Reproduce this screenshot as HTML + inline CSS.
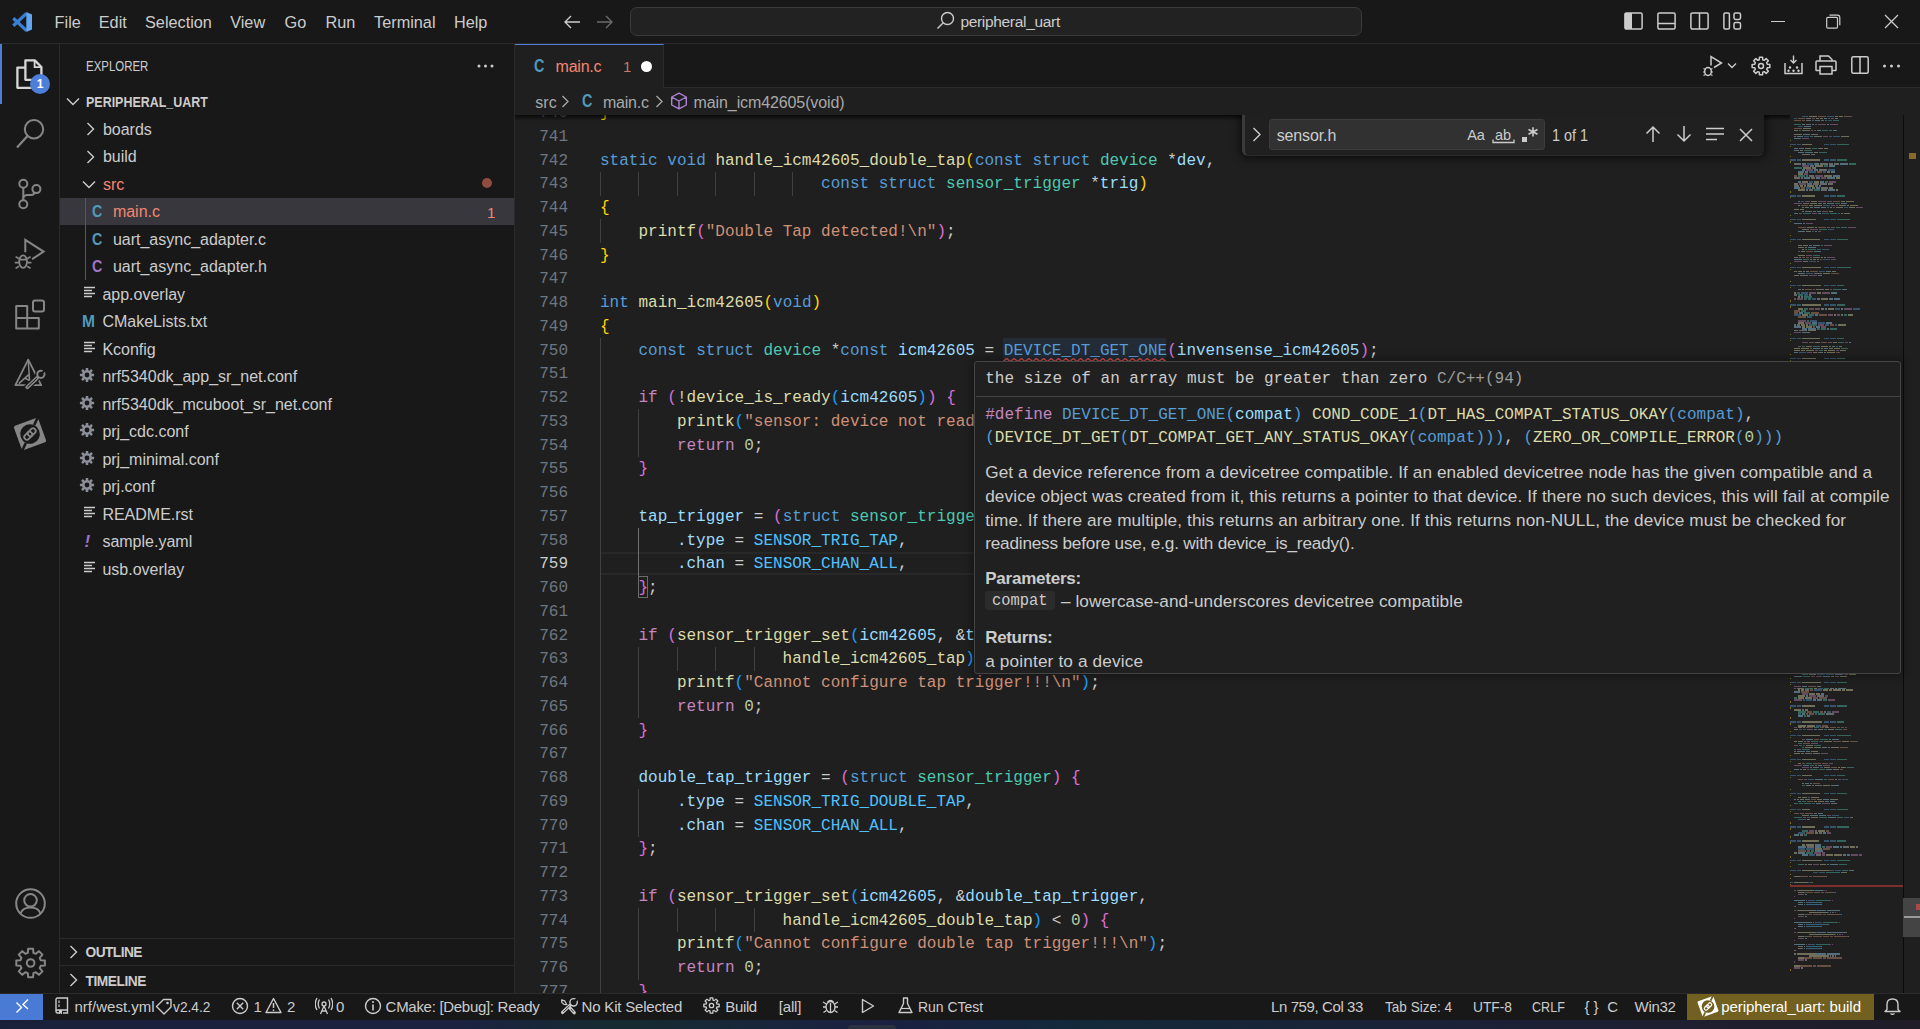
<!DOCTYPE html>
<html><head><meta charset="utf-8">
<style>
*{box-sizing:border-box;margin:0;padding:0}
html,body{width:1920px;height:1029px;overflow:hidden;background:#181818;font-family:"Liberation Sans",sans-serif;color:#cccccc}
.a{position:absolute}
.t{position:absolute;white-space:pre;font-size:16px;line-height:20px}
#titlebar{left:0;top:0;width:1920px;height:44px;background:#181818;border-bottom:1px solid #2b2b2b}
#activity{left:0;top:44px;width:60px;height:949px;background:#181818;border-right:1px solid #2b2b2b}
#sidebar{left:60px;top:44px;width:455px;height:949px;background:#181818;border-right:1px solid #2b2b2b}
#tabs{left:515px;top:44px;width:1405px;height:44px;background:#181818;border-bottom:1px solid #2b2b2b}
#editor{left:515px;top:88px;width:1405px;height:905px;background:#1f1f1f}
#status{left:0;top:993px;width:1920px;height:27px;background:#181818;border-top:1px solid #2b2b2b}
#taskbar{left:0;top:1020px;width:1920px;height:9px;background:linear-gradient(90deg,#19213a 0%,#1a2240 24%,#152b30 32%,#1a2142 46%,#13293a 56%,#1c2036 78%,#201d28 100%)}
.code{position:absolute;white-space:pre;font-family:"Liberation Mono",monospace;font-size:16.03px;line-height:23.75px;height:23.75px;color:#cccccc}
.ln{position:absolute;white-space:pre;font-family:"Liberation Mono",monospace;font-size:16.03px;line-height:23.75px;height:23.75px;color:#6e7681;text-align:right;width:53px;left:0}
.ln.act{color:#cccccc}
.k{color:#569cd6}.c{color:#c586c0}.f{color:#dcdcaa}.ty{color:#4ec9b0}.v{color:#9cdcfe}.s{color:#ce9178}.n{color:#b5cea8}.m{color:#4fc1ff}
.b1{color:#ffd700}.b2{color:#da70d6}.b3{color:#179fff}
</style></head><body>
<div id="titlebar" class="a"></div>
<div id="activity" class="a"></div>
<div id="sidebar" class="a"></div>
<div id="tabs" class="a"></div>
<div id="editor" class="a"></div>
<div id="status" class="a"></div>
<div id="taskbar" class="a"></div>

<svg class="a" style="left:10px;top:10px" width="24" height="24" viewBox="10 10 24 24" fill="none"><path d="M13.3 18.3 L26.5 30.6" stroke="#3b7fd4" stroke-width="3.3"/><path d="M13.3 25.7 L26.5 13.4" stroke="#3b7fd4" stroke-width="3.3"/><path d="M26.3 12 L32 14.6 V29.4 L26.3 32 Z" fill="#62a6f2"/></svg>
<svg class="a" style="left:562px;top:12px;" width="20" height="20" viewBox="0 0 20 20" fill="none"><path d="M18 10H3M9 4L3 10L9 16" stroke="#cccccc" stroke-width="1.4"/></svg>
<svg class="a" style="left:595px;top:12px;" width="20" height="20" viewBox="0 0 20 20" fill="none"><path d="M2 10H17M11 4L17 10L11 16" stroke="#6b6b6b" stroke-width="1.4"/></svg>
<div class="a" style="left:630px;top:7px;width:732px;height:29px;border:1px solid #3a3a3a;border-radius:7px;background:#222222"></div>
<svg class="a" style="left:936px;top:10.5px;" width="19" height="19" viewBox="0 0 19 19" fill="none"><circle cx="11.5" cy="7.5" r="6" stroke="#cccccc" stroke-width="1.4"/><path d="M7.3 11.7L1.5 17.5" stroke="#cccccc" stroke-width="1.4"/></svg>
<svg class="a" style="left:1624px;top:12px;" width="20" height="18" viewBox="0 0 20 18" fill="none"><rect x="0.9" y="0.9" width="17.2" height="16.2" rx="1.5" stroke="#cccccc" stroke-width="1.5"/><rect x="1" y="1" width="7" height="16" fill="#cccccc"/></svg>
<svg class="a" style="left:1657px;top:12px;" width="19" height="18" viewBox="0 0 19 18" fill="none"><rect x="0.9" y="0.9" width="17.2" height="16.2" rx="1.5" stroke="#cccccc" stroke-width="1.5"/><path d="M1 11.5H18" stroke="#cccccc" stroke-width="1.5"/></svg>
<svg class="a" style="left:1690px;top:12px;" width="19" height="18" viewBox="0 0 19 18" fill="none"><rect x="0.9" y="0.9" width="17.2" height="16.2" rx="1.5" stroke="#cccccc" stroke-width="1.5"/><path d="M9.5 1V17" stroke="#cccccc" stroke-width="1.5"/></svg>
<svg class="a" style="left:1723px;top:12px;" width="19" height="18" viewBox="0 0 19 18" fill="none"><rect x="0.9" y="0.9" width="5.5" height="16.2" rx="1.3" stroke="#cccccc" stroke-width="1.5"/><rect x="11" y="0.9" width="6.5" height="6.5" rx="1.6" stroke="#cccccc" stroke-width="1.5"/><rect x="11" y="10.5" width="6.5" height="6.5" rx="1.6" stroke="#cccccc" stroke-width="1.5"/></svg>
<div class="a" style="left:1770.5px;top:21px;width:14px;height:1.3px;background:#cccccc;"></div>
<svg class="a" style="left:1826px;top:14px;" width="15" height="15" viewBox="0 0 15 15" fill="none"><rect x="0.7" y="3.3" width="10.8" height="10.8" rx="1.2" stroke="#cccccc" stroke-width="1.2"/><path d="M3.5 1.2H11.5Q13.8 1.2 13.8 3.5V11.3" stroke="#cccccc" stroke-width="1.2"/></svg>
<svg class="a" style="left:1884px;top:14px;" width="15" height="15" viewBox="0 0 15 15" fill="none"><path d="M1 1L14 14M14 1L1 14" stroke="#cccccc" stroke-width="1.3"/></svg>
<div class="a" style="left:0px;top:44px;width:2px;height:60px;background:#4d7fd8;"></div>
<svg class="a" style="left:0px;top:44px" width="60" height="60" viewBox="0 44 60 60" fill="none"><path d="M25.2 67.6 H17.4 V87.8 H32" stroke="#d7d7d7" stroke-width="2.3" stroke-linejoin="round"/><path d="M25.4 60.4 H34.8 L41.4 67 V79.8 H25.4 Z" stroke="#d7d7d7" stroke-width="2.3" stroke-linejoin="round"/><path d="M34.6 60.6 V67.2 H41.2" stroke="#d7d7d7" stroke-width="1.8"/></svg>
<div class="a" style="left:30px;top:74px;width:20px;height:20px;border-radius:10px;background:#4d7fd8;color:#fff;font-size:12px;font-weight:bold;text-align:center;line-height:20px">1</div>
<svg class="a" style="left:14px;top:115px;" width="32" height="36" viewBox="0 0 32 36" fill="none"><circle cx="20" cy="14.2" r="9.2" stroke="#868686" stroke-width="2"/><path d="M13.5 21 L3 32.5" stroke="#868686" stroke-width="2.2"/></svg>
<svg class="a" style="left:14px;top:175px;" width="32" height="36" viewBox="0 0 32 36" fill="none"><circle cx="9.3" cy="8.8" r="4" stroke="#868686" stroke-width="2"/><circle cx="22.4" cy="14.1" r="4" stroke="#868686" stroke-width="2"/><circle cx="9.3" cy="29.3" r="4" stroke="#868686" stroke-width="2"/><path d="M9.3 12.8 V25.3" stroke="#868686" stroke-width="2"/><path d="M9.3 23 Q9.3 20 14 20 H17 Q20 20 20.5 17.5" stroke="#868686" stroke-width="2"/></svg>
<svg class="a" style="left:0px;top:230px" width="60" height="45" viewBox="0 230 60 45" fill="none"><path d="M25.3 252.3 V239.8 L43.6 251.6 L32.1 259.2" stroke="#868686" stroke-width="2" stroke-linejoin="miter"/><ellipse cx="23.1" cy="261.6" rx="3.9" ry="6.2" stroke="#868686" stroke-width="1.8"/><path d="M19.3 259.6 H26.9 M15.6 256.6 L19 258.8 M30.6 256.6 L27.2 258.8 M14.8 262.6 H19 M27.2 262.6 H31.4 M15.6 268.4 L19 266.2 M30.6 268.4 L27.2 266.2" stroke="#868686" stroke-width="1.7"/></svg>
<svg class="a" style="left:0px;top:290px" width="60" height="50" viewBox="0 290 60 50" fill="none"><path d="M16.2 306 H27.2 V318 H38.8 V328.6 H16.2 Z" stroke="#868686" stroke-width="2" stroke-linejoin="round"/><path d="M16.2 318 H27.2 V328.6" stroke="#868686" stroke-width="2"/><rect x="33" y="300.4" width="11" height="11" rx="2" stroke="#868686" stroke-width="2"/></svg>
<svg class="a" style="left:0px;top:350px" width="60" height="45" viewBox="0 350 60 45" fill="none"><path d="M28.2 359.6 L15.4 385.2 H41.2 Z" stroke="#868686" stroke-width="1.8" stroke-linejoin="round"/><path d="M28.2 360.5 L29.6 380 M18.8 383.6 L28.8 374.6 L29.6 380 L32 381.8 M24.7 378 L32 381.8" stroke="#868686" stroke-width="1.5"/><path d="M26.5 388 L37.5 377.5" stroke="#181818" stroke-width="6.5" stroke-linecap="round"/><circle cx="40.9" cy="374.3" r="5.8" fill="#181818"/><path d="M27.2 387.3 L37.2 377.8" stroke="#868686" stroke-width="3.8" stroke-linecap="round"/><path d="M27.8 386.7 L36.6 378.4" stroke="#181818" stroke-width="1.0" stroke-linecap="round"/><circle cx="40.9" cy="374.3" r="3.6" stroke="#868686" stroke-width="2"/><path d="M40.9 374.3 L44.5 370.5" stroke="#181818" stroke-width="2.2"/></svg>
<svg class="a" style="left:0px;top:410px" width="60" height="50" viewBox="0 410 60 50" fill="none"><g transform="rotate(-20 30 434)"><path fill-rule="evenodd" d="M19.5 421 H40.5 Q43 421 43 423.5 V444.5 Q43 447 40.5 447 H19.5 Q17 447 17 444.5 V423.5 Q17 421 19.5 421 Z M30 424.2 A9.8 9.8 0 1 0 30 443.8 A9.8 9.8 0 1 0 30 424.2 Z" fill="#868686"/><path d="M37 427 L44 420 M23 441 L16 448" stroke="#181818" stroke-width="2.6"/></g><g transform="rotate(-45 30 434)"><rect x="23" y="431.3" width="9" height="5.4" rx="2.7" stroke="#868686" stroke-width="1.8"/><rect x="28" y="431.3" width="9" height="5.4" rx="2.7" stroke="#868686" stroke-width="1.8"/></g></svg>
<svg class="a" style="left:14px;top:887px;" width="32" height="32" viewBox="0 0 32 32" fill="none"><circle cx="16.5" cy="16.5" r="14.3" stroke="#868686" stroke-width="2"/><circle cx="16.5" cy="13.3" r="6.3" stroke="#868686" stroke-width="2"/><path d="M6.5 26.5 Q8.5 20.5 16.5 20.5 Q24.5 20.5 26.5 26.5" stroke="#868686" stroke-width="2"/></svg>
<svg class="a" style="left:13.5px;top:947px;" width="32" height="32" viewBox="0 0 32 32" fill="none"><polygon points="26.72,13.20 30.88,13.51 30.88,18.49 26.72,18.80 25.74,21.18 28.46,24.34 24.94,27.86 21.78,25.14 19.40,26.12 19.09,30.28 14.11,30.28 13.80,26.12 11.42,25.14 8.26,27.86 4.74,24.34 7.46,21.18 6.48,18.80 2.32,18.49 2.32,13.51 6.48,13.20 7.46,10.82 4.74,7.66 8.26,4.14 11.42,6.86 13.80,5.88 14.11,1.72 19.09,1.72 19.40,5.88 21.78,6.86 24.94,4.14 28.46,7.66 25.74,10.82" stroke="#868686" stroke-width="2" stroke-linejoin="round" fill="none"/><circle cx="16.6" cy="16" r="3.8" stroke="#868686" stroke-width="2"/></svg>
<svg class="a" style="left:476px;top:62px;" width="20" height="8" viewBox="0 0 20 8" fill="none"><circle cx="3" cy="4" r="1.5" fill="#cccccc"/><circle cx="9.5" cy="4" r="1.5" fill="#cccccc"/><circle cx="16" cy="4" r="1.5" fill="#cccccc"/></svg>
<svg class="a" style="left:65.5px;top:97px;" width="14" height="9" viewBox="0 0 14 9" fill="none"><path d="M1 1.5 L7 7.5 L13 1.5" stroke="#cccccc" stroke-width="1.4"/></svg>
<div class="a" style="left:60px;top:198.3px;width:454px;height:26.6px;background:#37373d;"></div>
<div class="a" style="left:85px;top:198px;width:1px;height:82px;background:#585858;"></div>
<svg class="a" style="left:85.5px;top:122.4px;" width="9" height="14" viewBox="0 0 9 14" fill="none"><path d="M1.5 1 L7.5 7 L1.5 13" stroke="#cccccc" stroke-width="1.4"/></svg>
<svg class="a" style="left:85.5px;top:149.9px;" width="9" height="14" viewBox="0 0 9 14" fill="none"><path d="M1.5 1 L7.5 7 L1.5 13" stroke="#cccccc" stroke-width="1.4"/></svg>
<svg class="a" style="left:82px;top:180.4px;" width="14" height="9" viewBox="0 0 14 9" fill="none"><path d="M1 1.5 L7 7.5 L13 1.5" stroke="#cccccc" stroke-width="1.4"/></svg>
<svg class="a" style="left:83px;top:286.4px;" width="14" height="12" viewBox="0 0 14 12" fill="none"><path d="M1 1.5H12M1 4.5H9M1 7.5H12M1 10.5H9" stroke="#cccccc" stroke-width="1.5"/></svg>
<svg class="a" style="left:83px;top:341.4px;" width="14" height="12" viewBox="0 0 14 12" fill="none"><path d="M1 1.5H12M1 4.5H9M1 7.5H12M1 10.5H9" stroke="#cccccc" stroke-width="1.5"/></svg>
<svg class="a" style="left:79px;top:367.4px;" width="16" height="16" viewBox="0 0 16 16" fill="none"><polygon points="12.82,6.67 15.09,6.76 15.09,9.24 12.82,9.33 12.35,10.46 13.89,12.14 12.14,13.89 10.46,12.35 9.33,12.82 9.24,15.09 6.76,15.09 6.67,12.82 5.54,12.35 3.86,13.89 2.11,12.14 3.65,10.46 3.18,9.33 0.91,9.24 0.91,6.76 3.18,6.67 3.65,5.54 2.11,3.86 3.86,2.11 5.54,3.65 6.67,3.18 6.76,0.91 9.24,0.91 9.33,3.18 10.46,3.65 12.14,2.11 13.89,3.86 12.35,5.54" stroke="#8a939e" stroke-width="0" stroke-linejoin="round" fill="#8a8f98"/><circle fill="#181818" cx="8" cy="8" r="2.4" stroke="#8a939e" stroke-width="0"/></svg>
<svg class="a" style="left:79px;top:394.9px;" width="16" height="16" viewBox="0 0 16 16" fill="none"><polygon points="12.82,6.67 15.09,6.76 15.09,9.24 12.82,9.33 12.35,10.46 13.89,12.14 12.14,13.89 10.46,12.35 9.33,12.82 9.24,15.09 6.76,15.09 6.67,12.82 5.54,12.35 3.86,13.89 2.11,12.14 3.65,10.46 3.18,9.33 0.91,9.24 0.91,6.76 3.18,6.67 3.65,5.54 2.11,3.86 3.86,2.11 5.54,3.65 6.67,3.18 6.76,0.91 9.24,0.91 9.33,3.18 10.46,3.65 12.14,2.11 13.89,3.86 12.35,5.54" stroke="#8a939e" stroke-width="0" stroke-linejoin="round" fill="#8a8f98"/><circle fill="#181818" cx="8" cy="8" r="2.4" stroke="#8a939e" stroke-width="0"/></svg>
<svg class="a" style="left:79px;top:422.4px;" width="16" height="16" viewBox="0 0 16 16" fill="none"><polygon points="12.82,6.67 15.09,6.76 15.09,9.24 12.82,9.33 12.35,10.46 13.89,12.14 12.14,13.89 10.46,12.35 9.33,12.82 9.24,15.09 6.76,15.09 6.67,12.82 5.54,12.35 3.86,13.89 2.11,12.14 3.65,10.46 3.18,9.33 0.91,9.24 0.91,6.76 3.18,6.67 3.65,5.54 2.11,3.86 3.86,2.11 5.54,3.65 6.67,3.18 6.76,0.91 9.24,0.91 9.33,3.18 10.46,3.65 12.14,2.11 13.89,3.86 12.35,5.54" stroke="#8a939e" stroke-width="0" stroke-linejoin="round" fill="#8a8f98"/><circle fill="#181818" cx="8" cy="8" r="2.4" stroke="#8a939e" stroke-width="0"/></svg>
<svg class="a" style="left:79px;top:449.9px;" width="16" height="16" viewBox="0 0 16 16" fill="none"><polygon points="12.82,6.67 15.09,6.76 15.09,9.24 12.82,9.33 12.35,10.46 13.89,12.14 12.14,13.89 10.46,12.35 9.33,12.82 9.24,15.09 6.76,15.09 6.67,12.82 5.54,12.35 3.86,13.89 2.11,12.14 3.65,10.46 3.18,9.33 0.91,9.24 0.91,6.76 3.18,6.67 3.65,5.54 2.11,3.86 3.86,2.11 5.54,3.65 6.67,3.18 6.76,0.91 9.24,0.91 9.33,3.18 10.46,3.65 12.14,2.11 13.89,3.86 12.35,5.54" stroke="#8a939e" stroke-width="0" stroke-linejoin="round" fill="#8a8f98"/><circle fill="#181818" cx="8" cy="8" r="2.4" stroke="#8a939e" stroke-width="0"/></svg>
<svg class="a" style="left:79px;top:477.4px;" width="16" height="16" viewBox="0 0 16 16" fill="none"><polygon points="12.82,6.67 15.09,6.76 15.09,9.24 12.82,9.33 12.35,10.46 13.89,12.14 12.14,13.89 10.46,12.35 9.33,12.82 9.24,15.09 6.76,15.09 6.67,12.82 5.54,12.35 3.86,13.89 2.11,12.14 3.65,10.46 3.18,9.33 0.91,9.24 0.91,6.76 3.18,6.67 3.65,5.54 2.11,3.86 3.86,2.11 5.54,3.65 6.67,3.18 6.76,0.91 9.24,0.91 9.33,3.18 10.46,3.65 12.14,2.11 13.89,3.86 12.35,5.54" stroke="#8a939e" stroke-width="0" stroke-linejoin="round" fill="#8a8f98"/><circle fill="#181818" cx="8" cy="8" r="2.4" stroke="#8a939e" stroke-width="0"/></svg>
<svg class="a" style="left:83px;top:506.4px;" width="14" height="12" viewBox="0 0 14 12" fill="none"><path d="M1 1.5H12M1 4.5H9M1 7.5H12M1 10.5H9" stroke="#cccccc" stroke-width="1.5"/></svg>
<svg class="a" style="left:83px;top:561.4px;" width="14" height="12" viewBox="0 0 14 12" fill="none"><path d="M1 1.5H12M1 4.5H9M1 7.5H12M1 10.5H9" stroke="#cccccc" stroke-width="1.5"/></svg>
<div class="a" style="left:482px;top:178px;width:10px;height:10px;border-radius:5px;background:#8f4c3f"></div>
<div class="a" style="left:60px;top:938px;width:454px;height:1px;background:#2b2b2b;"></div>
<div class="a" style="left:60px;top:965px;width:454px;height:1px;background:#2b2b2b;"></div>
<svg class="a" style="left:69px;top:945px;" width="9" height="14" viewBox="0 0 9 14" fill="none"><path d="M1.5 1 L7.5 7 L1.5 13" stroke="#cccccc" stroke-width="1.4"/></svg>
<svg class="a" style="left:69px;top:973px;" width="9" height="14" viewBox="0 0 9 14" fill="none"><path d="M1.5 1 L7.5 7 L1.5 13" stroke="#cccccc" stroke-width="1.4"/></svg>
<div class="a" style="left:515px;top:44px;width:149px;height:44px;background:#1f1f1f;border-top:1.5px solid #4d7fd8;border-right:1px solid #2b2b2b"></div>
<div class="a" style="left:641px;top:60.5px;width:11px;height:11px;border-radius:6px;background:#ffffff"></div>
<svg class="a" style="left:1701px;top:55px;" width="38" height="22" viewBox="0 0 38 22" fill="none"><path d="M10 10.5 V1.5 L20.5 8 L13 12.5" stroke="#cccccc" stroke-width="1.5"/><ellipse cx="7" cy="16.5" rx="3.3" ry="4" stroke="#cccccc" stroke-width="1.5"/><path d="M2.5 13.5L4.5 14.5M11.5 13.5L9.5 14.5M2 17H3.5M10.5 17H12M2.5 20.5L4.5 19.5M11.5 20.5L9.5 19.5" stroke="#cccccc" stroke-width="1.2"/><path d="M27 8.5 L31 12.5 L35 8.5" stroke="#cccccc" stroke-width="1.3"/></svg>
<svg class="a" style="left:1751px;top:56px;" width="20" height="20" viewBox="0 0 20 20" fill="none"><polygon points="16.26,8.27 18.87,8.45 18.87,11.55 16.26,11.73 15.66,13.20 17.36,15.18 15.18,17.36 13.20,15.66 11.73,16.26 11.55,18.87 8.45,18.87 8.27,16.26 6.80,15.66 4.82,17.36 2.64,15.18 4.34,13.20 3.74,11.73 1.13,11.55 1.13,8.45 3.74,8.27 4.34,6.80 2.64,4.82 4.82,2.64 6.80,4.34 8.27,3.74 8.45,1.13 11.55,1.13 11.73,3.74 13.20,4.34 15.18,2.64 17.36,4.82 15.66,6.80" stroke="#cccccc" stroke-width="1.5" stroke-linejoin="round" fill="none"/><circle cx="10" cy="10" r="2.5" stroke="#cccccc" stroke-width="1.5"/></svg>
<svg class="a" style="left:1784px;top:55px;" width="19" height="20" viewBox="0 0 19 20" fill="none"><path d="M1 8 V18.5 H18 V8" stroke="#cccccc" stroke-width="1.5"/><path d="M9.5 0.5 V8 M6.5 5 L9.5 8 L12.5 5" stroke="#cccccc" stroke-width="1.4"/><circle cx="6" cy="12.5" r="1.2" fill="#cccccc"/><circle cx="13" cy="12.5" r="1.2" fill="#cccccc"/><circle cx="4.5" cy="15.8" r="1.2" fill="#cccccc"/><circle cx="9.5" cy="15.8" r="1.2" fill="#cccccc"/><circle cx="14.5" cy="15.8" r="1.2" fill="#cccccc"/></svg>
<svg class="a" style="left:1815px;top:55px;" width="22" height="20" viewBox="0 0 22 20" fill="none"><path d="M5 6 V1 H13.5 L17 4.5 V6" stroke="#cccccc" stroke-width="1.5"/><path d="M5 15.5 H1.5 Q1 15.5 1 15 V7 Q1 6 2 6 H20 Q21 6 21 7 V15 Q21 15.5 20.5 15.5 H17" stroke="#cccccc" stroke-width="1.5"/><rect x="5" y="11.5" width="12" height="7.5" stroke="#cccccc" stroke-width="1.5"/></svg>
<svg class="a" style="left:1851px;top:56px;" width="18" height="18" viewBox="0 0 18 18" fill="none"><rect x="0.8" y="0.8" width="16.4" height="16.4" rx="1.5" stroke="#cccccc" stroke-width="1.5"/><path d="M9 1V17" stroke="#cccccc" stroke-width="1.5"/></svg>
<svg class="a" style="left:1882px;top:63px;" width="19" height="6" viewBox="0 0 19 6" fill="none"><circle cx="2.5" cy="3" r="1.5" fill="#cccccc"/><circle cx="9.5" cy="3" r="1.5" fill="#cccccc"/><circle cx="16.5" cy="3" r="1.5" fill="#cccccc"/></svg>
<svg class="a" style="left:561px;top:95px;" width="9" height="13" viewBox="0 0 9 13" fill="none"><path d="M1.5 1 L7 6.5 L1.5 12" stroke="#a9a9a9" stroke-width="1.3"/></svg>
<svg class="a" style="left:655px;top:95px;" width="9" height="13" viewBox="0 0 9 13" fill="none"><path d="M1.5 1 L7 6.5 L1.5 12" stroke="#a9a9a9" stroke-width="1.3"/></svg>
<svg class="a" style="left:670px;top:92px;" width="18" height="18" viewBox="0 0 18 18" fill="none"><path d="M9 1.2 L16.3 5 V13 L9 16.8 L1.7 13 V5 Z M1.7 5 L9 9 L16.3 5 M9 9 V16.8" stroke="#b180d7" stroke-width="1.4" stroke-linejoin="round"/></svg>
<div class="a" style="left:515px;top:115px;width:1275px;height:878px;overflow:hidden">
<div class="a" style="left:85.00px;top:436.50px;width:1190px;height:23.75px;border-top:2px solid #282828;border-bottom:2px solid #282828"></div>
<div class="a" style="left:488.20px;top:222.75px;width:163.20px;height:23.75px;background:#232b36"></div>
<div class="ln" style="top:-12.85px">740</div>
<div class="code" style="left:85.00px;top:-12.85px"><span class="b1">}</span></div>
<div class="ln" style="top:10.90px">741</div>
<div class="code" style="left:85.00px;top:10.90px"></div>
<div class="ln" style="top:34.65px">742</div>
<div class="code" style="left:85.00px;top:34.65px"><span class="k">static</span> <span class="k">void</span> <span class="f">handle_icm42605_double_tap</span><span class="b1">(</span><span class="k">const</span> <span class="k">struct</span> <span class="ty">device</span> *<span class="v">dev</span>,</div>
<div class="ln" style="top:58.40px">743</div>
<div class="code" style="left:85.00px;top:58.40px">                       <span class="k">const</span> <span class="k">struct</span> <span class="ty">sensor_trigger</span> *<span class="v">trig</span><span class="b1">)</span></div>
<div class="a" style="left:85.00px;top:56.50px;width:1px;height:24.25px;background:#404040"></div>
<div class="a" style="left:123.40px;top:56.50px;width:1px;height:24.25px;background:#404040"></div>
<div class="a" style="left:161.80px;top:56.50px;width:1px;height:24.25px;background:#404040"></div>
<div class="a" style="left:200.20px;top:56.50px;width:1px;height:24.25px;background:#404040"></div>
<div class="a" style="left:238.60px;top:56.50px;width:1px;height:24.25px;background:#404040"></div>
<div class="a" style="left:277.00px;top:56.50px;width:1px;height:24.25px;background:#404040"></div>
<div class="ln" style="top:82.15px">744</div>
<div class="code" style="left:85.00px;top:82.15px"><span class="b1">{</span></div>
<div class="ln" style="top:105.90px">745</div>
<div class="code" style="left:85.00px;top:105.90px">    <span class="f">printf</span><span class="b2">(</span><span class="s">&quot;Double Tap detected!\n&quot;</span><span class="b2">)</span>;</div>
<div class="a" style="left:85.00px;top:104.00px;width:1px;height:24.25px;background:#404040"></div>
<div class="ln" style="top:129.65px">746</div>
<div class="code" style="left:85.00px;top:129.65px"><span class="b1">}</span></div>
<div class="ln" style="top:153.40px">747</div>
<div class="code" style="left:85.00px;top:153.40px"></div>
<div class="ln" style="top:177.15px">748</div>
<div class="code" style="left:85.00px;top:177.15px"><span class="k">int</span> <span class="f">main_icm42605</span><span class="b1">(</span><span class="k">void</span><span class="b1">)</span></div>
<div class="ln" style="top:200.90px">749</div>
<div class="code" style="left:85.00px;top:200.90px"><span class="b1">{</span></div>
<div class="ln" style="top:224.65px">750</div>
<div class="code" style="left:85.00px;top:224.65px">    <span class="k">const</span> <span class="k">struct</span> <span class="ty">device</span> *<span class="k">const</span> <span class="v">icm42605</span> = <span class="k">DEVICE_DT_GET_ONE</span><span class="b2">(</span><span class="v">invensense_icm42605</span><span class="b2">)</span>;</div>
<div class="a" style="left:85.00px;top:222.75px;width:1px;height:24.25px;background:#404040"></div>
<div class="ln" style="top:248.40px">751</div>
<div class="code" style="left:85.00px;top:248.40px"></div>
<div class="a" style="left:85.00px;top:246.50px;width:1px;height:24.25px;background:#404040"></div>
<div class="ln" style="top:272.15px">752</div>
<div class="code" style="left:85.00px;top:272.15px">    <span class="c">if</span> <span class="b2">(</span>!<span class="f">device_is_ready</span><span class="b3">(</span><span class="v">icm42605</span><span class="b3">)</span><span class="b2">)</span> <span class="b2">{</span></div>
<div class="a" style="left:85.00px;top:270.25px;width:1px;height:24.25px;background:#404040"></div>
<div class="ln" style="top:295.90px">753</div>
<div class="code" style="left:85.00px;top:295.90px">        <span class="f">printk</span><span class="b3">(</span><span class="s">&quot;sensor: device not ready.\n&quot;</span><span class="b3">)</span>;</div>
<div class="a" style="left:85.00px;top:294.00px;width:1px;height:24.25px;background:#404040"></div>
<div class="a" style="left:123.40px;top:294.00px;width:1px;height:24.25px;background:#404040"></div>
<div class="ln" style="top:319.65px">754</div>
<div class="code" style="left:85.00px;top:319.65px">        <span class="c">return</span> <span class="n">0</span>;</div>
<div class="a" style="left:85.00px;top:317.75px;width:1px;height:24.25px;background:#404040"></div>
<div class="a" style="left:123.40px;top:317.75px;width:1px;height:24.25px;background:#404040"></div>
<div class="ln" style="top:343.40px">755</div>
<div class="code" style="left:85.00px;top:343.40px">    <span class="b2">}</span></div>
<div class="a" style="left:85.00px;top:341.50px;width:1px;height:24.25px;background:#404040"></div>
<div class="ln" style="top:367.15px">756</div>
<div class="code" style="left:85.00px;top:367.15px"></div>
<div class="a" style="left:85.00px;top:365.25px;width:1px;height:24.25px;background:#404040"></div>
<div class="ln" style="top:390.90px">757</div>
<div class="code" style="left:85.00px;top:390.90px">    <span class="v">tap_trigger</span> = <span class="b2">(</span><span class="k">struct</span> <span class="ty">sensor_trigger</span><span class="b2">)</span> <span class="b2">{</span></div>
<div class="a" style="left:85.00px;top:389.00px;width:1px;height:24.25px;background:#404040"></div>
<div class="ln" style="top:414.65px">758</div>
<div class="code" style="left:85.00px;top:414.65px">        <span class="v">.type</span> = <span class="m">SENSOR_TRIG_TAP</span>,</div>
<div class="a" style="left:85.00px;top:412.75px;width:1px;height:24.25px;background:#404040"></div>
<div class="a" style="left:123.40px;top:412.75px;width:1px;height:24.25px;background:#707070"></div>
<div class="ln act" style="top:438.40px">759</div>
<div class="code" style="left:85.00px;top:438.40px">        <span class="v">.chan</span> = <span class="m">SENSOR_CHAN_ALL</span>,</div>
<div class="a" style="left:85.00px;top:436.50px;width:1px;height:24.25px;background:#404040"></div>
<div class="a" style="left:123.40px;top:436.50px;width:1px;height:24.25px;background:#707070"></div>
<div class="ln" style="top:462.15px">760</div>
<div class="code" style="left:85.00px;top:462.15px">    <span class="b2">}</span>;</div>
<div class="a" style="left:85.00px;top:460.25px;width:1px;height:24.25px;background:#404040"></div>
<div class="ln" style="top:485.90px">761</div>
<div class="code" style="left:85.00px;top:485.90px"></div>
<div class="a" style="left:85.00px;top:484.00px;width:1px;height:24.25px;background:#404040"></div>
<div class="ln" style="top:509.65px">762</div>
<div class="code" style="left:85.00px;top:509.65px">    <span class="c">if</span> <span class="b2">(</span><span class="f">sensor_trigger_set</span><span class="b3">(</span><span class="v">icm42605</span>, &amp;<span class="v">tap_trigger</span>,</div>
<div class="a" style="left:85.00px;top:507.75px;width:1px;height:24.25px;background:#404040"></div>
<div class="ln" style="top:533.40px">763</div>
<div class="code" style="left:85.00px;top:533.40px">                   <span class="f">handle_icm42605_tap</span><span class="b3">)</span> &lt; <span class="n">0</span><span class="b2">)</span> <span class="b2">{</span></div>
<div class="a" style="left:85.00px;top:531.50px;width:1px;height:24.25px;background:#404040"></div>
<div class="a" style="left:123.40px;top:531.50px;width:1px;height:24.25px;background:#404040"></div>
<div class="a" style="left:161.80px;top:531.50px;width:1px;height:24.25px;background:#404040"></div>
<div class="a" style="left:200.20px;top:531.50px;width:1px;height:24.25px;background:#404040"></div>
<div class="a" style="left:238.60px;top:531.50px;width:1px;height:24.25px;background:#404040"></div>
<div class="ln" style="top:557.15px">764</div>
<div class="code" style="left:85.00px;top:557.15px">        <span class="f">printf</span><span class="b3">(</span><span class="s">&quot;Cannot configure tap trigger!!!\n&quot;</span><span class="b3">)</span>;</div>
<div class="a" style="left:85.00px;top:555.25px;width:1px;height:24.25px;background:#404040"></div>
<div class="a" style="left:123.40px;top:555.25px;width:1px;height:24.25px;background:#404040"></div>
<div class="ln" style="top:580.90px">765</div>
<div class="code" style="left:85.00px;top:580.90px">        <span class="c">return</span> <span class="n">0</span>;</div>
<div class="a" style="left:85.00px;top:579.00px;width:1px;height:24.25px;background:#404040"></div>
<div class="a" style="left:123.40px;top:579.00px;width:1px;height:24.25px;background:#404040"></div>
<div class="ln" style="top:604.65px">766</div>
<div class="code" style="left:85.00px;top:604.65px">    <span class="b2">}</span></div>
<div class="a" style="left:85.00px;top:602.75px;width:1px;height:24.25px;background:#404040"></div>
<div class="ln" style="top:628.40px">767</div>
<div class="code" style="left:85.00px;top:628.40px"></div>
<div class="a" style="left:85.00px;top:626.50px;width:1px;height:24.25px;background:#404040"></div>
<div class="ln" style="top:652.15px">768</div>
<div class="code" style="left:85.00px;top:652.15px">    <span class="v">double_tap_trigger</span> = <span class="b2">(</span><span class="k">struct</span> <span class="ty">sensor_trigger</span><span class="b2">)</span> <span class="b2">{</span></div>
<div class="a" style="left:85.00px;top:650.25px;width:1px;height:24.25px;background:#404040"></div>
<div class="ln" style="top:675.90px">769</div>
<div class="code" style="left:85.00px;top:675.90px">        <span class="v">.type</span> = <span class="m">SENSOR_TRIG_DOUBLE_TAP</span>,</div>
<div class="a" style="left:85.00px;top:674.00px;width:1px;height:24.25px;background:#404040"></div>
<div class="a" style="left:123.40px;top:674.00px;width:1px;height:24.25px;background:#404040"></div>
<div class="ln" style="top:699.65px">770</div>
<div class="code" style="left:85.00px;top:699.65px">        <span class="v">.chan</span> = <span class="m">SENSOR_CHAN_ALL</span>,</div>
<div class="a" style="left:85.00px;top:697.75px;width:1px;height:24.25px;background:#404040"></div>
<div class="a" style="left:123.40px;top:697.75px;width:1px;height:24.25px;background:#404040"></div>
<div class="ln" style="top:723.40px">771</div>
<div class="code" style="left:85.00px;top:723.40px">    <span class="b2">}</span>;</div>
<div class="a" style="left:85.00px;top:721.50px;width:1px;height:24.25px;background:#404040"></div>
<div class="ln" style="top:747.15px">772</div>
<div class="code" style="left:85.00px;top:747.15px"></div>
<div class="a" style="left:85.00px;top:745.25px;width:1px;height:24.25px;background:#404040"></div>
<div class="ln" style="top:770.90px">773</div>
<div class="code" style="left:85.00px;top:770.90px">    <span class="c">if</span> <span class="b2">(</span><span class="f">sensor_trigger_set</span><span class="b3">(</span><span class="v">icm42605</span>, &amp;<span class="v">double_tap_trigger</span>,</div>
<div class="a" style="left:85.00px;top:769.00px;width:1px;height:24.25px;background:#404040"></div>
<div class="ln" style="top:794.65px">774</div>
<div class="code" style="left:85.00px;top:794.65px">                   <span class="f">handle_icm42605_double_tap</span><span class="b3">)</span> &lt; <span class="n">0</span><span class="b2">)</span> <span class="b2">{</span></div>
<div class="a" style="left:85.00px;top:792.75px;width:1px;height:24.25px;background:#404040"></div>
<div class="a" style="left:123.40px;top:792.75px;width:1px;height:24.25px;background:#404040"></div>
<div class="a" style="left:161.80px;top:792.75px;width:1px;height:24.25px;background:#404040"></div>
<div class="a" style="left:200.20px;top:792.75px;width:1px;height:24.25px;background:#404040"></div>
<div class="a" style="left:238.60px;top:792.75px;width:1px;height:24.25px;background:#404040"></div>
<div class="ln" style="top:818.40px">775</div>
<div class="code" style="left:85.00px;top:818.40px">        <span class="f">printf</span><span class="b3">(</span><span class="s">&quot;Cannot configure double tap trigger!!!\n&quot;</span><span class="b3">)</span>;</div>
<div class="a" style="left:85.00px;top:816.50px;width:1px;height:24.25px;background:#404040"></div>
<div class="a" style="left:123.40px;top:816.50px;width:1px;height:24.25px;background:#404040"></div>
<div class="ln" style="top:842.15px">776</div>
<div class="code" style="left:85.00px;top:842.15px">        <span class="c">return</span> <span class="n">0</span>;</div>
<div class="a" style="left:85.00px;top:840.25px;width:1px;height:24.25px;background:#404040"></div>
<div class="a" style="left:123.40px;top:840.25px;width:1px;height:24.25px;background:#404040"></div>
<div class="ln" style="top:865.90px">777</div>
<div class="code" style="left:85.00px;top:865.90px">    <span class="b2">}</span></div>
<div class="a" style="left:85.00px;top:864.00px;width:1px;height:24.25px;background:#404040"></div>
<svg class="a" style="left:488.20px;top:242.50px" width="163.2" height="4"><path d="M0 3.5 L3.70 0.5L7.40 3.5L11.10 0.5L14.80 3.5L18.50 0.5L22.20 3.5L25.90 0.5L29.60 3.5L33.30 0.5L37.00 3.5L40.70 0.5L44.40 3.5L48.10 0.5L51.80 3.5L55.50 0.5L59.20 3.5L62.90 0.5L66.60 3.5L70.30 0.5L74.00 3.5L77.70 0.5L81.40 3.5L85.10 0.5L88.80 3.5L92.50 0.5L96.20 3.5L99.90 0.5L103.60 3.5L107.30 0.5L111.00 3.5L114.70 0.5L118.40 3.5L122.10 0.5L125.80 3.5L129.50 0.5L133.20 3.5L136.90 0.5L140.60 3.5L144.30 0.5L148.00 3.5L151.70 0.5L155.40 3.5L159.10 0.5L162.80 3.5L166.50 0.5L170.20 3.5" stroke="#e0514a" stroke-width="1.3" fill="none"/></svg>
<div class="a" style="left:122.90px;top:461.25px;width:10.60px;height:21.75px;border:1px solid #6b6b6b"></div>
<div class="a" style="left:0;top:0;width:1275px;height:6px;background:linear-gradient(#000000aa,transparent)"></div>
</div>
<div class="a" style="left:1790px;top:115px;width:113px;height:878px;overflow:hidden;opacity:0.42">
<div class="a" style="left:0.00px;top:-1.17px;width:1.00px;height:1.3px;background:#ffd700"></div>
<div class="a" style="left:12.00px;top:0.82px;width:6.00px;height:1.3px;background:#569cd6"></div>
<div class="a" style="left:19.00px;top:0.82px;width:8.00px;height:1.3px;background:#dcdcaa"></div>
<div class="a" style="left:28.00px;top:0.82px;width:8.00px;height:1.3px;background:#ce9178"></div>
<div class="a" style="left:37.00px;top:0.82px;width:7.00px;height:1.3px;background:#569cd6"></div>
<div class="a" style="left:45.00px;top:0.82px;width:3.00px;height:1.3px;background:#dcdcaa"></div>
<div class="a" style="left:49.00px;top:0.82px;width:4.00px;height:1.3px;background:#dcdcaa"></div>
<div class="a" style="left:54.00px;top:0.82px;width:8.00px;height:1.3px;background:#ce9178"></div>
<div class="a" style="left:4.00px;top:2.80px;width:3.00px;height:1.3px;background:#569cd6"></div>
<div class="a" style="left:8.00px;top:2.80px;width:7.00px;height:1.3px;background:#ce9178"></div>
<div class="a" style="left:16.00px;top:2.80px;width:5.00px;height:1.3px;background:#cccccc"></div>
<div class="a" style="left:22.00px;top:2.80px;width:3.00px;height:1.3px;background:#c586c0"></div>
<div class="a" style="left:26.00px;top:2.80px;width:3.00px;height:1.3px;background:#dcdcaa"></div>
<div class="a" style="left:30.00px;top:2.80px;width:3.00px;height:1.3px;background:#dcdcaa"></div>
<div class="a" style="left:34.00px;top:2.80px;width:3.00px;height:1.3px;background:#9cdcfe"></div>
<div class="a" style="left:38.00px;top:2.80px;width:2.00px;height:1.3px;background:#569cd6"></div>
<div class="a" style="left:41.00px;top:2.80px;width:3.00px;height:1.3px;background:#ce9178"></div>
<div class="a" style="left:45.00px;top:2.80px;width:3.00px;height:1.3px;background:#9cdcfe"></div>
<div class="a" style="left:4.00px;top:4.79px;width:7.00px;height:1.3px;background:#ce9178"></div>
<div class="a" style="left:12.00px;top:4.79px;width:3.00px;height:1.3px;background:#ce9178"></div>
<div class="a" style="left:16.00px;top:4.79px;width:5.00px;height:1.3px;background:#cccccc"></div>
<div class="a" style="left:22.00px;top:4.79px;width:2.00px;height:1.3px;background:#4ec9b0"></div>
<div class="a" style="left:25.00px;top:4.79px;width:5.00px;height:1.3px;background:#9cdcfe"></div>
<div class="a" style="left:31.00px;top:4.79px;width:3.00px;height:1.3px;background:#cccccc"></div>
<div class="a" style="left:35.00px;top:4.79px;width:2.00px;height:1.3px;background:#4ec9b0"></div>
<div class="a" style="left:38.00px;top:4.79px;width:4.00px;height:1.3px;background:#569cd6"></div>
<div class="a" style="left:43.00px;top:4.79px;width:6.00px;height:1.3px;background:#4ec9b0"></div>
<div class="a" style="left:4.00px;top:8.76px;width:7.00px;height:1.3px;background:#4ec9b0"></div>
<div class="a" style="left:12.00px;top:8.76px;width:3.00px;height:1.3px;background:#dcdcaa"></div>
<div class="a" style="left:16.00px;top:8.76px;width:5.00px;height:1.3px;background:#9cdcfe"></div>
<div class="a" style="left:22.00px;top:8.76px;width:2.00px;height:1.3px;background:#cccccc"></div>
<div class="a" style="left:25.00px;top:8.76px;width:2.00px;height:1.3px;background:#4ec9b0"></div>
<div class="a" style="left:28.00px;top:8.76px;width:8.00px;height:1.3px;background:#c586c0"></div>
<div class="a" style="left:37.00px;top:8.76px;width:2.00px;height:1.3px;background:#9cdcfe"></div>
<div class="a" style="left:40.00px;top:8.76px;width:8.00px;height:1.3px;background:#c586c0"></div>
<div class="a" style="left:8.00px;top:10.75px;width:5.00px;height:1.3px;background:#569cd6"></div>
<div class="a" style="left:14.00px;top:10.75px;width:7.00px;height:1.3px;background:#9cdcfe"></div>
<div class="a" style="left:4.00px;top:12.73px;width:8.00px;height:1.3px;background:#ce9178"></div>
<div class="a" style="left:13.00px;top:12.73px;width:8.00px;height:1.3px;background:#dcdcaa"></div>
<div class="a" style="left:4.00px;top:14.71px;width:4.00px;height:1.3px;background:#dcdcaa"></div>
<div class="a" style="left:9.00px;top:14.71px;width:2.00px;height:1.3px;background:#4ec9b0"></div>
<div class="a" style="left:12.00px;top:14.71px;width:8.00px;height:1.3px;background:#cccccc"></div>
<div class="a" style="left:21.00px;top:14.71px;width:2.00px;height:1.3px;background:#c586c0"></div>
<div class="a" style="left:24.00px;top:14.71px;width:2.00px;height:1.3px;background:#ce9178"></div>
<div class="a" style="left:27.00px;top:14.71px;width:4.00px;height:1.3px;background:#9cdcfe"></div>
<div class="a" style="left:32.00px;top:14.71px;width:6.00px;height:1.3px;background:#4ec9b0"></div>
<div class="a" style="left:39.00px;top:14.71px;width:3.00px;height:1.3px;background:#4ec9b0"></div>
<div class="a" style="left:43.00px;top:14.71px;width:4.00px;height:1.3px;background:#9cdcfe"></div>
<div class="a" style="left:4.00px;top:18.68px;width:8.00px;height:1.3px;background:#dcdcaa"></div>
<div class="a" style="left:13.00px;top:18.68px;width:7.00px;height:1.3px;background:#9cdcfe"></div>
<div class="a" style="left:21.00px;top:18.68px;width:7.00px;height:1.3px;background:#cccccc"></div>
<div class="a" style="left:4.00px;top:20.67px;width:2.00px;height:1.3px;background:#dcdcaa"></div>
<div class="a" style="left:7.00px;top:20.67px;width:6.00px;height:1.3px;background:#9cdcfe"></div>
<div class="a" style="left:14.00px;top:20.67px;width:5.00px;height:1.3px;background:#569cd6"></div>
<div class="a" style="left:20.00px;top:20.67px;width:3.00px;height:1.3px;background:#4ec9b0"></div>
<div class="a" style="left:24.00px;top:20.67px;width:8.00px;height:1.3px;background:#cccccc"></div>
<div class="a" style="left:33.00px;top:20.67px;width:5.00px;height:1.3px;background:#c586c0"></div>
<div class="a" style="left:39.00px;top:20.67px;width:3.00px;height:1.3px;background:#569cd6"></div>
<div class="a" style="left:43.00px;top:20.67px;width:7.00px;height:1.3px;background:#569cd6"></div>
<div class="a" style="left:51.00px;top:20.67px;width:8.00px;height:1.3px;background:#dcdcaa"></div>
<div class="a" style="left:4.00px;top:22.65px;width:7.00px;height:1.3px;background:#9cdcfe"></div>
<div class="a" style="left:12.00px;top:22.65px;width:7.00px;height:1.3px;background:#c586c0"></div>
<div class="a" style="left:0.00px;top:24.64px;width:1.00px;height:1.3px;background:#ffd700"></div>
<div class="a" style="left:0.00px;top:28.61px;width:6.00px;height:1.3px;background:#569cd6"></div>
<div class="a" style="left:7.00px;top:28.61px;width:4.00px;height:1.3px;background:#569cd6"></div>
<div class="a" style="left:12.00px;top:28.61px;width:10.00px;height:1.3px;background:#dcdcaa"></div>
<div class="a" style="left:34.00px;top:28.61px;width:5.00px;height:1.3px;background:#569cd6"></div>
<div class="a" style="left:40.00px;top:28.61px;width:6.00px;height:1.3px;background:#569cd6"></div>
<div class="a" style="left:47.00px;top:28.61px;width:12.00px;height:1.3px;background:#4ec9b0"></div>
<div class="a" style="left:0.00px;top:30.59px;width:1.00px;height:1.3px;background:#ffd700"></div>
<div class="a" style="left:4.00px;top:32.58px;width:4.00px;height:1.3px;background:#9cdcfe"></div>
<div class="a" style="left:9.00px;top:32.58px;width:5.00px;height:1.3px;background:#9cdcfe"></div>
<div class="a" style="left:15.00px;top:32.58px;width:6.00px;height:1.3px;background:#dcdcaa"></div>
<div class="a" style="left:22.00px;top:32.58px;width:5.00px;height:1.3px;background:#4ec9b0"></div>
<div class="a" style="left:28.00px;top:32.58px;width:5.00px;height:1.3px;background:#cccccc"></div>
<div class="a" style="left:34.00px;top:32.58px;width:4.00px;height:1.3px;background:#dcdcaa"></div>
<div class="a" style="left:4.00px;top:34.56px;width:5.00px;height:1.3px;background:#9cdcfe"></div>
<div class="a" style="left:10.00px;top:34.56px;width:3.00px;height:1.3px;background:#dcdcaa"></div>
<div class="a" style="left:14.00px;top:34.56px;width:8.00px;height:1.3px;background:#4ec9b0"></div>
<div class="a" style="left:8.00px;top:36.55px;width:6.00px;height:1.3px;background:#9cdcfe"></div>
<div class="a" style="left:15.00px;top:36.55px;width:8.00px;height:1.3px;background:#9cdcfe"></div>
<div class="a" style="left:24.00px;top:36.55px;width:4.00px;height:1.3px;background:#dcdcaa"></div>
<div class="a" style="left:29.00px;top:36.55px;width:8.00px;height:1.3px;background:#4ec9b0"></div>
<div class="a" style="left:12.00px;top:38.53px;width:8.00px;height:1.3px;background:#cccccc"></div>
<div class="a" style="left:21.00px;top:38.53px;width:4.00px;height:1.3px;background:#9cdcfe"></div>
<div class="a" style="left:0.00px;top:40.52px;width:1.00px;height:1.3px;background:#ffd700"></div>
<div class="a" style="left:0.00px;top:44.49px;width:6.00px;height:1.3px;background:#569cd6"></div>
<div class="a" style="left:7.00px;top:44.49px;width:4.00px;height:1.3px;background:#569cd6"></div>
<div class="a" style="left:12.00px;top:44.49px;width:18.00px;height:1.3px;background:#dcdcaa"></div>
<div class="a" style="left:34.00px;top:44.49px;width:5.00px;height:1.3px;background:#569cd6"></div>
<div class="a" style="left:40.00px;top:44.49px;width:6.00px;height:1.3px;background:#569cd6"></div>
<div class="a" style="left:47.00px;top:44.49px;width:10.00px;height:1.3px;background:#4ec9b0"></div>
<div class="a" style="left:0.00px;top:46.47px;width:1.00px;height:1.3px;background:#ffd700"></div>
<div class="a" style="left:4.00px;top:48.46px;width:7.00px;height:1.3px;background:#cccccc"></div>
<div class="a" style="left:12.00px;top:48.46px;width:4.00px;height:1.3px;background:#9cdcfe"></div>
<div class="a" style="left:17.00px;top:48.46px;width:6.00px;height:1.3px;background:#569cd6"></div>
<div class="a" style="left:24.00px;top:48.46px;width:5.00px;height:1.3px;background:#9cdcfe"></div>
<div class="a" style="left:30.00px;top:48.46px;width:8.00px;height:1.3px;background:#cccccc"></div>
<div class="a" style="left:39.00px;top:48.46px;width:4.00px;height:1.3px;background:#cccccc"></div>
<div class="a" style="left:44.00px;top:48.46px;width:5.00px;height:1.3px;background:#cccccc"></div>
<div class="a" style="left:50.00px;top:48.46px;width:8.00px;height:1.3px;background:#9cdcfe"></div>
<div class="a" style="left:59.00px;top:48.46px;width:7.00px;height:1.3px;background:#4ec9b0"></div>
<div class="a" style="left:12.00px;top:50.44px;width:7.00px;height:1.3px;background:#c586c0"></div>
<div class="a" style="left:20.00px;top:50.44px;width:4.00px;height:1.3px;background:#9cdcfe"></div>
<div class="a" style="left:25.00px;top:50.44px;width:8.00px;height:1.3px;background:#dcdcaa"></div>
<div class="a" style="left:34.00px;top:50.44px;width:4.00px;height:1.3px;background:#4ec9b0"></div>
<div class="a" style="left:39.00px;top:50.44px;width:6.00px;height:1.3px;background:#9cdcfe"></div>
<div class="a" style="left:4.00px;top:52.43px;width:8.00px;height:1.3px;background:#4ec9b0"></div>
<div class="a" style="left:13.00px;top:52.43px;width:8.00px;height:1.3px;background:#dcdcaa"></div>
<div class="a" style="left:22.00px;top:52.43px;width:4.00px;height:1.3px;background:#dcdcaa"></div>
<div class="a" style="left:12.00px;top:54.41px;width:3.00px;height:1.3px;background:#9cdcfe"></div>
<div class="a" style="left:16.00px;top:54.41px;width:7.00px;height:1.3px;background:#c586c0"></div>
<div class="a" style="left:24.00px;top:54.41px;width:4.00px;height:1.3px;background:#9cdcfe"></div>
<div class="a" style="left:29.00px;top:54.41px;width:8.00px;height:1.3px;background:#cccccc"></div>
<div class="a" style="left:38.00px;top:54.41px;width:7.00px;height:1.3px;background:#569cd6"></div>
<div class="a" style="left:8.00px;top:56.40px;width:6.00px;height:1.3px;background:#9cdcfe"></div>
<div class="a" style="left:15.00px;top:56.40px;width:3.00px;height:1.3px;background:#9cdcfe"></div>
<div class="a" style="left:19.00px;top:56.40px;width:7.00px;height:1.3px;background:#569cd6"></div>
<div class="a" style="left:27.00px;top:56.40px;width:5.00px;height:1.3px;background:#ce9178"></div>
<div class="a" style="left:33.00px;top:56.40px;width:3.00px;height:1.3px;background:#569cd6"></div>
<div class="a" style="left:37.00px;top:56.40px;width:3.00px;height:1.3px;background:#dcdcaa"></div>
<div class="a" style="left:41.00px;top:56.40px;width:4.00px;height:1.3px;background:#9cdcfe"></div>
<div class="a" style="left:8.00px;top:58.38px;width:5.00px;height:1.3px;background:#dcdcaa"></div>
<div class="a" style="left:14.00px;top:58.38px;width:4.00px;height:1.3px;background:#c586c0"></div>
<div class="a" style="left:4.00px;top:60.37px;width:3.00px;height:1.3px;background:#ce9178"></div>
<div class="a" style="left:8.00px;top:60.37px;width:7.00px;height:1.3px;background:#4ec9b0"></div>
<div class="a" style="left:16.00px;top:60.37px;width:2.00px;height:1.3px;background:#4ec9b0"></div>
<div class="a" style="left:19.00px;top:60.37px;width:5.00px;height:1.3px;background:#cccccc"></div>
<div class="a" style="left:25.00px;top:60.37px;width:8.00px;height:1.3px;background:#c586c0"></div>
<div class="a" style="left:34.00px;top:60.37px;width:8.00px;height:1.3px;background:#dcdcaa"></div>
<div class="a" style="left:43.00px;top:60.37px;width:7.00px;height:1.3px;background:#9cdcfe"></div>
<div class="a" style="left:4.00px;top:62.36px;width:6.00px;height:1.3px;background:#cccccc"></div>
<div class="a" style="left:11.00px;top:62.36px;width:2.00px;height:1.3px;background:#cccccc"></div>
<div class="a" style="left:14.00px;top:62.36px;width:6.00px;height:1.3px;background:#9cdcfe"></div>
<div class="a" style="left:21.00px;top:62.36px;width:4.00px;height:1.3px;background:#cccccc"></div>
<div class="a" style="left:26.00px;top:62.36px;width:4.00px;height:1.3px;background:#9cdcfe"></div>
<div class="a" style="left:31.00px;top:62.36px;width:5.00px;height:1.3px;background:#c586c0"></div>
<div class="a" style="left:37.00px;top:62.36px;width:8.00px;height:1.3px;background:#9cdcfe"></div>
<div class="a" style="left:46.00px;top:62.36px;width:4.00px;height:1.3px;background:#dcdcaa"></div>
<div class="a" style="left:8.00px;top:66.32px;width:3.00px;height:1.3px;background:#9cdcfe"></div>
<div class="a" style="left:12.00px;top:66.32px;width:6.00px;height:1.3px;background:#dcdcaa"></div>
<div class="a" style="left:19.00px;top:66.32px;width:4.00px;height:1.3px;background:#569cd6"></div>
<div class="a" style="left:24.00px;top:66.32px;width:5.00px;height:1.3px;background:#dcdcaa"></div>
<div class="a" style="left:30.00px;top:66.32px;width:4.00px;height:1.3px;background:#9cdcfe"></div>
<div class="a" style="left:35.00px;top:66.32px;width:3.00px;height:1.3px;background:#4ec9b0"></div>
<div class="a" style="left:39.00px;top:66.32px;width:7.00px;height:1.3px;background:#c586c0"></div>
<div class="a" style="left:4.00px;top:68.31px;width:4.00px;height:1.3px;background:#dcdcaa"></div>
<div class="a" style="left:9.00px;top:68.31px;width:7.00px;height:1.3px;background:#c586c0"></div>
<div class="a" style="left:17.00px;top:68.31px;width:5.00px;height:1.3px;background:#9cdcfe"></div>
<div class="a" style="left:23.00px;top:68.31px;width:6.00px;height:1.3px;background:#cccccc"></div>
<div class="a" style="left:30.00px;top:68.31px;width:7.00px;height:1.3px;background:#cccccc"></div>
<div class="a" style="left:38.00px;top:68.31px;width:5.00px;height:1.3px;background:#cccccc"></div>
<div class="a" style="left:4.00px;top:70.29px;width:5.00px;height:1.3px;background:#cccccc"></div>
<div class="a" style="left:10.00px;top:70.29px;width:3.00px;height:1.3px;background:#dcdcaa"></div>
<div class="a" style="left:14.00px;top:70.29px;width:2.00px;height:1.3px;background:#dcdcaa"></div>
<div class="a" style="left:17.00px;top:70.29px;width:7.00px;height:1.3px;background:#dcdcaa"></div>
<div class="a" style="left:25.00px;top:70.29px;width:3.00px;height:1.3px;background:#cccccc"></div>
<div class="a" style="left:29.00px;top:70.29px;width:2.00px;height:1.3px;background:#9cdcfe"></div>
<div class="a" style="left:4.00px;top:72.28px;width:6.00px;height:1.3px;background:#9cdcfe"></div>
<div class="a" style="left:11.00px;top:72.28px;width:4.00px;height:1.3px;background:#ce9178"></div>
<div class="a" style="left:16.00px;top:72.28px;width:5.00px;height:1.3px;background:#569cd6"></div>
<div class="a" style="left:22.00px;top:72.28px;width:3.00px;height:1.3px;background:#dcdcaa"></div>
<div class="a" style="left:26.00px;top:72.28px;width:4.00px;height:1.3px;background:#9cdcfe"></div>
<div class="a" style="left:31.00px;top:72.28px;width:7.00px;height:1.3px;background:#cccccc"></div>
<div class="a" style="left:39.00px;top:72.28px;width:4.00px;height:1.3px;background:#dcdcaa"></div>
<div class="a" style="left:8.00px;top:74.26px;width:7.00px;height:1.3px;background:#dcdcaa"></div>
<div class="a" style="left:16.00px;top:74.26px;width:2.00px;height:1.3px;background:#9cdcfe"></div>
<div class="a" style="left:19.00px;top:74.26px;width:4.00px;height:1.3px;background:#cccccc"></div>
<div class="a" style="left:24.00px;top:74.26px;width:6.00px;height:1.3px;background:#4ec9b0"></div>
<div class="a" style="left:31.00px;top:74.26px;width:6.00px;height:1.3px;background:#cccccc"></div>
<div class="a" style="left:38.00px;top:74.26px;width:7.00px;height:1.3px;background:#9cdcfe"></div>
<div class="a" style="left:46.00px;top:74.26px;width:2.00px;height:1.3px;background:#dcdcaa"></div>
<div class="a" style="left:0.00px;top:76.25px;width:1.00px;height:1.3px;background:#ffd700"></div>
<div class="a" style="left:0.00px;top:80.22px;width:6.00px;height:1.3px;background:#569cd6"></div>
<div class="a" style="left:7.00px;top:80.22px;width:4.00px;height:1.3px;background:#569cd6"></div>
<div class="a" style="left:12.00px;top:80.22px;width:13.00px;height:1.3px;background:#dcdcaa"></div>
<div class="a" style="left:34.00px;top:80.22px;width:5.00px;height:1.3px;background:#569cd6"></div>
<div class="a" style="left:40.00px;top:80.22px;width:6.00px;height:1.3px;background:#569cd6"></div>
<div class="a" style="left:47.00px;top:80.22px;width:8.00px;height:1.3px;background:#4ec9b0"></div>
<div class="a" style="left:0.00px;top:82.20px;width:1.00px;height:1.3px;background:#ffd700"></div>
<div class="a" style="left:8.00px;top:86.17px;width:2.00px;height:1.3px;background:#9cdcfe"></div>
<div class="a" style="left:11.00px;top:86.17px;width:3.00px;height:1.3px;background:#569cd6"></div>
<div class="a" style="left:15.00px;top:86.17px;width:5.00px;height:1.3px;background:#c586c0"></div>
<div class="a" style="left:21.00px;top:86.17px;width:6.00px;height:1.3px;background:#dcdcaa"></div>
<div class="a" style="left:28.00px;top:86.17px;width:8.00px;height:1.3px;background:#c586c0"></div>
<div class="a" style="left:37.00px;top:86.17px;width:5.00px;height:1.3px;background:#c586c0"></div>
<div class="a" style="left:43.00px;top:86.17px;width:7.00px;height:1.3px;background:#ce9178"></div>
<div class="a" style="left:51.00px;top:86.17px;width:4.00px;height:1.3px;background:#dcdcaa"></div>
<div class="a" style="left:56.00px;top:86.17px;width:8.00px;height:1.3px;background:#dcdcaa"></div>
<div class="a" style="left:4.00px;top:88.16px;width:8.00px;height:1.3px;background:#c586c0"></div>
<div class="a" style="left:13.00px;top:88.16px;width:6.00px;height:1.3px;background:#cccccc"></div>
<div class="a" style="left:20.00px;top:88.16px;width:7.00px;height:1.3px;background:#dcdcaa"></div>
<div class="a" style="left:28.00px;top:88.16px;width:4.00px;height:1.3px;background:#9cdcfe"></div>
<div class="a" style="left:33.00px;top:88.16px;width:3.00px;height:1.3px;background:#dcdcaa"></div>
<div class="a" style="left:37.00px;top:88.16px;width:7.00px;height:1.3px;background:#9cdcfe"></div>
<div class="a" style="left:45.00px;top:88.16px;width:5.00px;height:1.3px;background:#4ec9b0"></div>
<div class="a" style="left:51.00px;top:88.16px;width:6.00px;height:1.3px;background:#9cdcfe"></div>
<div class="a" style="left:8.00px;top:90.14px;width:2.00px;height:1.3px;background:#dcdcaa"></div>
<div class="a" style="left:11.00px;top:90.14px;width:7.00px;height:1.3px;background:#ce9178"></div>
<div class="a" style="left:19.00px;top:90.14px;width:4.00px;height:1.3px;background:#dcdcaa"></div>
<div class="a" style="left:24.00px;top:90.14px;width:8.00px;height:1.3px;background:#dcdcaa"></div>
<div class="a" style="left:33.00px;top:90.14px;width:7.00px;height:1.3px;background:#569cd6"></div>
<div class="a" style="left:41.00px;top:90.14px;width:4.00px;height:1.3px;background:#c586c0"></div>
<div class="a" style="left:46.00px;top:90.14px;width:2.00px;height:1.3px;background:#c586c0"></div>
<div class="a" style="left:49.00px;top:90.14px;width:7.00px;height:1.3px;background:#dcdcaa"></div>
<div class="a" style="left:57.00px;top:90.14px;width:2.00px;height:1.3px;background:#dcdcaa"></div>
<div class="a" style="left:60.00px;top:90.14px;width:8.00px;height:1.3px;background:#dcdcaa"></div>
<div class="a" style="left:12.00px;top:92.13px;width:2.00px;height:1.3px;background:#9cdcfe"></div>
<div class="a" style="left:15.00px;top:92.13px;width:4.00px;height:1.3px;background:#dcdcaa"></div>
<div class="a" style="left:20.00px;top:92.13px;width:3.00px;height:1.3px;background:#9cdcfe"></div>
<div class="a" style="left:24.00px;top:92.13px;width:6.00px;height:1.3px;background:#9cdcfe"></div>
<div class="a" style="left:31.00px;top:92.13px;width:5.00px;height:1.3px;background:#9cdcfe"></div>
<div class="a" style="left:37.00px;top:92.13px;width:2.00px;height:1.3px;background:#ce9178"></div>
<div class="a" style="left:40.00px;top:92.13px;width:2.00px;height:1.3px;background:#9cdcfe"></div>
<div class="a" style="left:43.00px;top:92.13px;width:2.00px;height:1.3px;background:#c586c0"></div>
<div class="a" style="left:46.00px;top:92.13px;width:7.00px;height:1.3px;background:#dcdcaa"></div>
<div class="a" style="left:54.00px;top:92.13px;width:4.00px;height:1.3px;background:#569cd6"></div>
<div class="a" style="left:59.00px;top:92.13px;width:6.00px;height:1.3px;background:#dcdcaa"></div>
<div class="a" style="left:66.00px;top:92.13px;width:7.00px;height:1.3px;background:#c586c0"></div>
<div class="a" style="left:4.00px;top:94.12px;width:5.00px;height:1.3px;background:#dcdcaa"></div>
<div class="a" style="left:10.00px;top:94.12px;width:4.00px;height:1.3px;background:#dcdcaa"></div>
<div class="a" style="left:12.00px;top:96.10px;width:2.00px;height:1.3px;background:#9cdcfe"></div>
<div class="a" style="left:15.00px;top:96.10px;width:7.00px;height:1.3px;background:#cccccc"></div>
<div class="a" style="left:23.00px;top:96.10px;width:3.00px;height:1.3px;background:#9cdcfe"></div>
<div class="a" style="left:27.00px;top:96.10px;width:4.00px;height:1.3px;background:#9cdcfe"></div>
<div class="a" style="left:32.00px;top:96.10px;width:6.00px;height:1.3px;background:#ce9178"></div>
<div class="a" style="left:39.00px;top:96.10px;width:4.00px;height:1.3px;background:#dcdcaa"></div>
<div class="a" style="left:4.00px;top:98.08px;width:4.00px;height:1.3px;background:#9cdcfe"></div>
<div class="a" style="left:9.00px;top:98.08px;width:3.00px;height:1.3px;background:#ce9178"></div>
<div class="a" style="left:13.00px;top:98.08px;width:8.00px;height:1.3px;background:#4ec9b0"></div>
<div class="a" style="left:22.00px;top:98.08px;width:5.00px;height:1.3px;background:#c586c0"></div>
<div class="a" style="left:28.00px;top:98.08px;width:3.00px;height:1.3px;background:#9cdcfe"></div>
<div class="a" style="left:32.00px;top:98.08px;width:7.00px;height:1.3px;background:#569cd6"></div>
<div class="a" style="left:40.00px;top:98.08px;width:7.00px;height:1.3px;background:#4ec9b0"></div>
<div class="a" style="left:48.00px;top:98.08px;width:2.00px;height:1.3px;background:#569cd6"></div>
<div class="a" style="left:51.00px;top:98.08px;width:2.00px;height:1.3px;background:#dcdcaa"></div>
<div class="a" style="left:54.00px;top:98.08px;width:6.00px;height:1.3px;background:#dcdcaa"></div>
<div class="a" style="left:0.00px;top:100.07px;width:1.00px;height:1.3px;background:#ffd700"></div>
<div class="a" style="left:0.00px;top:104.04px;width:6.00px;height:1.3px;background:#569cd6"></div>
<div class="a" style="left:7.00px;top:104.04px;width:4.00px;height:1.3px;background:#569cd6"></div>
<div class="a" style="left:12.00px;top:104.04px;width:14.00px;height:1.3px;background:#dcdcaa"></div>
<div class="a" style="left:34.00px;top:104.04px;width:5.00px;height:1.3px;background:#569cd6"></div>
<div class="a" style="left:40.00px;top:104.04px;width:6.00px;height:1.3px;background:#569cd6"></div>
<div class="a" style="left:47.00px;top:104.04px;width:13.00px;height:1.3px;background:#4ec9b0"></div>
<div class="a" style="left:0.00px;top:106.02px;width:1.00px;height:1.3px;background:#ffd700"></div>
<div class="a" style="left:4.00px;top:108.01px;width:8.00px;height:1.3px;background:#9cdcfe"></div>
<div class="a" style="left:13.00px;top:108.01px;width:2.00px;height:1.3px;background:#9cdcfe"></div>
<div class="a" style="left:16.00px;top:108.01px;width:7.00px;height:1.3px;background:#c586c0"></div>
<div class="a" style="left:8.00px;top:111.98px;width:8.00px;height:1.3px;background:#ce9178"></div>
<div class="a" style="left:17.00px;top:111.98px;width:7.00px;height:1.3px;background:#dcdcaa"></div>
<div class="a" style="left:25.00px;top:111.98px;width:2.00px;height:1.3px;background:#dcdcaa"></div>
<div class="a" style="left:28.00px;top:111.98px;width:8.00px;height:1.3px;background:#ce9178"></div>
<div class="a" style="left:37.00px;top:111.98px;width:3.00px;height:1.3px;background:#c586c0"></div>
<div class="a" style="left:41.00px;top:111.98px;width:4.00px;height:1.3px;background:#ce9178"></div>
<div class="a" style="left:46.00px;top:111.98px;width:4.00px;height:1.3px;background:#4ec9b0"></div>
<div class="a" style="left:51.00px;top:111.98px;width:6.00px;height:1.3px;background:#4ec9b0"></div>
<div class="a" style="left:58.00px;top:111.98px;width:8.00px;height:1.3px;background:#c586c0"></div>
<div class="a" style="left:12.00px;top:113.96px;width:7.00px;height:1.3px;background:#cccccc"></div>
<div class="a" style="left:20.00px;top:113.96px;width:8.00px;height:1.3px;background:#c586c0"></div>
<div class="a" style="left:29.00px;top:113.96px;width:8.00px;height:1.3px;background:#4ec9b0"></div>
<div class="a" style="left:38.00px;top:113.96px;width:6.00px;height:1.3px;background:#569cd6"></div>
<div class="a" style="left:8.00px;top:115.95px;width:7.00px;height:1.3px;background:#9cdcfe"></div>
<div class="a" style="left:16.00px;top:115.95px;width:5.00px;height:1.3px;background:#dcdcaa"></div>
<div class="a" style="left:22.00px;top:115.95px;width:2.00px;height:1.3px;background:#569cd6"></div>
<div class="a" style="left:25.00px;top:115.95px;width:2.00px;height:1.3px;background:#9cdcfe"></div>
<div class="a" style="left:28.00px;top:115.95px;width:3.00px;height:1.3px;background:#ce9178"></div>
<div class="a" style="left:0.00px;top:119.92px;width:1.00px;height:1.3px;background:#ffd700"></div>
<div class="a" style="left:0.00px;top:123.89px;width:6.00px;height:1.3px;background:#569cd6"></div>
<div class="a" style="left:7.00px;top:123.89px;width:4.00px;height:1.3px;background:#569cd6"></div>
<div class="a" style="left:12.00px;top:123.89px;width:18.00px;height:1.3px;background:#dcdcaa"></div>
<div class="a" style="left:34.00px;top:123.89px;width:5.00px;height:1.3px;background:#569cd6"></div>
<div class="a" style="left:40.00px;top:123.89px;width:6.00px;height:1.3px;background:#569cd6"></div>
<div class="a" style="left:47.00px;top:123.89px;width:11.00px;height:1.3px;background:#4ec9b0"></div>
<div class="a" style="left:0.00px;top:125.88px;width:1.00px;height:1.3px;background:#ffd700"></div>
<div class="a" style="left:8.00px;top:129.84px;width:4.00px;height:1.3px;background:#dcdcaa"></div>
<div class="a" style="left:13.00px;top:129.84px;width:5.00px;height:1.3px;background:#dcdcaa"></div>
<div class="a" style="left:19.00px;top:129.84px;width:3.00px;height:1.3px;background:#9cdcfe"></div>
<div class="a" style="left:23.00px;top:129.84px;width:7.00px;height:1.3px;background:#9cdcfe"></div>
<div class="a" style="left:31.00px;top:129.84px;width:2.00px;height:1.3px;background:#4ec9b0"></div>
<div class="a" style="left:34.00px;top:129.84px;width:8.00px;height:1.3px;background:#c586c0"></div>
<div class="a" style="left:8.00px;top:131.83px;width:6.00px;height:1.3px;background:#cccccc"></div>
<div class="a" style="left:15.00px;top:131.83px;width:2.00px;height:1.3px;background:#cccccc"></div>
<div class="a" style="left:18.00px;top:131.83px;width:8.00px;height:1.3px;background:#9cdcfe"></div>
<div class="a" style="left:12.00px;top:133.81px;width:2.00px;height:1.3px;background:#dcdcaa"></div>
<div class="a" style="left:15.00px;top:133.81px;width:2.00px;height:1.3px;background:#4ec9b0"></div>
<div class="a" style="left:18.00px;top:133.81px;width:8.00px;height:1.3px;background:#4ec9b0"></div>
<div class="a" style="left:27.00px;top:133.81px;width:4.00px;height:1.3px;background:#569cd6"></div>
<div class="a" style="left:32.00px;top:133.81px;width:7.00px;height:1.3px;background:#569cd6"></div>
<div class="a" style="left:8.00px;top:135.80px;width:2.00px;height:1.3px;background:#4ec9b0"></div>
<div class="a" style="left:11.00px;top:135.80px;width:4.00px;height:1.3px;background:#dcdcaa"></div>
<div class="a" style="left:16.00px;top:135.80px;width:7.00px;height:1.3px;background:#ce9178"></div>
<div class="a" style="left:24.00px;top:135.80px;width:7.00px;height:1.3px;background:#9cdcfe"></div>
<div class="a" style="left:8.00px;top:139.77px;width:7.00px;height:1.3px;background:#dcdcaa"></div>
<div class="a" style="left:16.00px;top:139.77px;width:6.00px;height:1.3px;background:#c586c0"></div>
<div class="a" style="left:23.00px;top:139.77px;width:7.00px;height:1.3px;background:#4ec9b0"></div>
<div class="a" style="left:4.00px;top:141.75px;width:4.00px;height:1.3px;background:#cccccc"></div>
<div class="a" style="left:9.00px;top:141.75px;width:2.00px;height:1.3px;background:#dcdcaa"></div>
<div class="a" style="left:12.00px;top:141.75px;width:3.00px;height:1.3px;background:#ce9178"></div>
<div class="a" style="left:16.00px;top:141.75px;width:3.00px;height:1.3px;background:#ce9178"></div>
<div class="a" style="left:20.00px;top:141.75px;width:2.00px;height:1.3px;background:#c586c0"></div>
<div class="a" style="left:23.00px;top:141.75px;width:7.00px;height:1.3px;background:#cccccc"></div>
<div class="a" style="left:31.00px;top:141.75px;width:2.00px;height:1.3px;background:#dcdcaa"></div>
<div class="a" style="left:34.00px;top:141.75px;width:2.00px;height:1.3px;background:#dcdcaa"></div>
<div class="a" style="left:37.00px;top:141.75px;width:8.00px;height:1.3px;background:#c586c0"></div>
<div class="a" style="left:4.00px;top:143.74px;width:8.00px;height:1.3px;background:#9cdcfe"></div>
<div class="a" style="left:13.00px;top:143.74px;width:6.00px;height:1.3px;background:#4ec9b0"></div>
<div class="a" style="left:20.00px;top:143.74px;width:2.00px;height:1.3px;background:#dcdcaa"></div>
<div class="a" style="left:23.00px;top:143.74px;width:3.00px;height:1.3px;background:#dcdcaa"></div>
<div class="a" style="left:27.00px;top:143.74px;width:2.00px;height:1.3px;background:#dcdcaa"></div>
<div class="a" style="left:30.00px;top:143.74px;width:2.00px;height:1.3px;background:#ce9178"></div>
<div class="a" style="left:33.00px;top:143.74px;width:7.00px;height:1.3px;background:#569cd6"></div>
<div class="a" style="left:41.00px;top:143.74px;width:5.00px;height:1.3px;background:#c586c0"></div>
<div class="a" style="left:4.00px;top:145.73px;width:8.00px;height:1.3px;background:#c586c0"></div>
<div class="a" style="left:13.00px;top:145.73px;width:5.00px;height:1.3px;background:#cccccc"></div>
<div class="a" style="left:19.00px;top:145.73px;width:7.00px;height:1.3px;background:#569cd6"></div>
<div class="a" style="left:27.00px;top:145.73px;width:2.00px;height:1.3px;background:#ce9178"></div>
<div class="a" style="left:0.00px;top:147.71px;width:1.00px;height:1.3px;background:#ffd700"></div>
<div class="a" style="left:0.00px;top:151.68px;width:6.00px;height:1.3px;background:#569cd6"></div>
<div class="a" style="left:7.00px;top:151.68px;width:4.00px;height:1.3px;background:#569cd6"></div>
<div class="a" style="left:12.00px;top:151.68px;width:19.00px;height:1.3px;background:#dcdcaa"></div>
<div class="a" style="left:34.00px;top:151.68px;width:5.00px;height:1.3px;background:#569cd6"></div>
<div class="a" style="left:40.00px;top:151.68px;width:6.00px;height:1.3px;background:#569cd6"></div>
<div class="a" style="left:47.00px;top:151.68px;width:14.00px;height:1.3px;background:#4ec9b0"></div>
<div class="a" style="left:0.00px;top:153.66px;width:1.00px;height:1.3px;background:#ffd700"></div>
<div class="a" style="left:4.00px;top:155.65px;width:3.00px;height:1.3px;background:#dcdcaa"></div>
<div class="a" style="left:8.00px;top:155.65px;width:4.00px;height:1.3px;background:#dcdcaa"></div>
<div class="a" style="left:13.00px;top:155.65px;width:2.00px;height:1.3px;background:#9cdcfe"></div>
<div class="a" style="left:16.00px;top:155.65px;width:3.00px;height:1.3px;background:#dcdcaa"></div>
<div class="a" style="left:20.00px;top:155.65px;width:8.00px;height:1.3px;background:#ce9178"></div>
<div class="a" style="left:29.00px;top:155.65px;width:6.00px;height:1.3px;background:#569cd6"></div>
<div class="a" style="left:36.00px;top:155.65px;width:5.00px;height:1.3px;background:#9cdcfe"></div>
<div class="a" style="left:42.00px;top:155.65px;width:4.00px;height:1.3px;background:#dcdcaa"></div>
<div class="a" style="left:8.00px;top:157.63px;width:7.00px;height:1.3px;background:#9cdcfe"></div>
<div class="a" style="left:16.00px;top:157.63px;width:7.00px;height:1.3px;background:#569cd6"></div>
<div class="a" style="left:24.00px;top:157.63px;width:8.00px;height:1.3px;background:#cccccc"></div>
<div class="a" style="left:33.00px;top:157.63px;width:7.00px;height:1.3px;background:#dcdcaa"></div>
<div class="a" style="left:41.00px;top:157.63px;width:8.00px;height:1.3px;background:#ce9178"></div>
<div class="a" style="left:4.00px;top:159.62px;width:5.00px;height:1.3px;background:#dcdcaa"></div>
<div class="a" style="left:10.00px;top:159.62px;width:8.00px;height:1.3px;background:#cccccc"></div>
<div class="a" style="left:19.00px;top:159.62px;width:8.00px;height:1.3px;background:#c586c0"></div>
<div class="a" style="left:28.00px;top:159.62px;width:4.00px;height:1.3px;background:#9cdcfe"></div>
<div class="a" style="left:0.00px;top:165.57px;width:1.00px;height:1.3px;background:#ffd700"></div>
<div class="a" style="left:0.00px;top:169.54px;width:6.00px;height:1.3px;background:#569cd6"></div>
<div class="a" style="left:7.00px;top:169.54px;width:4.00px;height:1.3px;background:#569cd6"></div>
<div class="a" style="left:12.00px;top:169.54px;width:19.00px;height:1.3px;background:#dcdcaa"></div>
<div class="a" style="left:34.00px;top:169.54px;width:5.00px;height:1.3px;background:#569cd6"></div>
<div class="a" style="left:40.00px;top:169.54px;width:6.00px;height:1.3px;background:#569cd6"></div>
<div class="a" style="left:47.00px;top:169.54px;width:7.00px;height:1.3px;background:#4ec9b0"></div>
<div class="a" style="left:0.00px;top:171.53px;width:1.00px;height:1.3px;background:#ffd700"></div>
<div class="a" style="left:8.00px;top:173.51px;width:3.00px;height:1.3px;background:#cccccc"></div>
<div class="a" style="left:12.00px;top:173.51px;width:2.00px;height:1.3px;background:#dcdcaa"></div>
<div class="a" style="left:15.00px;top:173.51px;width:7.00px;height:1.3px;background:#ce9178"></div>
<div class="a" style="left:23.00px;top:173.51px;width:2.00px;height:1.3px;background:#ce9178"></div>
<div class="a" style="left:26.00px;top:173.51px;width:8.00px;height:1.3px;background:#cccccc"></div>
<div class="a" style="left:35.00px;top:173.51px;width:4.00px;height:1.3px;background:#dcdcaa"></div>
<div class="a" style="left:40.00px;top:173.51px;width:2.00px;height:1.3px;background:#c586c0"></div>
<div class="a" style="left:43.00px;top:173.51px;width:8.00px;height:1.3px;background:#4ec9b0"></div>
<div class="a" style="left:52.00px;top:173.51px;width:5.00px;height:1.3px;background:#9cdcfe"></div>
<div class="a" style="left:4.00px;top:177.49px;width:2.00px;height:1.3px;background:#dcdcaa"></div>
<div class="a" style="left:7.00px;top:177.49px;width:3.00px;height:1.3px;background:#569cd6"></div>
<div class="a" style="left:11.00px;top:177.49px;width:7.00px;height:1.3px;background:#569cd6"></div>
<div class="a" style="left:19.00px;top:177.49px;width:7.00px;height:1.3px;background:#c586c0"></div>
<div class="a" style="left:27.00px;top:177.49px;width:4.00px;height:1.3px;background:#dcdcaa"></div>
<div class="a" style="left:32.00px;top:177.49px;width:8.00px;height:1.3px;background:#c586c0"></div>
<div class="a" style="left:41.00px;top:177.49px;width:6.00px;height:1.3px;background:#9cdcfe"></div>
<div class="a" style="left:4.00px;top:179.47px;width:3.00px;height:1.3px;background:#cccccc"></div>
<div class="a" style="left:8.00px;top:179.47px;width:5.00px;height:1.3px;background:#4ec9b0"></div>
<div class="a" style="left:14.00px;top:179.47px;width:4.00px;height:1.3px;background:#569cd6"></div>
<div class="a" style="left:19.00px;top:179.47px;width:2.00px;height:1.3px;background:#9cdcfe"></div>
<div class="a" style="left:8.00px;top:181.45px;width:2.00px;height:1.3px;background:#dcdcaa"></div>
<div class="a" style="left:11.00px;top:181.45px;width:2.00px;height:1.3px;background:#9cdcfe"></div>
<div class="a" style="left:14.00px;top:181.45px;width:8.00px;height:1.3px;background:#4ec9b0"></div>
<div class="a" style="left:4.00px;top:183.44px;width:2.00px;height:1.3px;background:#ce9178"></div>
<div class="a" style="left:7.00px;top:183.44px;width:6.00px;height:1.3px;background:#c586c0"></div>
<div class="a" style="left:14.00px;top:183.44px;width:3.00px;height:1.3px;background:#4ec9b0"></div>
<div class="a" style="left:18.00px;top:183.44px;width:3.00px;height:1.3px;background:#4ec9b0"></div>
<div class="a" style="left:22.00px;top:183.44px;width:4.00px;height:1.3px;background:#569cd6"></div>
<div class="a" style="left:27.00px;top:183.44px;width:3.00px;height:1.3px;background:#9cdcfe"></div>
<div class="a" style="left:31.00px;top:183.44px;width:7.00px;height:1.3px;background:#dcdcaa"></div>
<div class="a" style="left:39.00px;top:183.44px;width:4.00px;height:1.3px;background:#9cdcfe"></div>
<div class="a" style="left:44.00px;top:183.44px;width:6.00px;height:1.3px;background:#9cdcfe"></div>
<div class="a" style="left:0.00px;top:185.42px;width:1.00px;height:1.3px;background:#ffd700"></div>
<div class="a" style="left:0.00px;top:189.39px;width:6.00px;height:1.3px;background:#569cd6"></div>
<div class="a" style="left:7.00px;top:189.39px;width:4.00px;height:1.3px;background:#569cd6"></div>
<div class="a" style="left:12.00px;top:189.39px;width:19.00px;height:1.3px;background:#dcdcaa"></div>
<div class="a" style="left:34.00px;top:189.39px;width:5.00px;height:1.3px;background:#569cd6"></div>
<div class="a" style="left:40.00px;top:189.39px;width:6.00px;height:1.3px;background:#569cd6"></div>
<div class="a" style="left:47.00px;top:189.39px;width:8.00px;height:1.3px;background:#4ec9b0"></div>
<div class="a" style="left:0.00px;top:191.38px;width:1.00px;height:1.3px;background:#ffd700"></div>
<div class="a" style="left:8.00px;top:193.37px;width:5.00px;height:1.3px;background:#dcdcaa"></div>
<div class="a" style="left:14.00px;top:193.37px;width:4.00px;height:1.3px;background:#4ec9b0"></div>
<div class="a" style="left:19.00px;top:193.37px;width:5.00px;height:1.3px;background:#ce9178"></div>
<div class="a" style="left:25.00px;top:193.37px;width:5.00px;height:1.3px;background:#c586c0"></div>
<div class="a" style="left:31.00px;top:193.37px;width:3.00px;height:1.3px;background:#dcdcaa"></div>
<div class="a" style="left:35.00px;top:193.37px;width:2.00px;height:1.3px;background:#9cdcfe"></div>
<div class="a" style="left:38.00px;top:193.37px;width:6.00px;height:1.3px;background:#dcdcaa"></div>
<div class="a" style="left:45.00px;top:193.37px;width:5.00px;height:1.3px;background:#569cd6"></div>
<div class="a" style="left:51.00px;top:193.37px;width:2.00px;height:1.3px;background:#9cdcfe"></div>
<div class="a" style="left:54.00px;top:193.37px;width:8.00px;height:1.3px;background:#c586c0"></div>
<div class="a" style="left:63.00px;top:193.37px;width:7.00px;height:1.3px;background:#569cd6"></div>
<div class="a" style="left:4.00px;top:195.35px;width:6.00px;height:1.3px;background:#ce9178"></div>
<div class="a" style="left:11.00px;top:195.35px;width:5.00px;height:1.3px;background:#4ec9b0"></div>
<div class="a" style="left:4.00px;top:197.33px;width:4.00px;height:1.3px;background:#ce9178"></div>
<div class="a" style="left:9.00px;top:197.33px;width:4.00px;height:1.3px;background:#9cdcfe"></div>
<div class="a" style="left:14.00px;top:197.33px;width:6.00px;height:1.3px;background:#4ec9b0"></div>
<div class="a" style="left:21.00px;top:197.33px;width:8.00px;height:1.3px;background:#ce9178"></div>
<div class="a" style="left:4.00px;top:199.32px;width:7.00px;height:1.3px;background:#569cd6"></div>
<div class="a" style="left:12.00px;top:199.32px;width:6.00px;height:1.3px;background:#dcdcaa"></div>
<div class="a" style="left:19.00px;top:199.32px;width:5.00px;height:1.3px;background:#4ec9b0"></div>
<div class="a" style="left:25.00px;top:199.32px;width:3.00px;height:1.3px;background:#9cdcfe"></div>
<div class="a" style="left:29.00px;top:199.32px;width:8.00px;height:1.3px;background:#ce9178"></div>
<div class="a" style="left:38.00px;top:199.32px;width:5.00px;height:1.3px;background:#c586c0"></div>
<div class="a" style="left:44.00px;top:199.32px;width:2.00px;height:1.3px;background:#dcdcaa"></div>
<div class="a" style="left:47.00px;top:199.32px;width:3.00px;height:1.3px;background:#c586c0"></div>
<div class="a" style="left:51.00px;top:199.32px;width:2.00px;height:1.3px;background:#cccccc"></div>
<div class="a" style="left:54.00px;top:199.32px;width:3.00px;height:1.3px;background:#4ec9b0"></div>
<div class="a" style="left:58.00px;top:199.32px;width:5.00px;height:1.3px;background:#dcdcaa"></div>
<div class="a" style="left:8.00px;top:201.30px;width:8.00px;height:1.3px;background:#ce9178"></div>
<div class="a" style="left:17.00px;top:201.30px;width:5.00px;height:1.3px;background:#569cd6"></div>
<div class="a" style="left:8.00px;top:205.27px;width:8.00px;height:1.3px;background:#c586c0"></div>
<div class="a" style="left:17.00px;top:205.27px;width:2.00px;height:1.3px;background:#4ec9b0"></div>
<div class="a" style="left:20.00px;top:205.27px;width:7.00px;height:1.3px;background:#569cd6"></div>
<div class="a" style="left:8.00px;top:207.26px;width:6.00px;height:1.3px;background:#dcdcaa"></div>
<div class="a" style="left:15.00px;top:207.26px;width:6.00px;height:1.3px;background:#c586c0"></div>
<div class="a" style="left:22.00px;top:207.26px;width:5.00px;height:1.3px;background:#9cdcfe"></div>
<div class="a" style="left:28.00px;top:207.26px;width:7.00px;height:1.3px;background:#569cd6"></div>
<div class="a" style="left:36.00px;top:207.26px;width:6.00px;height:1.3px;background:#9cdcfe"></div>
<div class="a" style="left:4.00px;top:209.25px;width:2.00px;height:1.3px;background:#9cdcfe"></div>
<div class="a" style="left:7.00px;top:209.25px;width:3.00px;height:1.3px;background:#cccccc"></div>
<div class="a" style="left:11.00px;top:209.25px;width:4.00px;height:1.3px;background:#dcdcaa"></div>
<div class="a" style="left:16.00px;top:209.25px;width:2.00px;height:1.3px;background:#dcdcaa"></div>
<div class="a" style="left:19.00px;top:209.25px;width:8.00px;height:1.3px;background:#4ec9b0"></div>
<div class="a" style="left:28.00px;top:209.25px;width:6.00px;height:1.3px;background:#c586c0"></div>
<div class="a" style="left:35.00px;top:209.25px;width:4.00px;height:1.3px;background:#569cd6"></div>
<div class="a" style="left:40.00px;top:209.25px;width:4.00px;height:1.3px;background:#ce9178"></div>
<div class="a" style="left:45.00px;top:209.25px;width:2.00px;height:1.3px;background:#569cd6"></div>
<div class="a" style="left:48.00px;top:209.25px;width:8.00px;height:1.3px;background:#dcdcaa"></div>
<div class="a" style="left:4.00px;top:211.23px;width:7.00px;height:1.3px;background:#9cdcfe"></div>
<div class="a" style="left:12.00px;top:211.23px;width:3.00px;height:1.3px;background:#dcdcaa"></div>
<div class="a" style="left:16.00px;top:211.23px;width:6.00px;height:1.3px;background:#dcdcaa"></div>
<div class="a" style="left:23.00px;top:211.23px;width:2.00px;height:1.3px;background:#ce9178"></div>
<div class="a" style="left:26.00px;top:211.23px;width:4.00px;height:1.3px;background:#9cdcfe"></div>
<div class="a" style="left:31.00px;top:211.23px;width:5.00px;height:1.3px;background:#c586c0"></div>
<div class="a" style="left:12.00px;top:213.21px;width:5.00px;height:1.3px;background:#9cdcfe"></div>
<div class="a" style="left:18.00px;top:213.21px;width:8.00px;height:1.3px;background:#9cdcfe"></div>
<div class="a" style="left:27.00px;top:213.21px;width:3.00px;height:1.3px;background:#4ec9b0"></div>
<div class="a" style="left:31.00px;top:213.21px;width:5.00px;height:1.3px;background:#4ec9b0"></div>
<div class="a" style="left:37.00px;top:213.21px;width:2.00px;height:1.3px;background:#9cdcfe"></div>
<div class="a" style="left:40.00px;top:213.21px;width:7.00px;height:1.3px;background:#4ec9b0"></div>
<div class="a" style="left:4.00px;top:215.20px;width:4.00px;height:1.3px;background:#cccccc"></div>
<div class="a" style="left:9.00px;top:215.20px;width:8.00px;height:1.3px;background:#cccccc"></div>
<div class="a" style="left:18.00px;top:215.20px;width:8.00px;height:1.3px;background:#dcdcaa"></div>
<div class="a" style="left:4.00px;top:217.18px;width:7.00px;height:1.3px;background:#c586c0"></div>
<div class="a" style="left:12.00px;top:217.18px;width:8.00px;height:1.3px;background:#9cdcfe"></div>
<div class="a" style="left:0.00px;top:219.17px;width:1.00px;height:1.3px;background:#ffd700"></div>
<div class="a" style="left:0.00px;top:223.14px;width:6.00px;height:1.3px;background:#569cd6"></div>
<div class="a" style="left:7.00px;top:223.14px;width:4.00px;height:1.3px;background:#569cd6"></div>
<div class="a" style="left:12.00px;top:223.14px;width:18.00px;height:1.3px;background:#dcdcaa"></div>
<div class="a" style="left:34.00px;top:223.14px;width:5.00px;height:1.3px;background:#569cd6"></div>
<div class="a" style="left:40.00px;top:223.14px;width:6.00px;height:1.3px;background:#569cd6"></div>
<div class="a" style="left:47.00px;top:223.14px;width:7.00px;height:1.3px;background:#4ec9b0"></div>
<div class="a" style="left:0.00px;top:225.12px;width:1.00px;height:1.3px;background:#ffd700"></div>
<div class="a" style="left:12.00px;top:227.11px;width:6.00px;height:1.3px;background:#c586c0"></div>
<div class="a" style="left:19.00px;top:227.11px;width:5.00px;height:1.3px;background:#ce9178"></div>
<div class="a" style="left:25.00px;top:227.11px;width:5.00px;height:1.3px;background:#dcdcaa"></div>
<div class="a" style="left:31.00px;top:227.11px;width:6.00px;height:1.3px;background:#ce9178"></div>
<div class="a" style="left:38.00px;top:227.11px;width:4.00px;height:1.3px;background:#c586c0"></div>
<div class="a" style="left:43.00px;top:227.11px;width:4.00px;height:1.3px;background:#dcdcaa"></div>
<div class="a" style="left:48.00px;top:227.11px;width:6.00px;height:1.3px;background:#4ec9b0"></div>
<div class="a" style="left:55.00px;top:227.11px;width:3.00px;height:1.3px;background:#c586c0"></div>
<div class="a" style="left:59.00px;top:227.11px;width:2.00px;height:1.3px;background:#9cdcfe"></div>
<div class="a" style="left:8.00px;top:231.08px;width:3.00px;height:1.3px;background:#c586c0"></div>
<div class="a" style="left:12.00px;top:231.08px;width:3.00px;height:1.3px;background:#4ec9b0"></div>
<div class="a" style="left:16.00px;top:231.08px;width:6.00px;height:1.3px;background:#dcdcaa"></div>
<div class="a" style="left:23.00px;top:231.08px;width:7.00px;height:1.3px;background:#4ec9b0"></div>
<div class="a" style="left:31.00px;top:231.08px;width:7.00px;height:1.3px;background:#dcdcaa"></div>
<div class="a" style="left:39.00px;top:231.08px;width:2.00px;height:1.3px;background:#dcdcaa"></div>
<div class="a" style="left:42.00px;top:231.08px;width:3.00px;height:1.3px;background:#9cdcfe"></div>
<div class="a" style="left:46.00px;top:231.08px;width:2.00px;height:1.3px;background:#4ec9b0"></div>
<div class="a" style="left:49.00px;top:231.08px;width:3.00px;height:1.3px;background:#dcdcaa"></div>
<div class="a" style="left:4.00px;top:233.06px;width:6.00px;height:1.3px;background:#dcdcaa"></div>
<div class="a" style="left:11.00px;top:233.06px;width:8.00px;height:1.3px;background:#dcdcaa"></div>
<div class="a" style="left:20.00px;top:233.06px;width:2.00px;height:1.3px;background:#ce9178"></div>
<div class="a" style="left:23.00px;top:233.06px;width:7.00px;height:1.3px;background:#9cdcfe"></div>
<div class="a" style="left:31.00px;top:233.06px;width:2.00px;height:1.3px;background:#dcdcaa"></div>
<div class="a" style="left:34.00px;top:233.06px;width:4.00px;height:1.3px;background:#9cdcfe"></div>
<div class="a" style="left:39.00px;top:233.06px;width:4.00px;height:1.3px;background:#dcdcaa"></div>
<div class="a" style="left:44.00px;top:233.06px;width:6.00px;height:1.3px;background:#dcdcaa"></div>
<div class="a" style="left:51.00px;top:233.06px;width:7.00px;height:1.3px;background:#4ec9b0"></div>
<div class="a" style="left:4.00px;top:235.05px;width:6.00px;height:1.3px;background:#dcdcaa"></div>
<div class="a" style="left:11.00px;top:235.05px;width:4.00px;height:1.3px;background:#dcdcaa"></div>
<div class="a" style="left:16.00px;top:235.05px;width:8.00px;height:1.3px;background:#dcdcaa"></div>
<div class="a" style="left:25.00px;top:235.05px;width:3.00px;height:1.3px;background:#ce9178"></div>
<div class="a" style="left:29.00px;top:235.05px;width:4.00px;height:1.3px;background:#4ec9b0"></div>
<div class="a" style="left:34.00px;top:235.05px;width:3.00px;height:1.3px;background:#dcdcaa"></div>
<div class="a" style="left:38.00px;top:235.05px;width:7.00px;height:1.3px;background:#dcdcaa"></div>
<div class="a" style="left:46.00px;top:235.05px;width:3.00px;height:1.3px;background:#c586c0"></div>
<div class="a" style="left:50.00px;top:235.05px;width:6.00px;height:1.3px;background:#dcdcaa"></div>
<div class="a" style="left:4.00px;top:237.03px;width:4.00px;height:1.3px;background:#9cdcfe"></div>
<div class="a" style="left:9.00px;top:237.03px;width:7.00px;height:1.3px;background:#569cd6"></div>
<div class="a" style="left:17.00px;top:237.03px;width:5.00px;height:1.3px;background:#c586c0"></div>
<div class="a" style="left:23.00px;top:237.03px;width:4.00px;height:1.3px;background:#dcdcaa"></div>
<div class="a" style="left:28.00px;top:237.03px;width:5.00px;height:1.3px;background:#cccccc"></div>
<div class="a" style="left:34.00px;top:237.03px;width:2.00px;height:1.3px;background:#dcdcaa"></div>
<div class="a" style="left:37.00px;top:237.03px;width:8.00px;height:1.3px;background:#dcdcaa"></div>
<div class="a" style="left:46.00px;top:237.03px;width:4.00px;height:1.3px;background:#ce9178"></div>
<div class="a" style="left:0.00px;top:239.02px;width:1.00px;height:1.3px;background:#ffd700"></div>
<div class="a" style="left:0.00px;top:242.99px;width:6.00px;height:1.3px;background:#569cd6"></div>
<div class="a" style="left:7.00px;top:242.99px;width:4.00px;height:1.3px;background:#569cd6"></div>
<div class="a" style="left:12.00px;top:242.99px;width:14.00px;height:1.3px;background:#dcdcaa"></div>
<div class="a" style="left:34.00px;top:242.99px;width:5.00px;height:1.3px;background:#569cd6"></div>
<div class="a" style="left:40.00px;top:242.99px;width:6.00px;height:1.3px;background:#569cd6"></div>
<div class="a" style="left:47.00px;top:242.99px;width:8.00px;height:1.3px;background:#4ec9b0"></div>
<div class="a" style="left:0.00px;top:244.98px;width:1.00px;height:1.3px;background:#ffd700"></div>
<div class="a" style="left:8.00px;top:246.96px;width:7.00px;height:1.3px;background:#dcdcaa"></div>
<div class="a" style="left:16.00px;top:246.96px;width:6.00px;height:1.3px;background:#dcdcaa"></div>
<div class="a" style="left:23.00px;top:246.96px;width:4.00px;height:1.3px;background:#c586c0"></div>
<div class="a" style="left:28.00px;top:246.96px;width:4.00px;height:1.3px;background:#dcdcaa"></div>
<div class="a" style="left:33.00px;top:246.96px;width:6.00px;height:1.3px;background:#c586c0"></div>
<div class="a" style="left:40.00px;top:246.96px;width:2.00px;height:1.3px;background:#ce9178"></div>
<div class="a" style="left:43.00px;top:246.96px;width:5.00px;height:1.3px;background:#ce9178"></div>
<div class="a" style="left:49.00px;top:246.96px;width:4.00px;height:1.3px;background:#dcdcaa"></div>
<div class="a" style="left:54.00px;top:246.96px;width:3.00px;height:1.3px;background:#cccccc"></div>
<div class="a" style="left:8.00px;top:248.94px;width:5.00px;height:1.3px;background:#9cdcfe"></div>
<div class="a" style="left:14.00px;top:248.94px;width:6.00px;height:1.3px;background:#c586c0"></div>
<div class="a" style="left:21.00px;top:248.94px;width:8.00px;height:1.3px;background:#ce9178"></div>
<div class="a" style="left:30.00px;top:248.94px;width:2.00px;height:1.3px;background:#dcdcaa"></div>
<div class="a" style="left:33.00px;top:248.94px;width:4.00px;height:1.3px;background:#9cdcfe"></div>
<div class="a" style="left:38.00px;top:248.94px;width:8.00px;height:1.3px;background:#dcdcaa"></div>
<div class="a" style="left:4.00px;top:252.91px;width:2.00px;height:1.3px;background:#569cd6"></div>
<div class="a" style="left:7.00px;top:252.91px;width:4.00px;height:1.3px;background:#9cdcfe"></div>
<div class="a" style="left:12.00px;top:252.91px;width:5.00px;height:1.3px;background:#c586c0"></div>
<div class="a" style="left:18.00px;top:252.91px;width:8.00px;height:1.3px;background:#9cdcfe"></div>
<div class="a" style="left:27.00px;top:252.91px;width:2.00px;height:1.3px;background:#569cd6"></div>
<div class="a" style="left:30.00px;top:252.91px;width:3.00px;height:1.3px;background:#ce9178"></div>
<div class="a" style="left:34.00px;top:252.91px;width:8.00px;height:1.3px;background:#dcdcaa"></div>
<div class="a" style="left:43.00px;top:252.91px;width:2.00px;height:1.3px;background:#dcdcaa"></div>
<div class="a" style="left:46.00px;top:252.91px;width:6.00px;height:1.3px;background:#dcdcaa"></div>
<div class="a" style="left:53.00px;top:252.91px;width:4.00px;height:1.3px;background:#dcdcaa"></div>
<div class="a" style="left:58.00px;top:252.91px;width:6.00px;height:1.3px;background:#569cd6"></div>
<div class="a" style="left:8.00px;top:256.88px;width:8.00px;height:1.3px;background:#569cd6"></div>
<div class="a" style="left:17.00px;top:256.88px;width:3.00px;height:1.3px;background:#569cd6"></div>
<div class="a" style="left:21.00px;top:256.88px;width:5.00px;height:1.3px;background:#c586c0"></div>
<div class="a" style="left:27.00px;top:256.88px;width:8.00px;height:1.3px;background:#c586c0"></div>
<div class="a" style="left:36.00px;top:256.88px;width:5.00px;height:1.3px;background:#569cd6"></div>
<div class="a" style="left:42.00px;top:256.88px;width:8.00px;height:1.3px;background:#9cdcfe"></div>
<div class="a" style="left:4.00px;top:258.87px;width:8.00px;height:1.3px;background:#ce9178"></div>
<div class="a" style="left:13.00px;top:258.87px;width:5.00px;height:1.3px;background:#dcdcaa"></div>
<div class="a" style="left:19.00px;top:258.87px;width:4.00px;height:1.3px;background:#ce9178"></div>
<div class="a" style="left:24.00px;top:258.87px;width:5.00px;height:1.3px;background:#c586c0"></div>
<div class="a" style="left:30.00px;top:258.87px;width:3.00px;height:1.3px;background:#cccccc"></div>
<div class="a" style="left:0.00px;top:262.84px;width:1.00px;height:1.3px;background:#ffd700"></div>
<div class="a" style="left:0.00px;top:266.81px;width:6.00px;height:1.3px;background:#569cd6"></div>
<div class="a" style="left:7.00px;top:266.81px;width:4.00px;height:1.3px;background:#569cd6"></div>
<div class="a" style="left:12.00px;top:266.81px;width:12.00px;height:1.3px;background:#dcdcaa"></div>
<div class="a" style="left:34.00px;top:266.81px;width:5.00px;height:1.3px;background:#569cd6"></div>
<div class="a" style="left:40.00px;top:266.81px;width:6.00px;height:1.3px;background:#569cd6"></div>
<div class="a" style="left:47.00px;top:266.81px;width:6.00px;height:1.3px;background:#4ec9b0"></div>
<div class="a" style="left:0.00px;top:268.79px;width:1.00px;height:1.3px;background:#ffd700"></div>
<div class="a" style="left:4.00px;top:270.78px;width:3.00px;height:1.3px;background:#dcdcaa"></div>
<div class="a" style="left:8.00px;top:270.78px;width:2.00px;height:1.3px;background:#dcdcaa"></div>
<div class="a" style="left:11.00px;top:270.78px;width:7.00px;height:1.3px;background:#c586c0"></div>
<div class="a" style="left:19.00px;top:270.78px;width:2.00px;height:1.3px;background:#c586c0"></div>
<div class="a" style="left:22.00px;top:270.78px;width:3.00px;height:1.3px;background:#ce9178"></div>
<div class="a" style="left:26.00px;top:270.78px;width:7.00px;height:1.3px;background:#569cd6"></div>
<div class="a" style="left:34.00px;top:270.78px;width:7.00px;height:1.3px;background:#dcdcaa"></div>
<div class="a" style="left:42.00px;top:270.78px;width:4.00px;height:1.3px;background:#dcdcaa"></div>
<div class="a" style="left:47.00px;top:270.78px;width:3.00px;height:1.3px;background:#dcdcaa"></div>
<div class="a" style="left:51.00px;top:270.78px;width:3.00px;height:1.3px;background:#dcdcaa"></div>
<div class="a" style="left:55.00px;top:270.78px;width:4.00px;height:1.3px;background:#569cd6"></div>
<div class="a" style="left:60.00px;top:270.78px;width:2.00px;height:1.3px;background:#9cdcfe"></div>
<div class="a" style="left:4.00px;top:272.76px;width:3.00px;height:1.3px;background:#4ec9b0"></div>
<div class="a" style="left:8.00px;top:272.76px;width:4.00px;height:1.3px;background:#ce9178"></div>
<div class="a" style="left:13.00px;top:272.76px;width:3.00px;height:1.3px;background:#cccccc"></div>
<div class="a" style="left:17.00px;top:272.76px;width:6.00px;height:1.3px;background:#9cdcfe"></div>
<div class="a" style="left:24.00px;top:272.76px;width:2.00px;height:1.3px;background:#cccccc"></div>
<div class="a" style="left:27.00px;top:272.76px;width:2.00px;height:1.3px;background:#dcdcaa"></div>
<div class="a" style="left:4.00px;top:274.75px;width:4.00px;height:1.3px;background:#dcdcaa"></div>
<div class="a" style="left:9.00px;top:274.75px;width:6.00px;height:1.3px;background:#dcdcaa"></div>
<div class="a" style="left:16.00px;top:274.75px;width:8.00px;height:1.3px;background:#ce9178"></div>
<div class="a" style="left:25.00px;top:274.75px;width:6.00px;height:1.3px;background:#9cdcfe"></div>
<div class="a" style="left:8.00px;top:276.73px;width:7.00px;height:1.3px;background:#c586c0"></div>
<div class="a" style="left:12.00px;top:280.70px;width:2.00px;height:1.3px;background:#569cd6"></div>
<div class="a" style="left:15.00px;top:280.70px;width:8.00px;height:1.3px;background:#ce9178"></div>
<div class="a" style="left:8.00px;top:282.69px;width:6.00px;height:1.3px;background:#ce9178"></div>
<div class="a" style="left:15.00px;top:282.69px;width:8.00px;height:1.3px;background:#cccccc"></div>
<div class="a" style="left:24.00px;top:282.69px;width:2.00px;height:1.3px;background:#9cdcfe"></div>
<div class="a" style="left:27.00px;top:282.69px;width:3.00px;height:1.3px;background:#569cd6"></div>
<div class="a" style="left:31.00px;top:282.69px;width:7.00px;height:1.3px;background:#c586c0"></div>
<div class="a" style="left:39.00px;top:282.69px;width:4.00px;height:1.3px;background:#569cd6"></div>
<div class="a" style="left:44.00px;top:282.69px;width:6.00px;height:1.3px;background:#cccccc"></div>
<div class="a" style="left:51.00px;top:282.69px;width:5.00px;height:1.3px;background:#dcdcaa"></div>
<div class="a" style="left:57.00px;top:282.69px;width:2.00px;height:1.3px;background:#dcdcaa"></div>
<div class="a" style="left:60.00px;top:282.69px;width:4.00px;height:1.3px;background:#9cdcfe"></div>
<div class="a" style="left:8.00px;top:284.67px;width:5.00px;height:1.3px;background:#c586c0"></div>
<div class="a" style="left:14.00px;top:284.67px;width:4.00px;height:1.3px;background:#9cdcfe"></div>
<div class="a" style="left:19.00px;top:284.67px;width:6.00px;height:1.3px;background:#dcdcaa"></div>
<div class="a" style="left:26.00px;top:284.67px;width:7.00px;height:1.3px;background:#dcdcaa"></div>
<div class="a" style="left:34.00px;top:284.67px;width:2.00px;height:1.3px;background:#ce9178"></div>
<div class="a" style="left:37.00px;top:284.67px;width:6.00px;height:1.3px;background:#c586c0"></div>
<div class="a" style="left:44.00px;top:284.67px;width:2.00px;height:1.3px;background:#9cdcfe"></div>
<div class="a" style="left:47.00px;top:284.67px;width:4.00px;height:1.3px;background:#9cdcfe"></div>
<div class="a" style="left:52.00px;top:284.67px;width:4.00px;height:1.3px;background:#c586c0"></div>
<div class="a" style="left:0.00px;top:286.66px;width:1.00px;height:1.3px;background:#ffd700"></div>
<div class="a" style="left:0.00px;top:290.63px;width:6.00px;height:1.3px;background:#569cd6"></div>
<div class="a" style="left:7.00px;top:290.63px;width:4.00px;height:1.3px;background:#569cd6"></div>
<div class="a" style="left:12.00px;top:290.63px;width:15.00px;height:1.3px;background:#dcdcaa"></div>
<div class="a" style="left:34.00px;top:290.63px;width:5.00px;height:1.3px;background:#569cd6"></div>
<div class="a" style="left:40.00px;top:290.63px;width:6.00px;height:1.3px;background:#569cd6"></div>
<div class="a" style="left:47.00px;top:290.63px;width:11.00px;height:1.3px;background:#4ec9b0"></div>
<div class="a" style="left:0.00px;top:292.61px;width:1.00px;height:1.3px;background:#ffd700"></div>
<div class="a" style="left:8.00px;top:298.57px;width:2.00px;height:1.3px;background:#569cd6"></div>
<div class="a" style="left:11.00px;top:298.57px;width:7.00px;height:1.3px;background:#dcdcaa"></div>
<div class="a" style="left:19.00px;top:298.57px;width:2.00px;height:1.3px;background:#4ec9b0"></div>
<div class="a" style="left:22.00px;top:298.57px;width:3.00px;height:1.3px;background:#4ec9b0"></div>
<div class="a" style="left:26.00px;top:298.57px;width:4.00px;height:1.3px;background:#cccccc"></div>
<div class="a" style="left:31.00px;top:298.57px;width:8.00px;height:1.3px;background:#cccccc"></div>
<div class="a" style="left:40.00px;top:298.57px;width:5.00px;height:1.3px;background:#9cdcfe"></div>
<div class="a" style="left:4.00px;top:300.55px;width:8.00px;height:1.3px;background:#569cd6"></div>
<div class="a" style="left:13.00px;top:300.55px;width:7.00px;height:1.3px;background:#cccccc"></div>
<div class="a" style="left:21.00px;top:300.55px;width:5.00px;height:1.3px;background:#9cdcfe"></div>
<div class="a" style="left:27.00px;top:300.55px;width:7.00px;height:1.3px;background:#ce9178"></div>
<div class="a" style="left:8.00px;top:302.54px;width:8.00px;height:1.3px;background:#9cdcfe"></div>
<div class="a" style="left:17.00px;top:302.54px;width:6.00px;height:1.3px;background:#9cdcfe"></div>
<div class="a" style="left:24.00px;top:302.54px;width:6.00px;height:1.3px;background:#569cd6"></div>
<div class="a" style="left:31.00px;top:302.54px;width:7.00px;height:1.3px;background:#4ec9b0"></div>
<div class="a" style="left:39.00px;top:302.54px;width:6.00px;height:1.3px;background:#dcdcaa"></div>
<div class="a" style="left:0.00px;top:304.52px;width:1.00px;height:1.3px;background:#ffd700"></div>
<div class="a" style="left:0.00px;top:308.50px;width:6.00px;height:1.3px;background:#569cd6"></div>
<div class="a" style="left:7.00px;top:308.50px;width:4.00px;height:1.3px;background:#569cd6"></div>
<div class="a" style="left:12.00px;top:308.50px;width:15.00px;height:1.3px;background:#dcdcaa"></div>
<div class="a" style="left:34.00px;top:308.50px;width:5.00px;height:1.3px;background:#569cd6"></div>
<div class="a" style="left:40.00px;top:308.50px;width:6.00px;height:1.3px;background:#569cd6"></div>
<div class="a" style="left:47.00px;top:308.50px;width:6.00px;height:1.3px;background:#4ec9b0"></div>
<div class="a" style="left:0.00px;top:310.48px;width:1.00px;height:1.3px;background:#ffd700"></div>
<div class="a" style="left:8.00px;top:312.46px;width:7.00px;height:1.3px;background:#569cd6"></div>
<div class="a" style="left:16.00px;top:312.46px;width:2.00px;height:1.3px;background:#c586c0"></div>
<div class="a" style="left:19.00px;top:312.46px;width:2.00px;height:1.3px;background:#c586c0"></div>
<div class="a" style="left:22.00px;top:312.46px;width:7.00px;height:1.3px;background:#9cdcfe"></div>
<div class="a" style="left:30.00px;top:312.46px;width:6.00px;height:1.3px;background:#dcdcaa"></div>
<div class="a" style="left:37.00px;top:312.46px;width:6.00px;height:1.3px;background:#ce9178"></div>
<div class="a" style="left:44.00px;top:312.46px;width:6.00px;height:1.3px;background:#dcdcaa"></div>
<div class="a" style="left:12.00px;top:314.45px;width:6.00px;height:1.3px;background:#dcdcaa"></div>
<div class="a" style="left:19.00px;top:314.45px;width:2.00px;height:1.3px;background:#dcdcaa"></div>
<div class="a" style="left:22.00px;top:314.45px;width:7.00px;height:1.3px;background:#dcdcaa"></div>
<div class="a" style="left:30.00px;top:314.45px;width:4.00px;height:1.3px;background:#9cdcfe"></div>
<div class="a" style="left:35.00px;top:314.45px;width:6.00px;height:1.3px;background:#dcdcaa"></div>
<div class="a" style="left:42.00px;top:314.45px;width:7.00px;height:1.3px;background:#cccccc"></div>
<div class="a" style="left:50.00px;top:314.45px;width:2.00px;height:1.3px;background:#c586c0"></div>
<div class="a" style="left:53.00px;top:314.45px;width:8.00px;height:1.3px;background:#cccccc"></div>
<div class="a" style="left:62.00px;top:314.45px;width:4.00px;height:1.3px;background:#dcdcaa"></div>
<div class="a" style="left:4.00px;top:316.44px;width:4.00px;height:1.3px;background:#9cdcfe"></div>
<div class="a" style="left:9.00px;top:316.44px;width:7.00px;height:1.3px;background:#dcdcaa"></div>
<div class="a" style="left:17.00px;top:316.44px;width:5.00px;height:1.3px;background:#c586c0"></div>
<div class="a" style="left:23.00px;top:316.44px;width:3.00px;height:1.3px;background:#ce9178"></div>
<div class="a" style="left:27.00px;top:316.44px;width:4.00px;height:1.3px;background:#4ec9b0"></div>
<div class="a" style="left:32.00px;top:316.44px;width:6.00px;height:1.3px;background:#ce9178"></div>
<div class="a" style="left:39.00px;top:316.44px;width:5.00px;height:1.3px;background:#dcdcaa"></div>
<div class="a" style="left:45.00px;top:316.44px;width:3.00px;height:1.3px;background:#4ec9b0"></div>
<div class="a" style="left:49.00px;top:316.44px;width:2.00px;height:1.3px;background:#c586c0"></div>
<div class="a" style="left:52.00px;top:316.44px;width:5.00px;height:1.3px;background:#9cdcfe"></div>
<div class="a" style="left:58.00px;top:316.44px;width:7.00px;height:1.3px;background:#c586c0"></div>
<div class="a" style="left:0.00px;top:318.42px;width:1.00px;height:1.3px;background:#ffd700"></div>
<div class="a" style="left:0.00px;top:322.39px;width:6.00px;height:1.3px;background:#569cd6"></div>
<div class="a" style="left:7.00px;top:322.39px;width:4.00px;height:1.3px;background:#569cd6"></div>
<div class="a" style="left:12.00px;top:322.39px;width:11.00px;height:1.3px;background:#dcdcaa"></div>
<div class="a" style="left:34.00px;top:322.39px;width:5.00px;height:1.3px;background:#569cd6"></div>
<div class="a" style="left:40.00px;top:322.39px;width:6.00px;height:1.3px;background:#569cd6"></div>
<div class="a" style="left:47.00px;top:322.39px;width:8.00px;height:1.3px;background:#4ec9b0"></div>
<div class="a" style="left:0.00px;top:324.38px;width:1.00px;height:1.3px;background:#ffd700"></div>
<div class="a" style="left:4.00px;top:326.36px;width:6.00px;height:1.3px;background:#dcdcaa"></div>
<div class="a" style="left:11.00px;top:326.36px;width:6.00px;height:1.3px;background:#4ec9b0"></div>
<div class="a" style="left:18.00px;top:326.36px;width:2.00px;height:1.3px;background:#9cdcfe"></div>
<div class="a" style="left:21.00px;top:326.36px;width:5.00px;height:1.3px;background:#cccccc"></div>
<div class="a" style="left:27.00px;top:326.36px;width:6.00px;height:1.3px;background:#dcdcaa"></div>
<div class="a" style="left:34.00px;top:326.36px;width:6.00px;height:1.3px;background:#9cdcfe"></div>
<div class="a" style="left:41.00px;top:326.36px;width:3.00px;height:1.3px;background:#9cdcfe"></div>
<div class="a" style="left:45.00px;top:326.36px;width:3.00px;height:1.3px;background:#9cdcfe"></div>
<div class="a" style="left:49.00px;top:326.36px;width:5.00px;height:1.3px;background:#9cdcfe"></div>
<div class="a" style="left:4.00px;top:328.34px;width:6.00px;height:1.3px;background:#dcdcaa"></div>
<div class="a" style="left:11.00px;top:328.34px;width:3.00px;height:1.3px;background:#cccccc"></div>
<div class="a" style="left:15.00px;top:328.34px;width:5.00px;height:1.3px;background:#4ec9b0"></div>
<div class="a" style="left:21.00px;top:328.34px;width:8.00px;height:1.3px;background:#9cdcfe"></div>
<div class="a" style="left:12.00px;top:330.33px;width:7.00px;height:1.3px;background:#dcdcaa"></div>
<div class="a" style="left:20.00px;top:330.33px;width:8.00px;height:1.3px;background:#dcdcaa"></div>
<div class="a" style="left:29.00px;top:330.33px;width:7.00px;height:1.3px;background:#dcdcaa"></div>
<div class="a" style="left:37.00px;top:330.33px;width:4.00px;height:1.3px;background:#dcdcaa"></div>
<div class="a" style="left:42.00px;top:330.33px;width:2.00px;height:1.3px;background:#cccccc"></div>
<div class="a" style="left:45.00px;top:330.33px;width:8.00px;height:1.3px;background:#9cdcfe"></div>
<div class="a" style="left:54.00px;top:330.33px;width:2.00px;height:1.3px;background:#9cdcfe"></div>
<div class="a" style="left:57.00px;top:330.33px;width:5.00px;height:1.3px;background:#9cdcfe"></div>
<div class="a" style="left:63.00px;top:330.33px;width:7.00px;height:1.3px;background:#4ec9b0"></div>
<div class="a" style="left:4.00px;top:332.31px;width:5.00px;height:1.3px;background:#4ec9b0"></div>
<div class="a" style="left:10.00px;top:332.31px;width:2.00px;height:1.3px;background:#cccccc"></div>
<div class="a" style="left:13.00px;top:332.31px;width:2.00px;height:1.3px;background:#cccccc"></div>
<div class="a" style="left:16.00px;top:332.31px;width:7.00px;height:1.3px;background:#4ec9b0"></div>
<div class="a" style="left:8.00px;top:334.30px;width:2.00px;height:1.3px;background:#cccccc"></div>
<div class="a" style="left:11.00px;top:334.30px;width:2.00px;height:1.3px;background:#9cdcfe"></div>
<div class="a" style="left:14.00px;top:334.30px;width:2.00px;height:1.3px;background:#dcdcaa"></div>
<div class="a" style="left:17.00px;top:334.30px;width:8.00px;height:1.3px;background:#9cdcfe"></div>
<div class="a" style="left:0.00px;top:336.28px;width:1.00px;height:1.3px;background:#ffd700"></div>
<div class="a" style="left:0.00px;top:340.25px;width:6.00px;height:1.3px;background:#569cd6"></div>
<div class="a" style="left:7.00px;top:340.25px;width:4.00px;height:1.3px;background:#569cd6"></div>
<div class="a" style="left:12.00px;top:340.25px;width:9.00px;height:1.3px;background:#dcdcaa"></div>
<div class="a" style="left:34.00px;top:340.25px;width:5.00px;height:1.3px;background:#569cd6"></div>
<div class="a" style="left:40.00px;top:340.25px;width:6.00px;height:1.3px;background:#569cd6"></div>
<div class="a" style="left:47.00px;top:340.25px;width:13.00px;height:1.3px;background:#4ec9b0"></div>
<div class="a" style="left:0.00px;top:342.24px;width:1.00px;height:1.3px;background:#ffd700"></div>
<div class="a" style="left:4.00px;top:344.22px;width:2.00px;height:1.3px;background:#9cdcfe"></div>
<div class="a" style="left:7.00px;top:344.22px;width:4.00px;height:1.3px;background:#dcdcaa"></div>
<div class="a" style="left:12.00px;top:344.22px;width:7.00px;height:1.3px;background:#9cdcfe"></div>
<div class="a" style="left:20.00px;top:344.22px;width:4.00px;height:1.3px;background:#4ec9b0"></div>
<div class="a" style="left:25.00px;top:344.22px;width:2.00px;height:1.3px;background:#dcdcaa"></div>
<div class="a" style="left:28.00px;top:344.22px;width:5.00px;height:1.3px;background:#dcdcaa"></div>
<div class="a" style="left:34.00px;top:344.22px;width:3.00px;height:1.3px;background:#ce9178"></div>
<div class="a" style="left:4.00px;top:348.19px;width:7.00px;height:1.3px;background:#9cdcfe"></div>
<div class="a" style="left:12.00px;top:348.19px;width:5.00px;height:1.3px;background:#c586c0"></div>
<div class="a" style="left:18.00px;top:348.19px;width:2.00px;height:1.3px;background:#cccccc"></div>
<div class="a" style="left:21.00px;top:348.19px;width:4.00px;height:1.3px;background:#9cdcfe"></div>
<div class="a" style="left:26.00px;top:348.19px;width:5.00px;height:1.3px;background:#c586c0"></div>
<div class="a" style="left:32.00px;top:348.19px;width:2.00px;height:1.3px;background:#ce9178"></div>
<div class="a" style="left:35.00px;top:348.19px;width:6.00px;height:1.3px;background:#9cdcfe"></div>
<div class="a" style="left:42.00px;top:348.19px;width:5.00px;height:1.3px;background:#9cdcfe"></div>
<div class="a" style="left:48.00px;top:348.19px;width:3.00px;height:1.3px;background:#4ec9b0"></div>
<div class="a" style="left:52.00px;top:348.19px;width:8.00px;height:1.3px;background:#9cdcfe"></div>
<div class="a" style="left:12.00px;top:352.16px;width:4.00px;height:1.3px;background:#dcdcaa"></div>
<div class="a" style="left:17.00px;top:352.16px;width:6.00px;height:1.3px;background:#9cdcfe"></div>
<div class="a" style="left:24.00px;top:352.16px;width:4.00px;height:1.3px;background:#cccccc"></div>
<div class="a" style="left:29.00px;top:352.16px;width:3.00px;height:1.3px;background:#cccccc"></div>
<div class="a" style="left:33.00px;top:352.16px;width:5.00px;height:1.3px;background:#dcdcaa"></div>
<div class="a" style="left:39.00px;top:352.16px;width:5.00px;height:1.3px;background:#dcdcaa"></div>
<div class="a" style="left:45.00px;top:352.16px;width:3.00px;height:1.3px;background:#ce9178"></div>
<div class="a" style="left:12.00px;top:354.15px;width:2.00px;height:1.3px;background:#dcdcaa"></div>
<div class="a" style="left:15.00px;top:354.15px;width:3.00px;height:1.3px;background:#9cdcfe"></div>
<div class="a" style="left:19.00px;top:354.15px;width:3.00px;height:1.3px;background:#9cdcfe"></div>
<div class="a" style="left:23.00px;top:354.15px;width:7.00px;height:1.3px;background:#dcdcaa"></div>
<div class="a" style="left:31.00px;top:354.15px;width:7.00px;height:1.3px;background:#dcdcaa"></div>
<div class="a" style="left:39.00px;top:354.15px;width:4.00px;height:1.3px;background:#dcdcaa"></div>
<div class="a" style="left:44.00px;top:354.15px;width:8.00px;height:1.3px;background:#9cdcfe"></div>
<div class="a" style="left:53.00px;top:354.15px;width:8.00px;height:1.3px;background:#dcdcaa"></div>
<div class="a" style="left:62.00px;top:354.15px;width:2.00px;height:1.3px;background:#cccccc"></div>
<div class="a" style="left:65.00px;top:354.15px;width:6.00px;height:1.3px;background:#cccccc"></div>
<div class="a" style="left:12.00px;top:356.13px;width:6.00px;height:1.3px;background:#9cdcfe"></div>
<div class="a" style="left:19.00px;top:356.13px;width:2.00px;height:1.3px;background:#ce9178"></div>
<div class="a" style="left:22.00px;top:356.13px;width:8.00px;height:1.3px;background:#569cd6"></div>
<div class="a" style="left:8.00px;top:358.12px;width:7.00px;height:1.3px;background:#dcdcaa"></div>
<div class="a" style="left:16.00px;top:358.12px;width:8.00px;height:1.3px;background:#9cdcfe"></div>
<div class="a" style="left:25.00px;top:358.12px;width:6.00px;height:1.3px;background:#cccccc"></div>
<div class="a" style="left:32.00px;top:358.12px;width:6.00px;height:1.3px;background:#4ec9b0"></div>
<div class="a" style="left:39.00px;top:358.12px;width:2.00px;height:1.3px;background:#cccccc"></div>
<div class="a" style="left:42.00px;top:358.12px;width:3.00px;height:1.3px;background:#9cdcfe"></div>
<div class="a" style="left:8.00px;top:360.10px;width:8.00px;height:1.3px;background:#9cdcfe"></div>
<div class="a" style="left:17.00px;top:360.10px;width:4.00px;height:1.3px;background:#ce9178"></div>
<div class="a" style="left:22.00px;top:360.10px;width:8.00px;height:1.3px;background:#569cd6"></div>
<div class="a" style="left:31.00px;top:360.10px;width:2.00px;height:1.3px;background:#dcdcaa"></div>
<div class="a" style="left:34.00px;top:360.10px;width:3.00px;height:1.3px;background:#cccccc"></div>
<div class="a" style="left:38.00px;top:360.10px;width:8.00px;height:1.3px;background:#c586c0"></div>
<div class="a" style="left:0.00px;top:362.09px;width:1.00px;height:1.3px;background:#ffd700"></div>
<div class="a" style="left:0.00px;top:366.06px;width:6.00px;height:1.3px;background:#569cd6"></div>
<div class="a" style="left:7.00px;top:366.06px;width:4.00px;height:1.3px;background:#569cd6"></div>
<div class="a" style="left:12.00px;top:366.06px;width:12.00px;height:1.3px;background:#dcdcaa"></div>
<div class="a" style="left:34.00px;top:366.06px;width:5.00px;height:1.3px;background:#569cd6"></div>
<div class="a" style="left:40.00px;top:366.06px;width:6.00px;height:1.3px;background:#569cd6"></div>
<div class="a" style="left:47.00px;top:366.06px;width:12.00px;height:1.3px;background:#4ec9b0"></div>
<div class="a" style="left:0.00px;top:368.04px;width:1.00px;height:1.3px;background:#ffd700"></div>
<div class="a" style="left:8.00px;top:370.03px;width:5.00px;height:1.3px;background:#4ec9b0"></div>
<div class="a" style="left:14.00px;top:370.03px;width:7.00px;height:1.3px;background:#9cdcfe"></div>
<div class="a" style="left:22.00px;top:370.03px;width:6.00px;height:1.3px;background:#4ec9b0"></div>
<div class="a" style="left:29.00px;top:370.03px;width:7.00px;height:1.3px;background:#569cd6"></div>
<div class="a" style="left:37.00px;top:370.03px;width:3.00px;height:1.3px;background:#dcdcaa"></div>
<div class="a" style="left:41.00px;top:370.03px;width:7.00px;height:1.3px;background:#569cd6"></div>
<div class="a" style="left:49.00px;top:370.03px;width:6.00px;height:1.3px;background:#dcdcaa"></div>
<div class="a" style="left:56.00px;top:370.03px;width:8.00px;height:1.3px;background:#dcdcaa"></div>
<div class="a" style="left:4.00px;top:372.01px;width:6.00px;height:1.3px;background:#569cd6"></div>
<div class="a" style="left:11.00px;top:372.01px;width:5.00px;height:1.3px;background:#dcdcaa"></div>
<div class="a" style="left:17.00px;top:372.01px;width:7.00px;height:1.3px;background:#ce9178"></div>
<div class="a" style="left:25.00px;top:372.01px;width:3.00px;height:1.3px;background:#9cdcfe"></div>
<div class="a" style="left:4.00px;top:374.00px;width:8.00px;height:1.3px;background:#c586c0"></div>
<div class="a" style="left:13.00px;top:374.00px;width:7.00px;height:1.3px;background:#dcdcaa"></div>
<div class="a" style="left:21.00px;top:374.00px;width:5.00px;height:1.3px;background:#c586c0"></div>
<div class="a" style="left:27.00px;top:374.00px;width:7.00px;height:1.3px;background:#ce9178"></div>
<div class="a" style="left:35.00px;top:374.00px;width:7.00px;height:1.3px;background:#cccccc"></div>
<div class="a" style="left:43.00px;top:374.00px;width:2.00px;height:1.3px;background:#ce9178"></div>
<div class="a" style="left:46.00px;top:374.00px;width:7.00px;height:1.3px;background:#ce9178"></div>
<div class="a" style="left:12.00px;top:375.98px;width:4.00px;height:1.3px;background:#c586c0"></div>
<div class="a" style="left:17.00px;top:375.98px;width:6.00px;height:1.3px;background:#cccccc"></div>
<div class="a" style="left:24.00px;top:375.98px;width:3.00px;height:1.3px;background:#dcdcaa"></div>
<div class="a" style="left:28.00px;top:375.98px;width:4.00px;height:1.3px;background:#9cdcfe"></div>
<div class="a" style="left:33.00px;top:375.98px;width:6.00px;height:1.3px;background:#9cdcfe"></div>
<div class="a" style="left:40.00px;top:375.98px;width:8.00px;height:1.3px;background:#dcdcaa"></div>
<div class="a" style="left:49.00px;top:375.98px;width:8.00px;height:1.3px;background:#569cd6"></div>
<div class="a" style="left:8.00px;top:377.97px;width:3.00px;height:1.3px;background:#c586c0"></div>
<div class="a" style="left:12.00px;top:377.97px;width:2.00px;height:1.3px;background:#dcdcaa"></div>
<div class="a" style="left:15.00px;top:377.97px;width:2.00px;height:1.3px;background:#ce9178"></div>
<div class="a" style="left:4.00px;top:379.95px;width:5.00px;height:1.3px;background:#dcdcaa"></div>
<div class="a" style="left:10.00px;top:379.95px;width:8.00px;height:1.3px;background:#dcdcaa"></div>
<div class="a" style="left:19.00px;top:379.95px;width:5.00px;height:1.3px;background:#cccccc"></div>
<div class="a" style="left:4.00px;top:381.94px;width:8.00px;height:1.3px;background:#dcdcaa"></div>
<div class="a" style="left:13.00px;top:381.94px;width:8.00px;height:1.3px;background:#ce9178"></div>
<div class="a" style="left:22.00px;top:381.94px;width:2.00px;height:1.3px;background:#dcdcaa"></div>
<div class="a" style="left:25.00px;top:381.94px;width:6.00px;height:1.3px;background:#ce9178"></div>
<div class="a" style="left:32.00px;top:381.94px;width:2.00px;height:1.3px;background:#4ec9b0"></div>
<div class="a" style="left:35.00px;top:381.94px;width:3.00px;height:1.3px;background:#dcdcaa"></div>
<div class="a" style="left:39.00px;top:381.94px;width:6.00px;height:1.3px;background:#4ec9b0"></div>
<div class="a" style="left:46.00px;top:381.94px;width:2.00px;height:1.3px;background:#9cdcfe"></div>
<div class="a" style="left:49.00px;top:381.94px;width:3.00px;height:1.3px;background:#c586c0"></div>
<div class="a" style="left:53.00px;top:381.94px;width:2.00px;height:1.3px;background:#569cd6"></div>
<div class="a" style="left:56.00px;top:381.94px;width:5.00px;height:1.3px;background:#569cd6"></div>
<div class="a" style="left:12.00px;top:383.92px;width:5.00px;height:1.3px;background:#9cdcfe"></div>
<div class="a" style="left:18.00px;top:383.92px;width:8.00px;height:1.3px;background:#dcdcaa"></div>
<div class="a" style="left:27.00px;top:383.92px;width:5.00px;height:1.3px;background:#ce9178"></div>
<div class="a" style="left:33.00px;top:383.92px;width:3.00px;height:1.3px;background:#9cdcfe"></div>
<div class="a" style="left:37.00px;top:383.92px;width:5.00px;height:1.3px;background:#dcdcaa"></div>
<div class="a" style="left:43.00px;top:383.92px;width:3.00px;height:1.3px;background:#c586c0"></div>
<div class="a" style="left:4.00px;top:385.91px;width:6.00px;height:1.3px;background:#ce9178"></div>
<div class="a" style="left:11.00px;top:385.91px;width:7.00px;height:1.3px;background:#cccccc"></div>
<div class="a" style="left:19.00px;top:385.91px;width:8.00px;height:1.3px;background:#dcdcaa"></div>
<div class="a" style="left:28.00px;top:385.91px;width:8.00px;height:1.3px;background:#ce9178"></div>
<div class="a" style="left:37.00px;top:385.91px;width:5.00px;height:1.3px;background:#c586c0"></div>
<div class="a" style="left:12.00px;top:387.89px;width:8.00px;height:1.3px;background:#dcdcaa"></div>
<div class="a" style="left:21.00px;top:387.89px;width:7.00px;height:1.3px;background:#ce9178"></div>
<div class="a" style="left:29.00px;top:387.89px;width:3.00px;height:1.3px;background:#4ec9b0"></div>
<div class="a" style="left:33.00px;top:387.89px;width:6.00px;height:1.3px;background:#cccccc"></div>
<div class="a" style="left:40.00px;top:387.89px;width:7.00px;height:1.3px;background:#569cd6"></div>
<div class="a" style="left:48.00px;top:387.89px;width:3.00px;height:1.3px;background:#9cdcfe"></div>
<div class="a" style="left:52.00px;top:387.89px;width:8.00px;height:1.3px;background:#9cdcfe"></div>
<div class="a" style="left:4.00px;top:389.88px;width:6.00px;height:1.3px;background:#c586c0"></div>
<div class="a" style="left:11.00px;top:389.88px;width:4.00px;height:1.3px;background:#9cdcfe"></div>
<div class="a" style="left:16.00px;top:389.88px;width:7.00px;height:1.3px;background:#cccccc"></div>
<div class="a" style="left:24.00px;top:389.88px;width:3.00px;height:1.3px;background:#569cd6"></div>
<div class="a" style="left:28.00px;top:389.88px;width:6.00px;height:1.3px;background:#9cdcfe"></div>
<div class="a" style="left:35.00px;top:389.88px;width:7.00px;height:1.3px;background:#c586c0"></div>
<div class="a" style="left:43.00px;top:389.88px;width:2.00px;height:1.3px;background:#569cd6"></div>
<div class="a" style="left:46.00px;top:389.88px;width:7.00px;height:1.3px;background:#9cdcfe"></div>
<div class="a" style="left:54.00px;top:389.88px;width:5.00px;height:1.3px;background:#4ec9b0"></div>
<div class="a" style="left:4.00px;top:391.87px;width:3.00px;height:1.3px;background:#4ec9b0"></div>
<div class="a" style="left:8.00px;top:391.87px;width:2.00px;height:1.3px;background:#569cd6"></div>
<div class="a" style="left:11.00px;top:391.87px;width:7.00px;height:1.3px;background:#4ec9b0"></div>
<div class="a" style="left:19.00px;top:391.87px;width:8.00px;height:1.3px;background:#dcdcaa"></div>
<div class="a" style="left:28.00px;top:391.87px;width:4.00px;height:1.3px;background:#dcdcaa"></div>
<div class="a" style="left:33.00px;top:391.87px;width:4.00px;height:1.3px;background:#9cdcfe"></div>
<div class="a" style="left:38.00px;top:391.87px;width:5.00px;height:1.3px;background:#9cdcfe"></div>
<div class="a" style="left:8.00px;top:393.85px;width:8.00px;height:1.3px;background:#569cd6"></div>
<div class="a" style="left:17.00px;top:393.85px;width:3.00px;height:1.3px;background:#dcdcaa"></div>
<div class="a" style="left:21.00px;top:393.85px;width:4.00px;height:1.3px;background:#dcdcaa"></div>
<div class="a" style="left:26.00px;top:393.85px;width:8.00px;height:1.3px;background:#9cdcfe"></div>
<div class="a" style="left:35.00px;top:393.85px;width:2.00px;height:1.3px;background:#9cdcfe"></div>
<div class="a" style="left:38.00px;top:393.85px;width:5.00px;height:1.3px;background:#ce9178"></div>
<div class="a" style="left:0.00px;top:395.83px;width:1.00px;height:1.3px;background:#ffd700"></div>
<div class="a" style="left:0.00px;top:399.81px;width:6.00px;height:1.3px;background:#569cd6"></div>
<div class="a" style="left:7.00px;top:399.81px;width:4.00px;height:1.3px;background:#569cd6"></div>
<div class="a" style="left:12.00px;top:399.81px;width:18.00px;height:1.3px;background:#dcdcaa"></div>
<div class="a" style="left:34.00px;top:399.81px;width:5.00px;height:1.3px;background:#569cd6"></div>
<div class="a" style="left:40.00px;top:399.81px;width:6.00px;height:1.3px;background:#569cd6"></div>
<div class="a" style="left:47.00px;top:399.81px;width:11.00px;height:1.3px;background:#4ec9b0"></div>
<div class="a" style="left:0.00px;top:401.79px;width:1.00px;height:1.3px;background:#ffd700"></div>
<div class="a" style="left:8.00px;top:405.76px;width:4.00px;height:1.3px;background:#4ec9b0"></div>
<div class="a" style="left:13.00px;top:405.76px;width:8.00px;height:1.3px;background:#569cd6"></div>
<div class="a" style="left:22.00px;top:405.76px;width:4.00px;height:1.3px;background:#dcdcaa"></div>
<div class="a" style="left:4.00px;top:407.75px;width:7.00px;height:1.3px;background:#dcdcaa"></div>
<div class="a" style="left:12.00px;top:407.75px;width:2.00px;height:1.3px;background:#dcdcaa"></div>
<div class="a" style="left:15.00px;top:407.75px;width:6.00px;height:1.3px;background:#dcdcaa"></div>
<div class="a" style="left:22.00px;top:407.75px;width:3.00px;height:1.3px;background:#dcdcaa"></div>
<div class="a" style="left:26.00px;top:407.75px;width:4.00px;height:1.3px;background:#9cdcfe"></div>
<div class="a" style="left:31.00px;top:407.75px;width:5.00px;height:1.3px;background:#cccccc"></div>
<div class="a" style="left:37.00px;top:407.75px;width:6.00px;height:1.3px;background:#dcdcaa"></div>
<div class="a" style="left:44.00px;top:407.75px;width:6.00px;height:1.3px;background:#dcdcaa"></div>
<div class="a" style="left:51.00px;top:407.75px;width:7.00px;height:1.3px;background:#9cdcfe"></div>
<div class="a" style="left:59.00px;top:407.75px;width:3.00px;height:1.3px;background:#cccccc"></div>
<div class="a" style="left:8.00px;top:409.73px;width:2.00px;height:1.3px;background:#c586c0"></div>
<div class="a" style="left:11.00px;top:409.73px;width:4.00px;height:1.3px;background:#c586c0"></div>
<div class="a" style="left:16.00px;top:409.73px;width:2.00px;height:1.3px;background:#9cdcfe"></div>
<div class="a" style="left:19.00px;top:409.73px;width:4.00px;height:1.3px;background:#c586c0"></div>
<div class="a" style="left:24.00px;top:409.73px;width:2.00px;height:1.3px;background:#4ec9b0"></div>
<div class="a" style="left:27.00px;top:409.73px;width:8.00px;height:1.3px;background:#ce9178"></div>
<div class="a" style="left:0.00px;top:411.71px;width:1.00px;height:1.3px;background:#ffd700"></div>
<div class="a" style="left:0.00px;top:415.69px;width:6.00px;height:1.3px;background:#569cd6"></div>
<div class="a" style="left:7.00px;top:415.69px;width:4.00px;height:1.3px;background:#569cd6"></div>
<div class="a" style="left:12.00px;top:415.69px;width:18.00px;height:1.3px;background:#dcdcaa"></div>
<div class="a" style="left:34.00px;top:415.69px;width:5.00px;height:1.3px;background:#569cd6"></div>
<div class="a" style="left:40.00px;top:415.69px;width:6.00px;height:1.3px;background:#569cd6"></div>
<div class="a" style="left:47.00px;top:415.69px;width:7.00px;height:1.3px;background:#4ec9b0"></div>
<div class="a" style="left:0.00px;top:417.67px;width:1.00px;height:1.3px;background:#ffd700"></div>
<div class="a" style="left:4.00px;top:419.65px;width:4.00px;height:1.3px;background:#569cd6"></div>
<div class="a" style="left:9.00px;top:419.65px;width:7.00px;height:1.3px;background:#dcdcaa"></div>
<div class="a" style="left:17.00px;top:419.65px;width:7.00px;height:1.3px;background:#569cd6"></div>
<div class="a" style="left:25.00px;top:419.65px;width:6.00px;height:1.3px;background:#ce9178"></div>
<div class="a" style="left:32.00px;top:419.65px;width:4.00px;height:1.3px;background:#cccccc"></div>
<div class="a" style="left:37.00px;top:419.65px;width:4.00px;height:1.3px;background:#dcdcaa"></div>
<div class="a" style="left:42.00px;top:419.65px;width:8.00px;height:1.3px;background:#9cdcfe"></div>
<div class="a" style="left:8.00px;top:421.64px;width:2.00px;height:1.3px;background:#9cdcfe"></div>
<div class="a" style="left:11.00px;top:421.64px;width:6.00px;height:1.3px;background:#dcdcaa"></div>
<div class="a" style="left:18.00px;top:421.64px;width:5.00px;height:1.3px;background:#ce9178"></div>
<div class="a" style="left:24.00px;top:421.64px;width:6.00px;height:1.3px;background:#c586c0"></div>
<div class="a" style="left:31.00px;top:421.64px;width:5.00px;height:1.3px;background:#dcdcaa"></div>
<div class="a" style="left:37.00px;top:421.64px;width:3.00px;height:1.3px;background:#dcdcaa"></div>
<div class="a" style="left:41.00px;top:421.64px;width:5.00px;height:1.3px;background:#4ec9b0"></div>
<div class="a" style="left:47.00px;top:421.64px;width:2.00px;height:1.3px;background:#cccccc"></div>
<div class="a" style="left:8.00px;top:423.62px;width:6.00px;height:1.3px;background:#dcdcaa"></div>
<div class="a" style="left:15.00px;top:423.62px;width:3.00px;height:1.3px;background:#569cd6"></div>
<div class="a" style="left:19.00px;top:423.62px;width:5.00px;height:1.3px;background:#9cdcfe"></div>
<div class="a" style="left:25.00px;top:423.62px;width:7.00px;height:1.3px;background:#cccccc"></div>
<div class="a" style="left:33.00px;top:423.62px;width:2.00px;height:1.3px;background:#dcdcaa"></div>
<div class="a" style="left:36.00px;top:423.62px;width:6.00px;height:1.3px;background:#569cd6"></div>
<div class="a" style="left:43.00px;top:423.62px;width:2.00px;height:1.3px;background:#dcdcaa"></div>
<div class="a" style="left:46.00px;top:423.62px;width:4.00px;height:1.3px;background:#cccccc"></div>
<div class="a" style="left:51.00px;top:423.62px;width:4.00px;height:1.3px;background:#c586c0"></div>
<div class="a" style="left:4.00px;top:425.61px;width:5.00px;height:1.3px;background:#cccccc"></div>
<div class="a" style="left:10.00px;top:425.61px;width:3.00px;height:1.3px;background:#4ec9b0"></div>
<div class="a" style="left:14.00px;top:425.61px;width:6.00px;height:1.3px;background:#9cdcfe"></div>
<div class="a" style="left:21.00px;top:425.61px;width:6.00px;height:1.3px;background:#c586c0"></div>
<div class="a" style="left:28.00px;top:425.61px;width:8.00px;height:1.3px;background:#dcdcaa"></div>
<div class="a" style="left:37.00px;top:425.61px;width:6.00px;height:1.3px;background:#dcdcaa"></div>
<div class="a" style="left:4.00px;top:427.59px;width:5.00px;height:1.3px;background:#4ec9b0"></div>
<div class="a" style="left:10.00px;top:427.59px;width:8.00px;height:1.3px;background:#dcdcaa"></div>
<div class="a" style="left:19.00px;top:427.59px;width:2.00px;height:1.3px;background:#dcdcaa"></div>
<div class="a" style="left:22.00px;top:427.59px;width:4.00px;height:1.3px;background:#4ec9b0"></div>
<div class="a" style="left:27.00px;top:427.59px;width:8.00px;height:1.3px;background:#4ec9b0"></div>
<div class="a" style="left:4.00px;top:429.58px;width:5.00px;height:1.3px;background:#dcdcaa"></div>
<div class="a" style="left:10.00px;top:429.58px;width:4.00px;height:1.3px;background:#9cdcfe"></div>
<div class="a" style="left:15.00px;top:429.58px;width:3.00px;height:1.3px;background:#9cdcfe"></div>
<div class="a" style="left:19.00px;top:429.58px;width:5.00px;height:1.3px;background:#4ec9b0"></div>
<div class="a" style="left:25.00px;top:429.58px;width:4.00px;height:1.3px;background:#9cdcfe"></div>
<div class="a" style="left:30.00px;top:429.58px;width:3.00px;height:1.3px;background:#c586c0"></div>
<div class="a" style="left:34.00px;top:429.58px;width:2.00px;height:1.3px;background:#c586c0"></div>
<div class="a" style="left:4.00px;top:431.56px;width:3.00px;height:1.3px;background:#c586c0"></div>
<div class="a" style="left:8.00px;top:431.56px;width:6.00px;height:1.3px;background:#9cdcfe"></div>
<div class="a" style="left:15.00px;top:431.56px;width:5.00px;height:1.3px;background:#dcdcaa"></div>
<div class="a" style="left:21.00px;top:431.56px;width:4.00px;height:1.3px;background:#c586c0"></div>
<div class="a" style="left:26.00px;top:431.56px;width:2.00px;height:1.3px;background:#ce9178"></div>
<div class="a" style="left:29.00px;top:431.56px;width:8.00px;height:1.3px;background:#ce9178"></div>
<div class="a" style="left:38.00px;top:431.56px;width:7.00px;height:1.3px;background:#c586c0"></div>
<div class="a" style="left:46.00px;top:431.56px;width:3.00px;height:1.3px;background:#dcdcaa"></div>
<div class="a" style="left:50.00px;top:431.56px;width:6.00px;height:1.3px;background:#9cdcfe"></div>
<div class="a" style="left:0.00px;top:435.53px;width:1.00px;height:1.3px;background:#ffd700"></div>
<div class="a" style="left:0.00px;top:439.50px;width:6.00px;height:1.3px;background:#569cd6"></div>
<div class="a" style="left:7.00px;top:439.50px;width:4.00px;height:1.3px;background:#569cd6"></div>
<div class="a" style="left:12.00px;top:439.50px;width:20.00px;height:1.3px;background:#dcdcaa"></div>
<div class="a" style="left:34.00px;top:439.50px;width:5.00px;height:1.3px;background:#569cd6"></div>
<div class="a" style="left:40.00px;top:439.50px;width:6.00px;height:1.3px;background:#569cd6"></div>
<div class="a" style="left:47.00px;top:439.50px;width:14.00px;height:1.3px;background:#4ec9b0"></div>
<div class="a" style="left:0.00px;top:441.49px;width:1.00px;height:1.3px;background:#ffd700"></div>
<div class="a" style="left:4.00px;top:443.47px;width:6.00px;height:1.3px;background:#4ec9b0"></div>
<div class="a" style="left:11.00px;top:443.47px;width:3.00px;height:1.3px;background:#569cd6"></div>
<div class="a" style="left:15.00px;top:443.47px;width:2.00px;height:1.3px;background:#ce9178"></div>
<div class="a" style="left:18.00px;top:443.47px;width:5.00px;height:1.3px;background:#569cd6"></div>
<div class="a" style="left:24.00px;top:443.47px;width:4.00px;height:1.3px;background:#dcdcaa"></div>
<div class="a" style="left:29.00px;top:443.47px;width:6.00px;height:1.3px;background:#ce9178"></div>
<div class="a" style="left:4.00px;top:447.44px;width:4.00px;height:1.3px;background:#ce9178"></div>
<div class="a" style="left:9.00px;top:447.44px;width:4.00px;height:1.3px;background:#dcdcaa"></div>
<div class="a" style="left:14.00px;top:447.44px;width:2.00px;height:1.3px;background:#569cd6"></div>
<div class="a" style="left:17.00px;top:447.44px;width:7.00px;height:1.3px;background:#dcdcaa"></div>
<div class="a" style="left:25.00px;top:447.44px;width:8.00px;height:1.3px;background:#ce9178"></div>
<div class="a" style="left:34.00px;top:447.44px;width:2.00px;height:1.3px;background:#cccccc"></div>
<div class="a" style="left:37.00px;top:447.44px;width:2.00px;height:1.3px;background:#ce9178"></div>
<div class="a" style="left:40.00px;top:447.44px;width:2.00px;height:1.3px;background:#dcdcaa"></div>
<div class="a" style="left:43.00px;top:447.44px;width:8.00px;height:1.3px;background:#4ec9b0"></div>
<div class="a" style="left:52.00px;top:447.44px;width:8.00px;height:1.3px;background:#4ec9b0"></div>
<div class="a" style="left:61.00px;top:447.44px;width:4.00px;height:1.3px;background:#c586c0"></div>
<div class="a" style="left:4.00px;top:449.43px;width:2.00px;height:1.3px;background:#c586c0"></div>
<div class="a" style="left:7.00px;top:449.43px;width:3.00px;height:1.3px;background:#ce9178"></div>
<div class="a" style="left:11.00px;top:449.43px;width:7.00px;height:1.3px;background:#dcdcaa"></div>
<div class="a" style="left:19.00px;top:449.43px;width:8.00px;height:1.3px;background:#569cd6"></div>
<div class="a" style="left:28.00px;top:449.43px;width:8.00px;height:1.3px;background:#cccccc"></div>
<div class="a" style="left:0.00px;top:451.41px;width:1.00px;height:1.3px;background:#ffd700"></div>
<div class="a" style="left:0.00px;top:455.38px;width:6.00px;height:1.3px;background:#569cd6"></div>
<div class="a" style="left:7.00px;top:455.38px;width:4.00px;height:1.3px;background:#569cd6"></div>
<div class="a" style="left:12.00px;top:455.38px;width:11.00px;height:1.3px;background:#dcdcaa"></div>
<div class="a" style="left:34.00px;top:455.38px;width:5.00px;height:1.3px;background:#569cd6"></div>
<div class="a" style="left:40.00px;top:455.38px;width:6.00px;height:1.3px;background:#569cd6"></div>
<div class="a" style="left:47.00px;top:455.38px;width:6.00px;height:1.3px;background:#4ec9b0"></div>
<div class="a" style="left:0.00px;top:457.37px;width:1.00px;height:1.3px;background:#ffd700"></div>
<div class="a" style="left:12.00px;top:459.35px;width:6.00px;height:1.3px;background:#ce9178"></div>
<div class="a" style="left:19.00px;top:459.35px;width:5.00px;height:1.3px;background:#dcdcaa"></div>
<div class="a" style="left:25.00px;top:459.35px;width:4.00px;height:1.3px;background:#dcdcaa"></div>
<div class="a" style="left:30.00px;top:459.35px;width:2.00px;height:1.3px;background:#cccccc"></div>
<div class="a" style="left:33.00px;top:459.35px;width:2.00px;height:1.3px;background:#dcdcaa"></div>
<div class="a" style="left:36.00px;top:459.35px;width:3.00px;height:1.3px;background:#dcdcaa"></div>
<div class="a" style="left:40.00px;top:459.35px;width:7.00px;height:1.3px;background:#dcdcaa"></div>
<div class="a" style="left:48.00px;top:459.35px;width:3.00px;height:1.3px;background:#4ec9b0"></div>
<div class="a" style="left:52.00px;top:459.35px;width:4.00px;height:1.3px;background:#ce9178"></div>
<div class="a" style="left:57.00px;top:459.35px;width:6.00px;height:1.3px;background:#dcdcaa"></div>
<div class="a" style="left:64.00px;top:459.35px;width:2.00px;height:1.3px;background:#569cd6"></div>
<div class="a" style="left:67.00px;top:459.35px;width:6.00px;height:1.3px;background:#4ec9b0"></div>
<div class="a" style="left:4.00px;top:461.34px;width:4.00px;height:1.3px;background:#ce9178"></div>
<div class="a" style="left:9.00px;top:461.34px;width:8.00px;height:1.3px;background:#cccccc"></div>
<div class="a" style="left:18.00px;top:461.34px;width:5.00px;height:1.3px;background:#9cdcfe"></div>
<div class="a" style="left:24.00px;top:461.34px;width:7.00px;height:1.3px;background:#569cd6"></div>
<div class="a" style="left:4.00px;top:463.32px;width:2.00px;height:1.3px;background:#cccccc"></div>
<div class="a" style="left:7.00px;top:463.32px;width:2.00px;height:1.3px;background:#ce9178"></div>
<div class="a" style="left:10.00px;top:463.32px;width:3.00px;height:1.3px;background:#ce9178"></div>
<div class="a" style="left:14.00px;top:463.32px;width:5.00px;height:1.3px;background:#ce9178"></div>
<div class="a" style="left:20.00px;top:463.32px;width:4.00px;height:1.3px;background:#9cdcfe"></div>
<div class="a" style="left:25.00px;top:463.32px;width:3.00px;height:1.3px;background:#9cdcfe"></div>
<div class="a" style="left:12.00px;top:467.29px;width:6.00px;height:1.3px;background:#dcdcaa"></div>
<div class="a" style="left:19.00px;top:467.29px;width:3.00px;height:1.3px;background:#dcdcaa"></div>
<div class="a" style="left:23.00px;top:467.29px;width:7.00px;height:1.3px;background:#cccccc"></div>
<div class="a" style="left:31.00px;top:467.29px;width:7.00px;height:1.3px;background:#cccccc"></div>
<div class="a" style="left:39.00px;top:467.29px;width:2.00px;height:1.3px;background:#9cdcfe"></div>
<div class="a" style="left:42.00px;top:467.29px;width:6.00px;height:1.3px;background:#dcdcaa"></div>
<div class="a" style="left:49.00px;top:467.29px;width:8.00px;height:1.3px;background:#9cdcfe"></div>
<div class="a" style="left:58.00px;top:467.29px;width:7.00px;height:1.3px;background:#dcdcaa"></div>
<div class="a" style="left:12.00px;top:469.28px;width:6.00px;height:1.3px;background:#dcdcaa"></div>
<div class="a" style="left:19.00px;top:469.28px;width:6.00px;height:1.3px;background:#569cd6"></div>
<div class="a" style="left:26.00px;top:469.28px;width:4.00px;height:1.3px;background:#569cd6"></div>
<div class="a" style="left:31.00px;top:469.28px;width:6.00px;height:1.3px;background:#9cdcfe"></div>
<div class="a" style="left:38.00px;top:469.28px;width:6.00px;height:1.3px;background:#9cdcfe"></div>
<div class="a" style="left:4.00px;top:471.26px;width:4.00px;height:1.3px;background:#dcdcaa"></div>
<div class="a" style="left:9.00px;top:471.26px;width:8.00px;height:1.3px;background:#4ec9b0"></div>
<div class="a" style="left:18.00px;top:471.26px;width:3.00px;height:1.3px;background:#ce9178"></div>
<div class="a" style="left:22.00px;top:471.26px;width:5.00px;height:1.3px;background:#9cdcfe"></div>
<div class="a" style="left:28.00px;top:471.26px;width:6.00px;height:1.3px;background:#ce9178"></div>
<div class="a" style="left:35.00px;top:471.26px;width:7.00px;height:1.3px;background:#dcdcaa"></div>
<div class="a" style="left:4.00px;top:473.25px;width:3.00px;height:1.3px;background:#cccccc"></div>
<div class="a" style="left:8.00px;top:473.25px;width:6.00px;height:1.3px;background:#569cd6"></div>
<div class="a" style="left:15.00px;top:473.25px;width:3.00px;height:1.3px;background:#cccccc"></div>
<div class="a" style="left:19.00px;top:473.25px;width:7.00px;height:1.3px;background:#9cdcfe"></div>
<div class="a" style="left:27.00px;top:473.25px;width:4.00px;height:1.3px;background:#c586c0"></div>
<div class="a" style="left:32.00px;top:473.25px;width:8.00px;height:1.3px;background:#cccccc"></div>
<div class="a" style="left:41.00px;top:473.25px;width:2.00px;height:1.3px;background:#4ec9b0"></div>
<div class="a" style="left:4.00px;top:475.24px;width:3.00px;height:1.3px;background:#569cd6"></div>
<div class="a" style="left:8.00px;top:475.24px;width:6.00px;height:1.3px;background:#ce9178"></div>
<div class="a" style="left:15.00px;top:475.24px;width:4.00px;height:1.3px;background:#c586c0"></div>
<div class="a" style="left:20.00px;top:475.24px;width:5.00px;height:1.3px;background:#cccccc"></div>
<div class="a" style="left:26.00px;top:475.24px;width:2.00px;height:1.3px;background:#dcdcaa"></div>
<div class="a" style="left:29.00px;top:475.24px;width:5.00px;height:1.3px;background:#dcdcaa"></div>
<div class="a" style="left:35.00px;top:475.24px;width:3.00px;height:1.3px;background:#c586c0"></div>
<div class="a" style="left:39.00px;top:475.24px;width:7.00px;height:1.3px;background:#dcdcaa"></div>
<div class="a" style="left:47.00px;top:475.24px;width:6.00px;height:1.3px;background:#569cd6"></div>
<div class="a" style="left:8.00px;top:477.22px;width:6.00px;height:1.3px;background:#569cd6"></div>
<div class="a" style="left:15.00px;top:477.22px;width:3.00px;height:1.3px;background:#9cdcfe"></div>
<div class="a" style="left:19.00px;top:477.22px;width:8.00px;height:1.3px;background:#cccccc"></div>
<div class="a" style="left:28.00px;top:477.22px;width:4.00px;height:1.3px;background:#9cdcfe"></div>
<div class="a" style="left:33.00px;top:477.22px;width:7.00px;height:1.3px;background:#9cdcfe"></div>
<div class="a" style="left:41.00px;top:477.22px;width:4.00px;height:1.3px;background:#c586c0"></div>
<div class="a" style="left:46.00px;top:477.22px;width:6.00px;height:1.3px;background:#9cdcfe"></div>
<div class="a" style="left:53.00px;top:477.22px;width:5.00px;height:1.3px;background:#ce9178"></div>
<div class="a" style="left:0.00px;top:479.20px;width:1.00px;height:1.3px;background:#ffd700"></div>
<div class="a" style="left:0.00px;top:483.18px;width:6.00px;height:1.3px;background:#569cd6"></div>
<div class="a" style="left:7.00px;top:483.18px;width:4.00px;height:1.3px;background:#569cd6"></div>
<div class="a" style="left:12.00px;top:483.18px;width:17.00px;height:1.3px;background:#dcdcaa"></div>
<div class="a" style="left:34.00px;top:483.18px;width:5.00px;height:1.3px;background:#569cd6"></div>
<div class="a" style="left:40.00px;top:483.18px;width:6.00px;height:1.3px;background:#569cd6"></div>
<div class="a" style="left:47.00px;top:483.18px;width:6.00px;height:1.3px;background:#4ec9b0"></div>
<div class="a" style="left:0.00px;top:485.16px;width:1.00px;height:1.3px;background:#ffd700"></div>
<div class="a" style="left:4.00px;top:487.14px;width:5.00px;height:1.3px;background:#dcdcaa"></div>
<div class="a" style="left:10.00px;top:487.14px;width:6.00px;height:1.3px;background:#9cdcfe"></div>
<div class="a" style="left:17.00px;top:487.14px;width:8.00px;height:1.3px;background:#dcdcaa"></div>
<div class="a" style="left:26.00px;top:487.14px;width:5.00px;height:1.3px;background:#dcdcaa"></div>
<div class="a" style="left:32.00px;top:487.14px;width:5.00px;height:1.3px;background:#ce9178"></div>
<div class="a" style="left:4.00px;top:489.13px;width:7.00px;height:1.3px;background:#ce9178"></div>
<div class="a" style="left:12.00px;top:489.13px;width:3.00px;height:1.3px;background:#dcdcaa"></div>
<div class="a" style="left:16.00px;top:489.13px;width:2.00px;height:1.3px;background:#dcdcaa"></div>
<div class="a" style="left:19.00px;top:489.13px;width:7.00px;height:1.3px;background:#dcdcaa"></div>
<div class="a" style="left:27.00px;top:489.13px;width:6.00px;height:1.3px;background:#569cd6"></div>
<div class="a" style="left:34.00px;top:489.13px;width:8.00px;height:1.3px;background:#9cdcfe"></div>
<div class="a" style="left:43.00px;top:489.13px;width:2.00px;height:1.3px;background:#dcdcaa"></div>
<div class="a" style="left:46.00px;top:489.13px;width:7.00px;height:1.3px;background:#9cdcfe"></div>
<div class="a" style="left:54.00px;top:489.13px;width:2.00px;height:1.3px;background:#569cd6"></div>
<div class="a" style="left:4.00px;top:491.12px;width:5.00px;height:1.3px;background:#9cdcfe"></div>
<div class="a" style="left:10.00px;top:491.12px;width:2.00px;height:1.3px;background:#569cd6"></div>
<div class="a" style="left:13.00px;top:491.12px;width:4.00px;height:1.3px;background:#c586c0"></div>
<div class="a" style="left:18.00px;top:491.12px;width:6.00px;height:1.3px;background:#9cdcfe"></div>
<div class="a" style="left:25.00px;top:491.12px;width:7.00px;height:1.3px;background:#4ec9b0"></div>
<div class="a" style="left:33.00px;top:491.12px;width:7.00px;height:1.3px;background:#ce9178"></div>
<div class="a" style="left:8.00px;top:493.10px;width:5.00px;height:1.3px;background:#9cdcfe"></div>
<div class="a" style="left:14.00px;top:493.10px;width:4.00px;height:1.3px;background:#569cd6"></div>
<div class="a" style="left:19.00px;top:493.10px;width:8.00px;height:1.3px;background:#4ec9b0"></div>
<div class="a" style="left:28.00px;top:493.10px;width:2.00px;height:1.3px;background:#dcdcaa"></div>
<div class="a" style="left:31.00px;top:493.10px;width:2.00px;height:1.3px;background:#ce9178"></div>
<div class="a" style="left:34.00px;top:493.10px;width:3.00px;height:1.3px;background:#9cdcfe"></div>
<div class="a" style="left:38.00px;top:493.10px;width:4.00px;height:1.3px;background:#cccccc"></div>
<div class="a" style="left:43.00px;top:493.10px;width:4.00px;height:1.3px;background:#ce9178"></div>
<div class="a" style="left:4.00px;top:495.08px;width:7.00px;height:1.3px;background:#dcdcaa"></div>
<div class="a" style="left:12.00px;top:495.08px;width:6.00px;height:1.3px;background:#dcdcaa"></div>
<div class="a" style="left:19.00px;top:495.08px;width:5.00px;height:1.3px;background:#ce9178"></div>
<div class="a" style="left:25.00px;top:495.08px;width:4.00px;height:1.3px;background:#c586c0"></div>
<div class="a" style="left:30.00px;top:495.08px;width:4.00px;height:1.3px;background:#ce9178"></div>
<div class="a" style="left:35.00px;top:495.08px;width:4.00px;height:1.3px;background:#c586c0"></div>
<div class="a" style="left:4.00px;top:503.02px;width:8.00px;height:1.3px;background:#ce9178"></div>
<div class="a" style="left:13.00px;top:503.02px;width:4.00px;height:1.3px;background:#dcdcaa"></div>
<div class="a" style="left:18.00px;top:503.02px;width:7.00px;height:1.3px;background:#9cdcfe"></div>
<div class="a" style="left:26.00px;top:503.02px;width:5.00px;height:1.3px;background:#cccccc"></div>
<div class="a" style="left:32.00px;top:503.02px;width:2.00px;height:1.3px;background:#9cdcfe"></div>
<div class="a" style="left:4.00px;top:505.01px;width:3.00px;height:1.3px;background:#dcdcaa"></div>
<div class="a" style="left:8.00px;top:505.01px;width:2.00px;height:1.3px;background:#dcdcaa"></div>
<div class="a" style="left:11.00px;top:505.01px;width:4.00px;height:1.3px;background:#9cdcfe"></div>
<div class="a" style="left:4.00px;top:507.00px;width:4.00px;height:1.3px;background:#9cdcfe"></div>
<div class="a" style="left:9.00px;top:507.00px;width:2.00px;height:1.3px;background:#c586c0"></div>
<div class="a" style="left:12.00px;top:507.00px;width:7.00px;height:1.3px;background:#c586c0"></div>
<div class="a" style="left:20.00px;top:507.00px;width:5.00px;height:1.3px;background:#569cd6"></div>
<div class="a" style="left:26.00px;top:507.00px;width:2.00px;height:1.3px;background:#cccccc"></div>
<div class="a" style="left:29.00px;top:507.00px;width:8.00px;height:1.3px;background:#9cdcfe"></div>
<div class="a" style="left:12.00px;top:508.98px;width:8.00px;height:1.3px;background:#dcdcaa"></div>
<div class="a" style="left:21.00px;top:508.98px;width:2.00px;height:1.3px;background:#4ec9b0"></div>
<div class="a" style="left:24.00px;top:508.98px;width:4.00px;height:1.3px;background:#9cdcfe"></div>
<div class="a" style="left:0.00px;top:510.96px;width:1.00px;height:1.3px;background:#ffd700"></div>
<div class="a" style="left:0.00px;top:514.93px;width:6.00px;height:1.3px;background:#569cd6"></div>
<div class="a" style="left:7.00px;top:514.93px;width:4.00px;height:1.3px;background:#569cd6"></div>
<div class="a" style="left:12.00px;top:514.93px;width:10.00px;height:1.3px;background:#dcdcaa"></div>
<div class="a" style="left:34.00px;top:514.93px;width:5.00px;height:1.3px;background:#569cd6"></div>
<div class="a" style="left:40.00px;top:514.93px;width:6.00px;height:1.3px;background:#569cd6"></div>
<div class="a" style="left:47.00px;top:514.93px;width:8.00px;height:1.3px;background:#4ec9b0"></div>
<div class="a" style="left:0.00px;top:516.92px;width:1.00px;height:1.3px;background:#ffd700"></div>
<div class="a" style="left:8.00px;top:518.90px;width:4.00px;height:1.3px;background:#dcdcaa"></div>
<div class="a" style="left:13.00px;top:518.90px;width:5.00px;height:1.3px;background:#c586c0"></div>
<div class="a" style="left:19.00px;top:518.90px;width:6.00px;height:1.3px;background:#569cd6"></div>
<div class="a" style="left:26.00px;top:518.90px;width:5.00px;height:1.3px;background:#dcdcaa"></div>
<div class="a" style="left:32.00px;top:518.90px;width:4.00px;height:1.3px;background:#dcdcaa"></div>
<div class="a" style="left:4.00px;top:522.88px;width:5.00px;height:1.3px;background:#dcdcaa"></div>
<div class="a" style="left:10.00px;top:522.88px;width:2.00px;height:1.3px;background:#ce9178"></div>
<div class="a" style="left:13.00px;top:522.88px;width:7.00px;height:1.3px;background:#9cdcfe"></div>
<div class="a" style="left:21.00px;top:522.88px;width:6.00px;height:1.3px;background:#c586c0"></div>
<div class="a" style="left:12.00px;top:524.86px;width:7.00px;height:1.3px;background:#dcdcaa"></div>
<div class="a" style="left:20.00px;top:524.86px;width:6.00px;height:1.3px;background:#9cdcfe"></div>
<div class="a" style="left:27.00px;top:524.86px;width:4.00px;height:1.3px;background:#ce9178"></div>
<div class="a" style="left:32.00px;top:524.86px;width:3.00px;height:1.3px;background:#569cd6"></div>
<div class="a" style="left:36.00px;top:524.86px;width:2.00px;height:1.3px;background:#dcdcaa"></div>
<div class="a" style="left:39.00px;top:524.86px;width:6.00px;height:1.3px;background:#c586c0"></div>
<div class="a" style="left:46.00px;top:524.86px;width:5.00px;height:1.3px;background:#569cd6"></div>
<div class="a" style="left:52.00px;top:524.86px;width:7.00px;height:1.3px;background:#dcdcaa"></div>
<div class="a" style="left:60.00px;top:524.86px;width:4.00px;height:1.3px;background:#9cdcfe"></div>
<div class="a" style="left:4.00px;top:526.85px;width:4.00px;height:1.3px;background:#ce9178"></div>
<div class="a" style="left:9.00px;top:526.85px;width:3.00px;height:1.3px;background:#dcdcaa"></div>
<div class="a" style="left:13.00px;top:526.85px;width:5.00px;height:1.3px;background:#cccccc"></div>
<div class="a" style="left:19.00px;top:526.85px;width:2.00px;height:1.3px;background:#cccccc"></div>
<div class="a" style="left:22.00px;top:526.85px;width:2.00px;height:1.3px;background:#9cdcfe"></div>
<div class="a" style="left:25.00px;top:526.85px;width:4.00px;height:1.3px;background:#c586c0"></div>
<div class="a" style="left:30.00px;top:526.85px;width:2.00px;height:1.3px;background:#dcdcaa"></div>
<div class="a" style="left:33.00px;top:526.85px;width:2.00px;height:1.3px;background:#9cdcfe"></div>
<div class="a" style="left:36.00px;top:526.85px;width:2.00px;height:1.3px;background:#ce9178"></div>
<div class="a" style="left:39.00px;top:526.85px;width:5.00px;height:1.3px;background:#9cdcfe"></div>
<div class="a" style="left:8.00px;top:528.83px;width:3.00px;height:1.3px;background:#4ec9b0"></div>
<div class="a" style="left:12.00px;top:528.83px;width:3.00px;height:1.3px;background:#dcdcaa"></div>
<div class="a" style="left:16.00px;top:528.83px;width:8.00px;height:1.3px;background:#9cdcfe"></div>
<div class="a" style="left:4.00px;top:530.82px;width:7.00px;height:1.3px;background:#dcdcaa"></div>
<div class="a" style="left:12.00px;top:530.82px;width:6.00px;height:1.3px;background:#9cdcfe"></div>
<div class="a" style="left:19.00px;top:530.82px;width:5.00px;height:1.3px;background:#9cdcfe"></div>
<div class="a" style="left:25.00px;top:530.82px;width:8.00px;height:1.3px;background:#4ec9b0"></div>
<div class="a" style="left:34.00px;top:530.82px;width:5.00px;height:1.3px;background:#dcdcaa"></div>
<div class="a" style="left:4.00px;top:532.80px;width:5.00px;height:1.3px;background:#4ec9b0"></div>
<div class="a" style="left:10.00px;top:532.80px;width:7.00px;height:1.3px;background:#4ec9b0"></div>
<div class="a" style="left:12.00px;top:534.78px;width:2.00px;height:1.3px;background:#9cdcfe"></div>
<div class="a" style="left:15.00px;top:534.78px;width:4.00px;height:1.3px;background:#4ec9b0"></div>
<div class="a" style="left:20.00px;top:534.78px;width:4.00px;height:1.3px;background:#9cdcfe"></div>
<div class="a" style="left:25.00px;top:534.78px;width:2.00px;height:1.3px;background:#4ec9b0"></div>
<div class="a" style="left:28.00px;top:534.78px;width:4.00px;height:1.3px;background:#4ec9b0"></div>
<div class="a" style="left:33.00px;top:534.78px;width:8.00px;height:1.3px;background:#9cdcfe"></div>
<div class="a" style="left:8.00px;top:536.77px;width:5.00px;height:1.3px;background:#4ec9b0"></div>
<div class="a" style="left:14.00px;top:536.77px;width:6.00px;height:1.3px;background:#cccccc"></div>
<div class="a" style="left:21.00px;top:536.77px;width:5.00px;height:1.3px;background:#c586c0"></div>
<div class="a" style="left:27.00px;top:536.77px;width:8.00px;height:1.3px;background:#ce9178"></div>
<div class="a" style="left:36.00px;top:536.77px;width:6.00px;height:1.3px;background:#9cdcfe"></div>
<div class="a" style="left:43.00px;top:536.77px;width:8.00px;height:1.3px;background:#569cd6"></div>
<div class="a" style="left:0.00px;top:538.75px;width:1.00px;height:1.3px;background:#ffd700"></div>
<div class="a" style="left:0.00px;top:542.73px;width:6.00px;height:1.3px;background:#569cd6"></div>
<div class="a" style="left:7.00px;top:542.73px;width:4.00px;height:1.3px;background:#569cd6"></div>
<div class="a" style="left:12.00px;top:542.73px;width:8.00px;height:1.3px;background:#dcdcaa"></div>
<div class="a" style="left:34.00px;top:542.73px;width:5.00px;height:1.3px;background:#569cd6"></div>
<div class="a" style="left:40.00px;top:542.73px;width:6.00px;height:1.3px;background:#569cd6"></div>
<div class="a" style="left:47.00px;top:542.73px;width:7.00px;height:1.3px;background:#4ec9b0"></div>
<div class="a" style="left:0.00px;top:544.71px;width:1.00px;height:1.3px;background:#ffd700"></div>
<div class="a" style="left:12.00px;top:546.69px;width:8.00px;height:1.3px;background:#9cdcfe"></div>
<div class="a" style="left:21.00px;top:546.69px;width:6.00px;height:1.3px;background:#dcdcaa"></div>
<div class="a" style="left:28.00px;top:546.69px;width:7.00px;height:1.3px;background:#dcdcaa"></div>
<div class="a" style="left:36.00px;top:546.69px;width:5.00px;height:1.3px;background:#ce9178"></div>
<div class="a" style="left:42.00px;top:546.69px;width:4.00px;height:1.3px;background:#ce9178"></div>
<div class="a" style="left:8.00px;top:548.68px;width:5.00px;height:1.3px;background:#4ec9b0"></div>
<div class="a" style="left:14.00px;top:548.68px;width:3.00px;height:1.3px;background:#4ec9b0"></div>
<div class="a" style="left:4.00px;top:550.66px;width:8.00px;height:1.3px;background:#cccccc"></div>
<div class="a" style="left:13.00px;top:550.66px;width:5.00px;height:1.3px;background:#4ec9b0"></div>
<div class="a" style="left:19.00px;top:550.66px;width:3.00px;height:1.3px;background:#ce9178"></div>
<div class="a" style="left:23.00px;top:550.66px;width:2.00px;height:1.3px;background:#dcdcaa"></div>
<div class="a" style="left:26.00px;top:550.66px;width:4.00px;height:1.3px;background:#ce9178"></div>
<div class="a" style="left:4.00px;top:554.63px;width:4.00px;height:1.3px;background:#9cdcfe"></div>
<div class="a" style="left:9.00px;top:554.63px;width:6.00px;height:1.3px;background:#4ec9b0"></div>
<div class="a" style="left:16.00px;top:554.63px;width:6.00px;height:1.3px;background:#dcdcaa"></div>
<div class="a" style="left:4.00px;top:556.62px;width:3.00px;height:1.3px;background:#c586c0"></div>
<div class="a" style="left:8.00px;top:556.62px;width:5.00px;height:1.3px;background:#cccccc"></div>
<div class="a" style="left:14.00px;top:556.62px;width:7.00px;height:1.3px;background:#569cd6"></div>
<div class="a" style="left:22.00px;top:556.62px;width:8.00px;height:1.3px;background:#ce9178"></div>
<div class="a" style="left:31.00px;top:556.62px;width:2.00px;height:1.3px;background:#c586c0"></div>
<div class="a" style="left:34.00px;top:556.62px;width:8.00px;height:1.3px;background:#9cdcfe"></div>
<div class="a" style="left:12.00px;top:558.61px;width:6.00px;height:1.3px;background:#4ec9b0"></div>
<div class="a" style="left:19.00px;top:558.61px;width:7.00px;height:1.3px;background:#cccccc"></div>
<div class="a" style="left:27.00px;top:558.61px;width:8.00px;height:1.3px;background:#569cd6"></div>
<div class="a" style="left:36.00px;top:558.61px;width:8.00px;height:1.3px;background:#569cd6"></div>
<div class="a" style="left:45.00px;top:558.61px;width:8.00px;height:1.3px;background:#9cdcfe"></div>
<div class="a" style="left:54.00px;top:558.61px;width:4.00px;height:1.3px;background:#c586c0"></div>
<div class="a" style="left:59.00px;top:558.61px;width:7.00px;height:1.3px;background:#dcdcaa"></div>
<div class="a" style="left:4.00px;top:560.59px;width:8.00px;height:1.3px;background:#9cdcfe"></div>
<div class="a" style="left:13.00px;top:560.59px;width:7.00px;height:1.3px;background:#4ec9b0"></div>
<div class="a" style="left:21.00px;top:560.59px;width:4.00px;height:1.3px;background:#ce9178"></div>
<div class="a" style="left:26.00px;top:560.59px;width:6.00px;height:1.3px;background:#c586c0"></div>
<div class="a" style="left:33.00px;top:560.59px;width:7.00px;height:1.3px;background:#9cdcfe"></div>
<div class="a" style="left:41.00px;top:560.59px;width:3.00px;height:1.3px;background:#dcdcaa"></div>
<div class="a" style="left:45.00px;top:560.59px;width:4.00px;height:1.3px;background:#c586c0"></div>
<div class="a" style="left:50.00px;top:560.59px;width:7.00px;height:1.3px;background:#dcdcaa"></div>
<div class="a" style="left:0.00px;top:562.58px;width:1.00px;height:1.3px;background:#ffd700"></div>
<div class="a" style="left:0.00px;top:566.54px;width:6.00px;height:1.3px;background:#569cd6"></div>
<div class="a" style="left:7.00px;top:566.54px;width:4.00px;height:1.3px;background:#569cd6"></div>
<div class="a" style="left:12.00px;top:566.54px;width:19.00px;height:1.3px;background:#dcdcaa"></div>
<div class="a" style="left:34.00px;top:566.54px;width:5.00px;height:1.3px;background:#569cd6"></div>
<div class="a" style="left:40.00px;top:566.54px;width:6.00px;height:1.3px;background:#569cd6"></div>
<div class="a" style="left:47.00px;top:566.54px;width:10.00px;height:1.3px;background:#4ec9b0"></div>
<div class="a" style="left:0.00px;top:568.53px;width:1.00px;height:1.3px;background:#ffd700"></div>
<div class="a" style="left:4.00px;top:570.51px;width:7.00px;height:1.3px;background:#c586c0"></div>
<div class="a" style="left:12.00px;top:570.51px;width:5.00px;height:1.3px;background:#9cdcfe"></div>
<div class="a" style="left:18.00px;top:570.51px;width:8.00px;height:1.3px;background:#ce9178"></div>
<div class="a" style="left:27.00px;top:570.51px;width:4.00px;height:1.3px;background:#dcdcaa"></div>
<div class="a" style="left:4.00px;top:572.50px;width:2.00px;height:1.3px;background:#c586c0"></div>
<div class="a" style="left:7.00px;top:572.50px;width:7.00px;height:1.3px;background:#dcdcaa"></div>
<div class="a" style="left:15.00px;top:572.50px;width:8.00px;height:1.3px;background:#4ec9b0"></div>
<div class="a" style="left:24.00px;top:572.50px;width:3.00px;height:1.3px;background:#dcdcaa"></div>
<div class="a" style="left:28.00px;top:572.50px;width:5.00px;height:1.3px;background:#569cd6"></div>
<div class="a" style="left:34.00px;top:572.50px;width:5.00px;height:1.3px;background:#4ec9b0"></div>
<div class="a" style="left:40.00px;top:572.50px;width:4.00px;height:1.3px;background:#cccccc"></div>
<div class="a" style="left:45.00px;top:572.50px;width:2.00px;height:1.3px;background:#9cdcfe"></div>
<div class="a" style="left:48.00px;top:572.50px;width:8.00px;height:1.3px;background:#9cdcfe"></div>
<div class="a" style="left:8.00px;top:574.49px;width:2.00px;height:1.3px;background:#dcdcaa"></div>
<div class="a" style="left:11.00px;top:574.49px;width:3.00px;height:1.3px;background:#dcdcaa"></div>
<div class="a" style="left:15.00px;top:574.49px;width:4.00px;height:1.3px;background:#cccccc"></div>
<div class="a" style="left:20.00px;top:574.49px;width:3.00px;height:1.3px;background:#ce9178"></div>
<div class="a" style="left:24.00px;top:574.49px;width:8.00px;height:1.3px;background:#569cd6"></div>
<div class="a" style="left:33.00px;top:574.49px;width:5.00px;height:1.3px;background:#dcdcaa"></div>
<div class="a" style="left:39.00px;top:574.49px;width:3.00px;height:1.3px;background:#dcdcaa"></div>
<div class="a" style="left:43.00px;top:574.49px;width:8.00px;height:1.3px;background:#dcdcaa"></div>
<div class="a" style="left:52.00px;top:574.49px;width:3.00px;height:1.3px;background:#dcdcaa"></div>
<div class="a" style="left:56.00px;top:574.49px;width:7.00px;height:1.3px;background:#dcdcaa"></div>
<div class="a" style="left:4.00px;top:576.47px;width:6.00px;height:1.3px;background:#9cdcfe"></div>
<div class="a" style="left:11.00px;top:576.47px;width:8.00px;height:1.3px;background:#ce9178"></div>
<div class="a" style="left:12.00px;top:578.45px;width:6.00px;height:1.3px;background:#c586c0"></div>
<div class="a" style="left:19.00px;top:578.45px;width:6.00px;height:1.3px;background:#dcdcaa"></div>
<div class="a" style="left:26.00px;top:578.45px;width:4.00px;height:1.3px;background:#dcdcaa"></div>
<div class="a" style="left:31.00px;top:578.45px;width:3.00px;height:1.3px;background:#9cdcfe"></div>
<div class="a" style="left:8.00px;top:580.44px;width:7.00px;height:1.3px;background:#dcdcaa"></div>
<div class="a" style="left:16.00px;top:580.44px;width:2.00px;height:1.3px;background:#9cdcfe"></div>
<div class="a" style="left:19.00px;top:580.44px;width:7.00px;height:1.3px;background:#c586c0"></div>
<div class="a" style="left:27.00px;top:580.44px;width:7.00px;height:1.3px;background:#cccccc"></div>
<div class="a" style="left:35.00px;top:580.44px;width:3.00px;height:1.3px;background:#569cd6"></div>
<div class="a" style="left:4.00px;top:582.42px;width:3.00px;height:1.3px;background:#4ec9b0"></div>
<div class="a" style="left:8.00px;top:582.42px;width:6.00px;height:1.3px;background:#dcdcaa"></div>
<div class="a" style="left:15.00px;top:582.42px;width:7.00px;height:1.3px;background:#dcdcaa"></div>
<div class="a" style="left:23.00px;top:582.42px;width:5.00px;height:1.3px;background:#c586c0"></div>
<div class="a" style="left:29.00px;top:582.42px;width:8.00px;height:1.3px;background:#ce9178"></div>
<div class="a" style="left:4.00px;top:584.41px;width:8.00px;height:1.3px;background:#c586c0"></div>
<div class="a" style="left:13.00px;top:584.41px;width:2.00px;height:1.3px;background:#569cd6"></div>
<div class="a" style="left:16.00px;top:584.41px;width:6.00px;height:1.3px;background:#569cd6"></div>
<div class="a" style="left:23.00px;top:584.41px;width:3.00px;height:1.3px;background:#9cdcfe"></div>
<div class="a" style="left:27.00px;top:584.41px;width:5.00px;height:1.3px;background:#9cdcfe"></div>
<div class="a" style="left:33.00px;top:584.41px;width:4.00px;height:1.3px;background:#4ec9b0"></div>
<div class="a" style="left:38.00px;top:584.41px;width:7.00px;height:1.3px;background:#c586c0"></div>
<div class="a" style="left:0.00px;top:586.39px;width:1.00px;height:1.3px;background:#ffd700"></div>
<div class="a" style="left:0.00px;top:590.37px;width:6.00px;height:1.3px;background:#569cd6"></div>
<div class="a" style="left:7.00px;top:590.37px;width:4.00px;height:1.3px;background:#569cd6"></div>
<div class="a" style="left:12.00px;top:590.37px;width:13.00px;height:1.3px;background:#dcdcaa"></div>
<div class="a" style="left:34.00px;top:590.37px;width:5.00px;height:1.3px;background:#569cd6"></div>
<div class="a" style="left:40.00px;top:590.37px;width:6.00px;height:1.3px;background:#569cd6"></div>
<div class="a" style="left:47.00px;top:590.37px;width:10.00px;height:1.3px;background:#4ec9b0"></div>
<div class="a" style="left:0.00px;top:592.35px;width:1.00px;height:1.3px;background:#ffd700"></div>
<div class="a" style="left:4.00px;top:594.34px;width:7.00px;height:1.3px;background:#dcdcaa"></div>
<div class="a" style="left:12.00px;top:594.34px;width:2.00px;height:1.3px;background:#9cdcfe"></div>
<div class="a" style="left:15.00px;top:594.34px;width:3.00px;height:1.3px;background:#dcdcaa"></div>
<div class="a" style="left:8.00px;top:596.32px;width:8.00px;height:1.3px;background:#4ec9b0"></div>
<div class="a" style="left:17.00px;top:596.32px;width:5.00px;height:1.3px;background:#ce9178"></div>
<div class="a" style="left:23.00px;top:596.32px;width:6.00px;height:1.3px;background:#4ec9b0"></div>
<div class="a" style="left:30.00px;top:596.32px;width:3.00px;height:1.3px;background:#ce9178"></div>
<div class="a" style="left:34.00px;top:596.32px;width:2.00px;height:1.3px;background:#cccccc"></div>
<div class="a" style="left:37.00px;top:596.32px;width:4.00px;height:1.3px;background:#569cd6"></div>
<div class="a" style="left:42.00px;top:596.32px;width:7.00px;height:1.3px;background:#c586c0"></div>
<div class="a" style="left:8.00px;top:598.30px;width:3.00px;height:1.3px;background:#4ec9b0"></div>
<div class="a" style="left:12.00px;top:598.30px;width:3.00px;height:1.3px;background:#9cdcfe"></div>
<div class="a" style="left:16.00px;top:598.30px;width:2.00px;height:1.3px;background:#ce9178"></div>
<div class="a" style="left:19.00px;top:598.30px;width:5.00px;height:1.3px;background:#ce9178"></div>
<div class="a" style="left:25.00px;top:598.30px;width:2.00px;height:1.3px;background:#569cd6"></div>
<div class="a" style="left:28.00px;top:598.30px;width:7.00px;height:1.3px;background:#4ec9b0"></div>
<div class="a" style="left:36.00px;top:598.30px;width:8.00px;height:1.3px;background:#cccccc"></div>
<div class="a" style="left:8.00px;top:600.29px;width:5.00px;height:1.3px;background:#9cdcfe"></div>
<div class="a" style="left:14.00px;top:600.29px;width:2.00px;height:1.3px;background:#4ec9b0"></div>
<div class="a" style="left:17.00px;top:600.29px;width:3.00px;height:1.3px;background:#9cdcfe"></div>
<div class="a" style="left:0.00px;top:602.27px;width:1.00px;height:1.3px;background:#ffd700"></div>
<div class="a" style="left:0.00px;top:606.25px;width:6.00px;height:1.3px;background:#569cd6"></div>
<div class="a" style="left:7.00px;top:606.25px;width:4.00px;height:1.3px;background:#569cd6"></div>
<div class="a" style="left:12.00px;top:606.25px;width:20.00px;height:1.3px;background:#dcdcaa"></div>
<div class="a" style="left:34.00px;top:606.25px;width:5.00px;height:1.3px;background:#569cd6"></div>
<div class="a" style="left:40.00px;top:606.25px;width:6.00px;height:1.3px;background:#569cd6"></div>
<div class="a" style="left:47.00px;top:606.25px;width:7.00px;height:1.3px;background:#4ec9b0"></div>
<div class="a" style="left:0.00px;top:608.23px;width:1.00px;height:1.3px;background:#ffd700"></div>
<div class="a" style="left:8.00px;top:610.22px;width:8.00px;height:1.3px;background:#dcdcaa"></div>
<div class="a" style="left:17.00px;top:610.22px;width:8.00px;height:1.3px;background:#dcdcaa"></div>
<div class="a" style="left:26.00px;top:610.22px;width:5.00px;height:1.3px;background:#569cd6"></div>
<div class="a" style="left:32.00px;top:610.22px;width:6.00px;height:1.3px;background:#ce9178"></div>
<div class="a" style="left:4.00px;top:612.20px;width:3.00px;height:1.3px;background:#c586c0"></div>
<div class="a" style="left:8.00px;top:612.20px;width:4.00px;height:1.3px;background:#dcdcaa"></div>
<div class="a" style="left:13.00px;top:612.20px;width:2.00px;height:1.3px;background:#dcdcaa"></div>
<div class="a" style="left:16.00px;top:612.20px;width:7.00px;height:1.3px;background:#ce9178"></div>
<div class="a" style="left:24.00px;top:612.20px;width:5.00px;height:1.3px;background:#4ec9b0"></div>
<div class="a" style="left:30.00px;top:612.20px;width:4.00px;height:1.3px;background:#ce9178"></div>
<div class="a" style="left:35.00px;top:612.20px;width:4.00px;height:1.3px;background:#dcdcaa"></div>
<div class="a" style="left:40.00px;top:612.20px;width:6.00px;height:1.3px;background:#ce9178"></div>
<div class="a" style="left:47.00px;top:612.20px;width:3.00px;height:1.3px;background:#ce9178"></div>
<div class="a" style="left:51.00px;top:612.20px;width:3.00px;height:1.3px;background:#ce9178"></div>
<div class="a" style="left:55.00px;top:612.20px;width:2.00px;height:1.3px;background:#c586c0"></div>
<div class="a" style="left:4.00px;top:614.18px;width:4.00px;height:1.3px;background:#dcdcaa"></div>
<div class="a" style="left:9.00px;top:614.18px;width:3.00px;height:1.3px;background:#569cd6"></div>
<div class="a" style="left:13.00px;top:614.18px;width:3.00px;height:1.3px;background:#569cd6"></div>
<div class="a" style="left:17.00px;top:614.18px;width:6.00px;height:1.3px;background:#c586c0"></div>
<div class="a" style="left:24.00px;top:614.18px;width:3.00px;height:1.3px;background:#9cdcfe"></div>
<div class="a" style="left:28.00px;top:614.18px;width:5.00px;height:1.3px;background:#cccccc"></div>
<div class="a" style="left:34.00px;top:614.18px;width:3.00px;height:1.3px;background:#4ec9b0"></div>
<div class="a" style="left:38.00px;top:614.18px;width:6.00px;height:1.3px;background:#dcdcaa"></div>
<div class="a" style="left:45.00px;top:614.18px;width:7.00px;height:1.3px;background:#4ec9b0"></div>
<div class="a" style="left:53.00px;top:614.18px;width:4.00px;height:1.3px;background:#ce9178"></div>
<div class="a" style="left:0.00px;top:616.17px;width:1.00px;height:1.3px;background:#ffd700"></div>
<div class="a" style="left:0.00px;top:620.14px;width:6.00px;height:1.3px;background:#569cd6"></div>
<div class="a" style="left:7.00px;top:620.14px;width:4.00px;height:1.3px;background:#569cd6"></div>
<div class="a" style="left:12.00px;top:620.14px;width:18.00px;height:1.3px;background:#dcdcaa"></div>
<div class="a" style="left:34.00px;top:620.14px;width:5.00px;height:1.3px;background:#569cd6"></div>
<div class="a" style="left:40.00px;top:620.14px;width:6.00px;height:1.3px;background:#569cd6"></div>
<div class="a" style="left:47.00px;top:620.14px;width:14.00px;height:1.3px;background:#4ec9b0"></div>
<div class="a" style="left:0.00px;top:622.12px;width:1.00px;height:1.3px;background:#ffd700"></div>
<div class="a" style="left:12.00px;top:624.11px;width:3.00px;height:1.3px;background:#c586c0"></div>
<div class="a" style="left:16.00px;top:624.11px;width:7.00px;height:1.3px;background:#9cdcfe"></div>
<div class="a" style="left:24.00px;top:624.11px;width:5.00px;height:1.3px;background:#ce9178"></div>
<div class="a" style="left:30.00px;top:624.11px;width:8.00px;height:1.3px;background:#4ec9b0"></div>
<div class="a" style="left:39.00px;top:624.11px;width:2.00px;height:1.3px;background:#9cdcfe"></div>
<div class="a" style="left:42.00px;top:624.11px;width:7.00px;height:1.3px;background:#9cdcfe"></div>
<div class="a" style="left:4.00px;top:626.10px;width:3.00px;height:1.3px;background:#dcdcaa"></div>
<div class="a" style="left:8.00px;top:626.10px;width:5.00px;height:1.3px;background:#dcdcaa"></div>
<div class="a" style="left:14.00px;top:626.10px;width:2.00px;height:1.3px;background:#9cdcfe"></div>
<div class="a" style="left:17.00px;top:626.10px;width:3.00px;height:1.3px;background:#cccccc"></div>
<div class="a" style="left:21.00px;top:626.10px;width:7.00px;height:1.3px;background:#4ec9b0"></div>
<div class="a" style="left:29.00px;top:626.10px;width:4.00px;height:1.3px;background:#569cd6"></div>
<div class="a" style="left:34.00px;top:626.10px;width:8.00px;height:1.3px;background:#dcdcaa"></div>
<div class="a" style="left:43.00px;top:626.10px;width:8.00px;height:1.3px;background:#ce9178"></div>
<div class="a" style="left:52.00px;top:626.10px;width:7.00px;height:1.3px;background:#dcdcaa"></div>
<div class="a" style="left:60.00px;top:626.10px;width:8.00px;height:1.3px;background:#ce9178"></div>
<div class="a" style="left:8.00px;top:628.08px;width:4.00px;height:1.3px;background:#4ec9b0"></div>
<div class="a" style="left:13.00px;top:628.08px;width:7.00px;height:1.3px;background:#ce9178"></div>
<div class="a" style="left:21.00px;top:628.08px;width:7.00px;height:1.3px;background:#c586c0"></div>
<div class="a" style="left:4.00px;top:630.07px;width:4.00px;height:1.3px;background:#c586c0"></div>
<div class="a" style="left:9.00px;top:630.07px;width:3.00px;height:1.3px;background:#4ec9b0"></div>
<div class="a" style="left:13.00px;top:630.07px;width:2.00px;height:1.3px;background:#569cd6"></div>
<div class="a" style="left:16.00px;top:630.07px;width:7.00px;height:1.3px;background:#dcdcaa"></div>
<div class="a" style="left:24.00px;top:630.07px;width:7.00px;height:1.3px;background:#4ec9b0"></div>
<div class="a" style="left:12.00px;top:632.05px;width:2.00px;height:1.3px;background:#4ec9b0"></div>
<div class="a" style="left:15.00px;top:632.05px;width:8.00px;height:1.3px;background:#dcdcaa"></div>
<div class="a" style="left:24.00px;top:632.05px;width:7.00px;height:1.3px;background:#dcdcaa"></div>
<div class="a" style="left:32.00px;top:632.05px;width:5.00px;height:1.3px;background:#9cdcfe"></div>
<div class="a" style="left:38.00px;top:632.05px;width:2.00px;height:1.3px;background:#cccccc"></div>
<div class="a" style="left:41.00px;top:632.05px;width:8.00px;height:1.3px;background:#dcdcaa"></div>
<div class="a" style="left:50.00px;top:632.05px;width:8.00px;height:1.3px;background:#ce9178"></div>
<div class="a" style="left:4.00px;top:634.03px;width:2.00px;height:1.3px;background:#4ec9b0"></div>
<div class="a" style="left:7.00px;top:634.03px;width:4.00px;height:1.3px;background:#c586c0"></div>
<div class="a" style="left:12.00px;top:634.03px;width:8.00px;height:1.3px;background:#4ec9b0"></div>
<div class="a" style="left:4.00px;top:636.02px;width:2.00px;height:1.3px;background:#cccccc"></div>
<div class="a" style="left:7.00px;top:636.02px;width:8.00px;height:1.3px;background:#9cdcfe"></div>
<div class="a" style="left:16.00px;top:636.02px;width:4.00px;height:1.3px;background:#9cdcfe"></div>
<div class="a" style="left:21.00px;top:636.02px;width:7.00px;height:1.3px;background:#dcdcaa"></div>
<div class="a" style="left:4.00px;top:638.00px;width:6.00px;height:1.3px;background:#dcdcaa"></div>
<div class="a" style="left:11.00px;top:638.00px;width:3.00px;height:1.3px;background:#9cdcfe"></div>
<div class="a" style="left:15.00px;top:638.00px;width:7.00px;height:1.3px;background:#cccccc"></div>
<div class="a" style="left:23.00px;top:638.00px;width:7.00px;height:1.3px;background:#cccccc"></div>
<div class="a" style="left:31.00px;top:638.00px;width:7.00px;height:1.3px;background:#c586c0"></div>
<div class="a" style="left:0.00px;top:639.99px;width:1.00px;height:1.3px;background:#ffd700"></div>
<div class="a" style="left:0.00px;top:643.96px;width:6.00px;height:1.3px;background:#569cd6"></div>
<div class="a" style="left:7.00px;top:643.96px;width:4.00px;height:1.3px;background:#569cd6"></div>
<div class="a" style="left:12.00px;top:643.96px;width:14.00px;height:1.3px;background:#dcdcaa"></div>
<div class="a" style="left:34.00px;top:643.96px;width:5.00px;height:1.3px;background:#569cd6"></div>
<div class="a" style="left:40.00px;top:643.96px;width:6.00px;height:1.3px;background:#569cd6"></div>
<div class="a" style="left:47.00px;top:643.96px;width:10.00px;height:1.3px;background:#4ec9b0"></div>
<div class="a" style="left:0.00px;top:645.94px;width:1.00px;height:1.3px;background:#ffd700"></div>
<div class="a" style="left:8.00px;top:647.93px;width:3.00px;height:1.3px;background:#dcdcaa"></div>
<div class="a" style="left:12.00px;top:647.93px;width:3.00px;height:1.3px;background:#ce9178"></div>
<div class="a" style="left:16.00px;top:647.93px;width:6.00px;height:1.3px;background:#4ec9b0"></div>
<div class="a" style="left:23.00px;top:647.93px;width:8.00px;height:1.3px;background:#ce9178"></div>
<div class="a" style="left:32.00px;top:647.93px;width:6.00px;height:1.3px;background:#ce9178"></div>
<div class="a" style="left:39.00px;top:647.93px;width:4.00px;height:1.3px;background:#c586c0"></div>
<div class="a" style="left:4.00px;top:649.91px;width:8.00px;height:1.3px;background:#c586c0"></div>
<div class="a" style="left:13.00px;top:649.91px;width:6.00px;height:1.3px;background:#9cdcfe"></div>
<div class="a" style="left:20.00px;top:649.91px;width:4.00px;height:1.3px;background:#4ec9b0"></div>
<div class="a" style="left:25.00px;top:649.91px;width:2.00px;height:1.3px;background:#9cdcfe"></div>
<div class="a" style="left:28.00px;top:649.91px;width:4.00px;height:1.3px;background:#9cdcfe"></div>
<div class="a" style="left:33.00px;top:649.91px;width:7.00px;height:1.3px;background:#c586c0"></div>
<div class="a" style="left:12.00px;top:651.90px;width:7.00px;height:1.3px;background:#c586c0"></div>
<div class="a" style="left:20.00px;top:651.90px;width:2.00px;height:1.3px;background:#9cdcfe"></div>
<div class="a" style="left:23.00px;top:651.90px;width:6.00px;height:1.3px;background:#cccccc"></div>
<div class="a" style="left:30.00px;top:651.90px;width:3.00px;height:1.3px;background:#569cd6"></div>
<div class="a" style="left:34.00px;top:651.90px;width:6.00px;height:1.3px;background:#dcdcaa"></div>
<div class="a" style="left:41.00px;top:651.90px;width:6.00px;height:1.3px;background:#ce9178"></div>
<div class="a" style="left:48.00px;top:651.90px;width:2.00px;height:1.3px;background:#dcdcaa"></div>
<div class="a" style="left:51.00px;top:651.90px;width:5.00px;height:1.3px;background:#dcdcaa"></div>
<div class="a" style="left:57.00px;top:651.90px;width:7.00px;height:1.3px;background:#4ec9b0"></div>
<div class="a" style="left:4.00px;top:653.88px;width:5.00px;height:1.3px;background:#9cdcfe"></div>
<div class="a" style="left:10.00px;top:653.88px;width:2.00px;height:1.3px;background:#cccccc"></div>
<div class="a" style="left:13.00px;top:653.88px;width:3.00px;height:1.3px;background:#dcdcaa"></div>
<div class="a" style="left:17.00px;top:653.88px;width:2.00px;height:1.3px;background:#c586c0"></div>
<div class="a" style="left:20.00px;top:653.88px;width:8.00px;height:1.3px;background:#4ec9b0"></div>
<div class="a" style="left:29.00px;top:653.88px;width:6.00px;height:1.3px;background:#4ec9b0"></div>
<div class="a" style="left:36.00px;top:653.88px;width:6.00px;height:1.3px;background:#9cdcfe"></div>
<div class="a" style="left:43.00px;top:653.88px;width:6.00px;height:1.3px;background:#cccccc"></div>
<div class="a" style="left:50.00px;top:653.88px;width:3.00px;height:1.3px;background:#ce9178"></div>
<div class="a" style="left:0.00px;top:655.87px;width:1.00px;height:1.3px;background:#ffd700"></div>
<div class="a" style="left:0.00px;top:659.84px;width:6.00px;height:1.3px;background:#569cd6"></div>
<div class="a" style="left:7.00px;top:659.84px;width:4.00px;height:1.3px;background:#569cd6"></div>
<div class="a" style="left:12.00px;top:659.84px;width:10.00px;height:1.3px;background:#dcdcaa"></div>
<div class="a" style="left:34.00px;top:659.84px;width:5.00px;height:1.3px;background:#569cd6"></div>
<div class="a" style="left:40.00px;top:659.84px;width:6.00px;height:1.3px;background:#569cd6"></div>
<div class="a" style="left:47.00px;top:659.84px;width:8.00px;height:1.3px;background:#4ec9b0"></div>
<div class="a" style="left:0.00px;top:661.83px;width:1.00px;height:1.3px;background:#ffd700"></div>
<div class="a" style="left:8.00px;top:663.81px;width:5.00px;height:1.3px;background:#ce9178"></div>
<div class="a" style="left:14.00px;top:663.81px;width:3.00px;height:1.3px;background:#c586c0"></div>
<div class="a" style="left:18.00px;top:663.81px;width:6.00px;height:1.3px;background:#569cd6"></div>
<div class="a" style="left:25.00px;top:663.81px;width:8.00px;height:1.3px;background:#9cdcfe"></div>
<div class="a" style="left:34.00px;top:663.81px;width:3.00px;height:1.3px;background:#4ec9b0"></div>
<div class="a" style="left:38.00px;top:663.81px;width:6.00px;height:1.3px;background:#ce9178"></div>
<div class="a" style="left:45.00px;top:663.81px;width:2.00px;height:1.3px;background:#cccccc"></div>
<div class="a" style="left:48.00px;top:663.81px;width:3.00px;height:1.3px;background:#c586c0"></div>
<div class="a" style="left:52.00px;top:663.81px;width:6.00px;height:1.3px;background:#569cd6"></div>
<div class="a" style="left:12.00px;top:667.78px;width:2.00px;height:1.3px;background:#dcdcaa"></div>
<div class="a" style="left:15.00px;top:667.78px;width:4.00px;height:1.3px;background:#9cdcfe"></div>
<div class="a" style="left:20.00px;top:667.78px;width:2.00px;height:1.3px;background:#9cdcfe"></div>
<div class="a" style="left:23.00px;top:667.78px;width:7.00px;height:1.3px;background:#ce9178"></div>
<div class="a" style="left:12.00px;top:669.76px;width:3.00px;height:1.3px;background:#4ec9b0"></div>
<div class="a" style="left:16.00px;top:669.76px;width:5.00px;height:1.3px;background:#dcdcaa"></div>
<div class="a" style="left:22.00px;top:669.76px;width:2.00px;height:1.3px;background:#9cdcfe"></div>
<div class="a" style="left:25.00px;top:669.76px;width:7.00px;height:1.3px;background:#cccccc"></div>
<div class="a" style="left:33.00px;top:669.76px;width:7.00px;height:1.3px;background:#dcdcaa"></div>
<div class="a" style="left:41.00px;top:669.76px;width:8.00px;height:1.3px;background:#9cdcfe"></div>
<div class="a" style="left:0.00px;top:673.74px;width:1.00px;height:1.3px;background:#ffd700"></div>
<div class="a" style="left:0.00px;top:677.71px;width:6.00px;height:1.3px;background:#569cd6"></div>
<div class="a" style="left:7.00px;top:677.71px;width:4.00px;height:1.3px;background:#569cd6"></div>
<div class="a" style="left:12.00px;top:677.71px;width:18.00px;height:1.3px;background:#dcdcaa"></div>
<div class="a" style="left:34.00px;top:677.71px;width:5.00px;height:1.3px;background:#569cd6"></div>
<div class="a" style="left:40.00px;top:677.71px;width:6.00px;height:1.3px;background:#569cd6"></div>
<div class="a" style="left:47.00px;top:677.71px;width:10.00px;height:1.3px;background:#4ec9b0"></div>
<div class="a" style="left:0.00px;top:679.69px;width:1.00px;height:1.3px;background:#ffd700"></div>
<div class="a" style="left:8.00px;top:681.67px;width:3.00px;height:1.3px;background:#dcdcaa"></div>
<div class="a" style="left:12.00px;top:681.67px;width:5.00px;height:1.3px;background:#dcdcaa"></div>
<div class="a" style="left:18.00px;top:681.67px;width:2.00px;height:1.3px;background:#c586c0"></div>
<div class="a" style="left:21.00px;top:681.67px;width:8.00px;height:1.3px;background:#dcdcaa"></div>
<div class="a" style="left:4.00px;top:683.66px;width:2.00px;height:1.3px;background:#9cdcfe"></div>
<div class="a" style="left:7.00px;top:683.66px;width:2.00px;height:1.3px;background:#cccccc"></div>
<div class="a" style="left:10.00px;top:683.66px;width:4.00px;height:1.3px;background:#dcdcaa"></div>
<div class="a" style="left:15.00px;top:683.66px;width:5.00px;height:1.3px;background:#9cdcfe"></div>
<div class="a" style="left:21.00px;top:683.66px;width:5.00px;height:1.3px;background:#ce9178"></div>
<div class="a" style="left:27.00px;top:683.66px;width:5.00px;height:1.3px;background:#dcdcaa"></div>
<div class="a" style="left:33.00px;top:683.66px;width:6.00px;height:1.3px;background:#9cdcfe"></div>
<div class="a" style="left:40.00px;top:683.66px;width:8.00px;height:1.3px;background:#dcdcaa"></div>
<div class="a" style="left:8.00px;top:685.64px;width:3.00px;height:1.3px;background:#9cdcfe"></div>
<div class="a" style="left:12.00px;top:685.64px;width:4.00px;height:1.3px;background:#4ec9b0"></div>
<div class="a" style="left:17.00px;top:685.64px;width:6.00px;height:1.3px;background:#ce9178"></div>
<div class="a" style="left:24.00px;top:685.64px;width:3.00px;height:1.3px;background:#dcdcaa"></div>
<div class="a" style="left:28.00px;top:685.64px;width:6.00px;height:1.3px;background:#dcdcaa"></div>
<div class="a" style="left:35.00px;top:685.64px;width:4.00px;height:1.3px;background:#9cdcfe"></div>
<div class="a" style="left:40.00px;top:685.64px;width:5.00px;height:1.3px;background:#9cdcfe"></div>
<div class="a" style="left:4.00px;top:687.63px;width:4.00px;height:1.3px;background:#4ec9b0"></div>
<div class="a" style="left:9.00px;top:687.63px;width:4.00px;height:1.3px;background:#4ec9b0"></div>
<div class="a" style="left:14.00px;top:687.63px;width:7.00px;height:1.3px;background:#4ec9b0"></div>
<div class="a" style="left:22.00px;top:687.63px;width:3.00px;height:1.3px;background:#569cd6"></div>
<div class="a" style="left:26.00px;top:687.63px;width:5.00px;height:1.3px;background:#9cdcfe"></div>
<div class="a" style="left:32.00px;top:687.63px;width:8.00px;height:1.3px;background:#c586c0"></div>
<div class="a" style="left:41.00px;top:687.63px;width:6.00px;height:1.3px;background:#cccccc"></div>
<div class="a" style="left:0.00px;top:689.62px;width:1.00px;height:1.3px;background:#ffd700"></div>
<div class="a" style="left:0.00px;top:693.59px;width:6.00px;height:1.3px;background:#569cd6"></div>
<div class="a" style="left:7.00px;top:693.59px;width:4.00px;height:1.3px;background:#569cd6"></div>
<div class="a" style="left:12.00px;top:693.59px;width:8.00px;height:1.3px;background:#dcdcaa"></div>
<div class="a" style="left:34.00px;top:693.59px;width:5.00px;height:1.3px;background:#569cd6"></div>
<div class="a" style="left:40.00px;top:693.59px;width:6.00px;height:1.3px;background:#569cd6"></div>
<div class="a" style="left:47.00px;top:693.59px;width:11.00px;height:1.3px;background:#4ec9b0"></div>
<div class="a" style="left:0.00px;top:695.57px;width:1.00px;height:1.3px;background:#ffd700"></div>
<div class="a" style="left:4.00px;top:697.55px;width:5.00px;height:1.3px;background:#ce9178"></div>
<div class="a" style="left:10.00px;top:697.55px;width:4.00px;height:1.3px;background:#c586c0"></div>
<div class="a" style="left:15.00px;top:697.55px;width:8.00px;height:1.3px;background:#ce9178"></div>
<div class="a" style="left:24.00px;top:697.55px;width:3.00px;height:1.3px;background:#cccccc"></div>
<div class="a" style="left:28.00px;top:697.55px;width:5.00px;height:1.3px;background:#9cdcfe"></div>
<div class="a" style="left:12.00px;top:699.54px;width:7.00px;height:1.3px;background:#dcdcaa"></div>
<div class="a" style="left:20.00px;top:699.54px;width:8.00px;height:1.3px;background:#9cdcfe"></div>
<div class="a" style="left:29.00px;top:699.54px;width:7.00px;height:1.3px;background:#9cdcfe"></div>
<div class="a" style="left:37.00px;top:699.54px;width:4.00px;height:1.3px;background:#c586c0"></div>
<div class="a" style="left:42.00px;top:699.54px;width:7.00px;height:1.3px;background:#569cd6"></div>
<div class="a" style="left:4.00px;top:701.52px;width:8.00px;height:1.3px;background:#4ec9b0"></div>
<div class="a" style="left:13.00px;top:701.52px;width:3.00px;height:1.3px;background:#c586c0"></div>
<div class="a" style="left:17.00px;top:701.52px;width:3.00px;height:1.3px;background:#569cd6"></div>
<div class="a" style="left:21.00px;top:701.52px;width:7.00px;height:1.3px;background:#dcdcaa"></div>
<div class="a" style="left:29.00px;top:701.52px;width:8.00px;height:1.3px;background:#4ec9b0"></div>
<div class="a" style="left:38.00px;top:701.52px;width:8.00px;height:1.3px;background:#9cdcfe"></div>
<div class="a" style="left:47.00px;top:701.52px;width:6.00px;height:1.3px;background:#4ec9b0"></div>
<div class="a" style="left:54.00px;top:701.52px;width:5.00px;height:1.3px;background:#569cd6"></div>
<div class="a" style="left:60.00px;top:701.52px;width:3.00px;height:1.3px;background:#cccccc"></div>
<div class="a" style="left:8.00px;top:703.51px;width:8.00px;height:1.3px;background:#569cd6"></div>
<div class="a" style="left:17.00px;top:703.51px;width:3.00px;height:1.3px;background:#dcdcaa"></div>
<div class="a" style="left:0.00px;top:707.48px;width:1.00px;height:1.3px;background:#ffd700"></div>
<div class="a" style="left:0.00px;top:711.45px;width:6.00px;height:1.3px;background:#569cd6"></div>
<div class="a" style="left:7.00px;top:711.45px;width:4.00px;height:1.3px;background:#569cd6"></div>
<div class="a" style="left:12.00px;top:711.45px;width:13.00px;height:1.3px;background:#dcdcaa"></div>
<div class="a" style="left:34.00px;top:711.45px;width:5.00px;height:1.3px;background:#569cd6"></div>
<div class="a" style="left:40.00px;top:711.45px;width:6.00px;height:1.3px;background:#569cd6"></div>
<div class="a" style="left:47.00px;top:711.45px;width:12.00px;height:1.3px;background:#4ec9b0"></div>
<div class="a" style="left:0.00px;top:713.43px;width:1.00px;height:1.3px;background:#ffd700"></div>
<div class="a" style="left:12.00px;top:715.42px;width:6.00px;height:1.3px;background:#4ec9b0"></div>
<div class="a" style="left:19.00px;top:715.42px;width:5.00px;height:1.3px;background:#c586c0"></div>
<div class="a" style="left:25.00px;top:715.42px;width:2.00px;height:1.3px;background:#cccccc"></div>
<div class="a" style="left:28.00px;top:715.42px;width:7.00px;height:1.3px;background:#dcdcaa"></div>
<div class="a" style="left:36.00px;top:715.42px;width:3.00px;height:1.3px;background:#ce9178"></div>
<div class="a" style="left:8.00px;top:717.40px;width:7.00px;height:1.3px;background:#569cd6"></div>
<div class="a" style="left:16.00px;top:717.40px;width:8.00px;height:1.3px;background:#ce9178"></div>
<div class="a" style="left:25.00px;top:717.40px;width:3.00px;height:1.3px;background:#dcdcaa"></div>
<div class="a" style="left:29.00px;top:717.40px;width:3.00px;height:1.3px;background:#cccccc"></div>
<div class="a" style="left:33.00px;top:717.40px;width:3.00px;height:1.3px;background:#9cdcfe"></div>
<div class="a" style="left:37.00px;top:717.40px;width:4.00px;height:1.3px;background:#c586c0"></div>
<div class="a" style="left:4.00px;top:719.39px;width:5.00px;height:1.3px;background:#9cdcfe"></div>
<div class="a" style="left:10.00px;top:719.39px;width:3.00px;height:1.3px;background:#cccccc"></div>
<div class="a" style="left:14.00px;top:719.39px;width:3.00px;height:1.3px;background:#4ec9b0"></div>
<div class="a" style="left:0.00px;top:721.38px;width:1.00px;height:1.3px;background:#ffd700"></div>
<div class="a" style="left:0.00px;top:725.35px;width:6.00px;height:1.3px;background:#569cd6"></div>
<div class="a" style="left:7.00px;top:725.35px;width:4.00px;height:1.3px;background:#569cd6"></div>
<div class="a" style="left:12.00px;top:725.35px;width:17.00px;height:1.3px;background:#dcdcaa"></div>
<div class="a" style="left:34.00px;top:725.35px;width:5.00px;height:1.3px;background:#569cd6"></div>
<div class="a" style="left:40.00px;top:725.35px;width:6.00px;height:1.3px;background:#569cd6"></div>
<div class="a" style="left:47.00px;top:725.35px;width:9.00px;height:1.3px;background:#4ec9b0"></div>
<div class="a" style="left:0.00px;top:727.33px;width:1.00px;height:1.3px;background:#ffd700"></div>
<div class="a" style="left:12.00px;top:729.32px;width:3.00px;height:1.3px;background:#dcdcaa"></div>
<div class="a" style="left:16.00px;top:729.32px;width:8.00px;height:1.3px;background:#dcdcaa"></div>
<div class="a" style="left:25.00px;top:729.32px;width:6.00px;height:1.3px;background:#9cdcfe"></div>
<div class="a" style="left:8.00px;top:731.30px;width:8.00px;height:1.3px;background:#9cdcfe"></div>
<div class="a" style="left:17.00px;top:731.30px;width:7.00px;height:1.3px;background:#cccccc"></div>
<div class="a" style="left:25.00px;top:731.30px;width:6.00px;height:1.3px;background:#9cdcfe"></div>
<div class="a" style="left:32.00px;top:731.30px;width:3.00px;height:1.3px;background:#4ec9b0"></div>
<div class="a" style="left:36.00px;top:731.30px;width:6.00px;height:1.3px;background:#c586c0"></div>
<div class="a" style="left:43.00px;top:731.30px;width:6.00px;height:1.3px;background:#9cdcfe"></div>
<div class="a" style="left:50.00px;top:731.30px;width:2.00px;height:1.3px;background:#9cdcfe"></div>
<div class="a" style="left:53.00px;top:731.30px;width:6.00px;height:1.3px;background:#cccccc"></div>
<div class="a" style="left:60.00px;top:731.30px;width:5.00px;height:1.3px;background:#dcdcaa"></div>
<div class="a" style="left:66.00px;top:731.30px;width:2.00px;height:1.3px;background:#cccccc"></div>
<div class="a" style="left:8.00px;top:733.28px;width:7.00px;height:1.3px;background:#569cd6"></div>
<div class="a" style="left:16.00px;top:733.28px;width:8.00px;height:1.3px;background:#569cd6"></div>
<div class="a" style="left:25.00px;top:733.28px;width:7.00px;height:1.3px;background:#dcdcaa"></div>
<div class="a" style="left:33.00px;top:733.28px;width:7.00px;height:1.3px;background:#ce9178"></div>
<div class="a" style="left:8.00px;top:735.27px;width:8.00px;height:1.3px;background:#ce9178"></div>
<div class="a" style="left:17.00px;top:735.27px;width:3.00px;height:1.3px;background:#ce9178"></div>
<div class="a" style="left:21.00px;top:735.27px;width:3.00px;height:1.3px;background:#4ec9b0"></div>
<div class="a" style="left:25.00px;top:735.27px;width:8.00px;height:1.3px;background:#9cdcfe"></div>
<div class="a" style="left:4.00px;top:737.25px;width:3.00px;height:1.3px;background:#dcdcaa"></div>
<div class="a" style="left:8.00px;top:737.25px;width:7.00px;height:1.3px;background:#9cdcfe"></div>
<div class="a" style="left:16.00px;top:737.25px;width:7.00px;height:1.3px;background:#4ec9b0"></div>
<div class="a" style="left:24.00px;top:737.25px;width:7.00px;height:1.3px;background:#c586c0"></div>
<div class="a" style="left:32.00px;top:737.25px;width:3.00px;height:1.3px;background:#c586c0"></div>
<div class="a" style="left:12.00px;top:739.24px;width:6.00px;height:1.3px;background:#9cdcfe"></div>
<div class="a" style="left:19.00px;top:739.24px;width:6.00px;height:1.3px;background:#569cd6"></div>
<div class="a" style="left:26.00px;top:739.24px;width:5.00px;height:1.3px;background:#cccccc"></div>
<div class="a" style="left:32.00px;top:739.24px;width:3.00px;height:1.3px;background:#c586c0"></div>
<div class="a" style="left:36.00px;top:739.24px;width:7.00px;height:1.3px;background:#dcdcaa"></div>
<div class="a" style="left:44.00px;top:739.24px;width:8.00px;height:1.3px;background:#dcdcaa"></div>
<div class="a" style="left:53.00px;top:739.24px;width:3.00px;height:1.3px;background:#9cdcfe"></div>
<div class="a" style="left:57.00px;top:739.24px;width:3.00px;height:1.3px;background:#9cdcfe"></div>
<div class="a" style="left:61.00px;top:739.24px;width:7.00px;height:1.3px;background:#c586c0"></div>
<div class="a" style="left:69.00px;top:739.24px;width:3.00px;height:1.3px;background:#c586c0"></div>
<div class="a" style="left:0.00px;top:741.23px;width:1.00px;height:1.3px;background:#ffd700"></div>
<div class="a" style="left:0.00px;top:745.20px;width:6.00px;height:1.3px;background:#569cd6"></div>
<div class="a" style="left:7.00px;top:745.20px;width:4.00px;height:1.3px;background:#569cd6"></div>
<div class="a" style="left:12.00px;top:745.20px;width:20.00px;height:1.3px;background:#dcdcaa"></div>
<div class="a" style="left:34.00px;top:745.20px;width:5.00px;height:1.3px;background:#569cd6"></div>
<div class="a" style="left:40.00px;top:745.20px;width:6.00px;height:1.3px;background:#569cd6"></div>
<div class="a" style="left:47.00px;top:745.20px;width:13.00px;height:1.3px;background:#4ec9b0"></div>
<div class="a" style="left:0.00px;top:747.18px;width:1.00px;height:1.3px;background:#ffd700"></div>
<div class="a" style="left:8.00px;top:749.16px;width:6.00px;height:1.3px;background:#4ec9b0"></div>
<div class="a" style="left:15.00px;top:749.16px;width:2.00px;height:1.3px;background:#cccccc"></div>
<div class="a" style="left:18.00px;top:749.16px;width:4.00px;height:1.3px;background:#cccccc"></div>
<div class="a" style="left:23.00px;top:749.16px;width:6.00px;height:1.3px;background:#c586c0"></div>
<div class="a" style="left:30.00px;top:749.16px;width:6.00px;height:1.3px;background:#dcdcaa"></div>
<div class="a" style="left:37.00px;top:749.16px;width:2.00px;height:1.3px;background:#9cdcfe"></div>
<div class="a" style="left:40.00px;top:749.16px;width:8.00px;height:1.3px;background:#9cdcfe"></div>
<div class="a" style="left:49.00px;top:749.16px;width:8.00px;height:1.3px;background:#4ec9b0"></div>
<div class="a" style="left:0.00px;top:751.15px;width:1.00px;height:1.3px;background:#ffd700"></div>
<div class="a" style="left:0.00px;top:755.12px;width:6.00px;height:1.3px;background:#569cd6"></div>
<div class="a" style="left:7.00px;top:755.12px;width:4.00px;height:1.3px;background:#569cd6"></div>
<div class="a" style="left:12.00px;top:755.12px;width:26.00px;height:1.3px;background:#dcdcaa"></div>
<div class="a" style="left:38.00px;top:755.12px;width:1.00px;height:1.3px;background:#ffd700"></div>
<div class="a" style="left:39.00px;top:755.12px;width:5.00px;height:1.3px;background:#569cd6"></div>
<div class="a" style="left:45.00px;top:755.12px;width:6.00px;height:1.3px;background:#569cd6"></div>
<div class="a" style="left:52.00px;top:755.12px;width:6.00px;height:1.3px;background:#4ec9b0"></div>
<div class="a" style="left:59.00px;top:755.12px;width:1.00px;height:1.3px;background:#cccccc"></div>
<div class="a" style="left:60.00px;top:755.12px;width:3.00px;height:1.3px;background:#9cdcfe"></div>
<div class="a" style="left:63.00px;top:755.12px;width:1.00px;height:1.3px;background:#cccccc"></div>
<div class="a" style="left:23.00px;top:757.11px;width:5.00px;height:1.3px;background:#569cd6"></div>
<div class="a" style="left:29.00px;top:757.11px;width:6.00px;height:1.3px;background:#569cd6"></div>
<div class="a" style="left:36.00px;top:757.11px;width:14.00px;height:1.3px;background:#4ec9b0"></div>
<div class="a" style="left:51.00px;top:757.11px;width:1.00px;height:1.3px;background:#cccccc"></div>
<div class="a" style="left:52.00px;top:757.11px;width:4.00px;height:1.3px;background:#9cdcfe"></div>
<div class="a" style="left:56.00px;top:757.11px;width:1.00px;height:1.3px;background:#ffd700"></div>
<div class="a" style="left:0.00px;top:759.09px;width:1.00px;height:1.3px;background:#ffd700"></div>
<div class="a" style="left:4.00px;top:761.08px;width:6.00px;height:1.3px;background:#dcdcaa"></div>
<div class="a" style="left:10.00px;top:761.08px;width:1.00px;height:1.3px;background:#da70d6"></div>
<div class="a" style="left:11.00px;top:761.08px;width:7.00px;height:1.3px;background:#ce9178"></div>
<div class="a" style="left:19.00px;top:761.08px;width:3.00px;height:1.3px;background:#ce9178"></div>
<div class="a" style="left:23.00px;top:761.08px;width:12.00px;height:1.3px;background:#ce9178"></div>
<div class="a" style="left:35.00px;top:761.08px;width:1.00px;height:1.3px;background:#da70d6"></div>
<div class="a" style="left:36.00px;top:761.08px;width:1.00px;height:1.3px;background:#cccccc"></div>
<div class="a" style="left:0.00px;top:763.06px;width:1.00px;height:1.3px;background:#ffd700"></div>
<div class="a" style="left:0.00px;top:767.03px;width:3.00px;height:1.3px;background:#569cd6"></div>
<div class="a" style="left:4.00px;top:767.03px;width:13.00px;height:1.3px;background:#dcdcaa"></div>
<div class="a" style="left:17.00px;top:767.03px;width:1.00px;height:1.3px;background:#ffd700"></div>
<div class="a" style="left:18.00px;top:767.03px;width:4.00px;height:1.3px;background:#569cd6"></div>
<div class="a" style="left:22.00px;top:767.03px;width:1.00px;height:1.3px;background:#ffd700"></div>
<div class="a" style="left:0.00px;top:769.01px;width:1.00px;height:1.3px;background:#ffd700"></div>
<div class="a" style="left:4.00px;top:771.00px;width:5.00px;height:1.3px;background:#569cd6"></div>
<div class="a" style="left:10.00px;top:771.00px;width:6.00px;height:1.3px;background:#569cd6"></div>
<div class="a" style="left:17.00px;top:771.00px;width:6.00px;height:1.3px;background:#4ec9b0"></div>
<div class="a" style="left:24.00px;top:771.00px;width:1.00px;height:1.3px;background:#cccccc"></div>
<div class="a" style="left:25.00px;top:771.00px;width:5.00px;height:1.3px;background:#569cd6"></div>
<div class="a" style="left:31.00px;top:771.00px;width:8.00px;height:1.3px;background:#9cdcfe"></div>
<div class="a" style="left:40.00px;top:771.00px;width:1.00px;height:1.3px;background:#cccccc"></div>
<div class="a" style="left:42.00px;top:771.00px;width:17.00px;height:1.3px;background:#569cd6"></div>
<div class="a" style="left:59.00px;top:771.00px;width:1.00px;height:1.3px;background:#da70d6"></div>
<div class="a" style="left:60.00px;top:771.00px;width:19.00px;height:1.3px;background:#9cdcfe"></div>
<div class="a" style="left:79.00px;top:771.00px;width:1.00px;height:1.3px;background:#da70d6"></div>
<div class="a" style="left:80.00px;top:771.00px;width:1.00px;height:1.3px;background:#cccccc"></div>
<div class="a" style="left:4.00px;top:774.97px;width:2.00px;height:1.3px;background:#c586c0"></div>
<div class="a" style="left:7.00px;top:774.97px;width:1.00px;height:1.3px;background:#da70d6"></div>
<div class="a" style="left:8.00px;top:774.97px;width:1.00px;height:1.3px;background:#cccccc"></div>
<div class="a" style="left:9.00px;top:774.97px;width:15.00px;height:1.3px;background:#dcdcaa"></div>
<div class="a" style="left:24.00px;top:774.97px;width:1.00px;height:1.3px;background:#179fff"></div>
<div class="a" style="left:25.00px;top:774.97px;width:8.00px;height:1.3px;background:#9cdcfe"></div>
<div class="a" style="left:33.00px;top:774.97px;width:1.00px;height:1.3px;background:#179fff"></div>
<div class="a" style="left:34.00px;top:774.97px;width:1.00px;height:1.3px;background:#da70d6"></div>
<div class="a" style="left:36.00px;top:774.97px;width:1.00px;height:1.3px;background:#da70d6"></div>
<div class="a" style="left:8.00px;top:776.96px;width:6.00px;height:1.3px;background:#dcdcaa"></div>
<div class="a" style="left:14.00px;top:776.96px;width:1.00px;height:1.3px;background:#179fff"></div>
<div class="a" style="left:15.00px;top:776.96px;width:8.00px;height:1.3px;background:#ce9178"></div>
<div class="a" style="left:24.00px;top:776.96px;width:6.00px;height:1.3px;background:#ce9178"></div>
<div class="a" style="left:31.00px;top:776.96px;width:3.00px;height:1.3px;background:#ce9178"></div>
<div class="a" style="left:35.00px;top:776.96px;width:9.00px;height:1.3px;background:#ce9178"></div>
<div class="a" style="left:44.00px;top:776.96px;width:1.00px;height:1.3px;background:#179fff"></div>
<div class="a" style="left:45.00px;top:776.96px;width:1.00px;height:1.3px;background:#cccccc"></div>
<div class="a" style="left:8.00px;top:778.94px;width:6.00px;height:1.3px;background:#c586c0"></div>
<div class="a" style="left:15.00px;top:778.94px;width:1.00px;height:1.3px;background:#b5cea8"></div>
<div class="a" style="left:16.00px;top:778.94px;width:1.00px;height:1.3px;background:#cccccc"></div>
<div class="a" style="left:4.00px;top:780.92px;width:1.00px;height:1.3px;background:#da70d6"></div>
<div class="a" style="left:4.00px;top:784.89px;width:11.00px;height:1.3px;background:#9cdcfe"></div>
<div class="a" style="left:16.00px;top:784.89px;width:1.00px;height:1.3px;background:#cccccc"></div>
<div class="a" style="left:18.00px;top:784.89px;width:1.00px;height:1.3px;background:#da70d6"></div>
<div class="a" style="left:19.00px;top:784.89px;width:6.00px;height:1.3px;background:#569cd6"></div>
<div class="a" style="left:26.00px;top:784.89px;width:14.00px;height:1.3px;background:#4ec9b0"></div>
<div class="a" style="left:40.00px;top:784.89px;width:1.00px;height:1.3px;background:#da70d6"></div>
<div class="a" style="left:42.00px;top:784.89px;width:1.00px;height:1.3px;background:#da70d6"></div>
<div class="a" style="left:8.00px;top:786.88px;width:5.00px;height:1.3px;background:#9cdcfe"></div>
<div class="a" style="left:14.00px;top:786.88px;width:1.00px;height:1.3px;background:#cccccc"></div>
<div class="a" style="left:16.00px;top:786.88px;width:15.00px;height:1.3px;background:#4fc1ff"></div>
<div class="a" style="left:31.00px;top:786.88px;width:1.00px;height:1.3px;background:#cccccc"></div>
<div class="a" style="left:8.00px;top:788.87px;width:5.00px;height:1.3px;background:#9cdcfe"></div>
<div class="a" style="left:14.00px;top:788.87px;width:1.00px;height:1.3px;background:#cccccc"></div>
<div class="a" style="left:16.00px;top:788.87px;width:15.00px;height:1.3px;background:#4fc1ff"></div>
<div class="a" style="left:31.00px;top:788.87px;width:1.00px;height:1.3px;background:#cccccc"></div>
<div class="a" style="left:4.00px;top:790.85px;width:1.00px;height:1.3px;background:#da70d6"></div>
<div class="a" style="left:5.00px;top:790.85px;width:1.00px;height:1.3px;background:#cccccc"></div>
<div class="a" style="left:4.00px;top:794.82px;width:2.00px;height:1.3px;background:#c586c0"></div>
<div class="a" style="left:7.00px;top:794.82px;width:1.00px;height:1.3px;background:#da70d6"></div>
<div class="a" style="left:8.00px;top:794.82px;width:18.00px;height:1.3px;background:#dcdcaa"></div>
<div class="a" style="left:26.00px;top:794.82px;width:1.00px;height:1.3px;background:#179fff"></div>
<div class="a" style="left:27.00px;top:794.82px;width:8.00px;height:1.3px;background:#9cdcfe"></div>
<div class="a" style="left:35.00px;top:794.82px;width:1.00px;height:1.3px;background:#cccccc"></div>
<div class="a" style="left:37.00px;top:794.82px;width:1.00px;height:1.3px;background:#cccccc"></div>
<div class="a" style="left:38.00px;top:794.82px;width:11.00px;height:1.3px;background:#9cdcfe"></div>
<div class="a" style="left:49.00px;top:794.82px;width:1.00px;height:1.3px;background:#cccccc"></div>
<div class="a" style="left:19.00px;top:796.80px;width:19.00px;height:1.3px;background:#dcdcaa"></div>
<div class="a" style="left:38.00px;top:796.80px;width:1.00px;height:1.3px;background:#179fff"></div>
<div class="a" style="left:40.00px;top:796.80px;width:1.00px;height:1.3px;background:#cccccc"></div>
<div class="a" style="left:42.00px;top:796.80px;width:1.00px;height:1.3px;background:#b5cea8"></div>
<div class="a" style="left:43.00px;top:796.80px;width:1.00px;height:1.3px;background:#da70d6"></div>
<div class="a" style="left:45.00px;top:796.80px;width:1.00px;height:1.3px;background:#da70d6"></div>
<div class="a" style="left:8.00px;top:798.79px;width:6.00px;height:1.3px;background:#dcdcaa"></div>
<div class="a" style="left:14.00px;top:798.79px;width:1.00px;height:1.3px;background:#179fff"></div>
<div class="a" style="left:15.00px;top:798.79px;width:7.00px;height:1.3px;background:#ce9178"></div>
<div class="a" style="left:23.00px;top:798.79px;width:9.00px;height:1.3px;background:#ce9178"></div>
<div class="a" style="left:33.00px;top:798.79px;width:3.00px;height:1.3px;background:#ce9178"></div>
<div class="a" style="left:37.00px;top:798.79px;width:13.00px;height:1.3px;background:#ce9178"></div>
<div class="a" style="left:50.00px;top:798.79px;width:1.00px;height:1.3px;background:#179fff"></div>
<div class="a" style="left:51.00px;top:798.79px;width:1.00px;height:1.3px;background:#cccccc"></div>
<div class="a" style="left:8.00px;top:800.77px;width:6.00px;height:1.3px;background:#c586c0"></div>
<div class="a" style="left:15.00px;top:800.77px;width:1.00px;height:1.3px;background:#b5cea8"></div>
<div class="a" style="left:16.00px;top:800.77px;width:1.00px;height:1.3px;background:#cccccc"></div>
<div class="a" style="left:4.00px;top:802.76px;width:1.00px;height:1.3px;background:#da70d6"></div>
<div class="a" style="left:4.00px;top:806.73px;width:18.00px;height:1.3px;background:#9cdcfe"></div>
<div class="a" style="left:23.00px;top:806.73px;width:1.00px;height:1.3px;background:#cccccc"></div>
<div class="a" style="left:25.00px;top:806.73px;width:1.00px;height:1.3px;background:#da70d6"></div>
<div class="a" style="left:26.00px;top:806.73px;width:6.00px;height:1.3px;background:#569cd6"></div>
<div class="a" style="left:33.00px;top:806.73px;width:14.00px;height:1.3px;background:#4ec9b0"></div>
<div class="a" style="left:47.00px;top:806.73px;width:1.00px;height:1.3px;background:#da70d6"></div>
<div class="a" style="left:49.00px;top:806.73px;width:1.00px;height:1.3px;background:#da70d6"></div>
<div class="a" style="left:8.00px;top:808.72px;width:5.00px;height:1.3px;background:#9cdcfe"></div>
<div class="a" style="left:14.00px;top:808.72px;width:1.00px;height:1.3px;background:#cccccc"></div>
<div class="a" style="left:16.00px;top:808.72px;width:22.00px;height:1.3px;background:#4fc1ff"></div>
<div class="a" style="left:38.00px;top:808.72px;width:1.00px;height:1.3px;background:#cccccc"></div>
<div class="a" style="left:8.00px;top:810.70px;width:5.00px;height:1.3px;background:#9cdcfe"></div>
<div class="a" style="left:14.00px;top:810.70px;width:1.00px;height:1.3px;background:#cccccc"></div>
<div class="a" style="left:16.00px;top:810.70px;width:15.00px;height:1.3px;background:#4fc1ff"></div>
<div class="a" style="left:31.00px;top:810.70px;width:1.00px;height:1.3px;background:#cccccc"></div>
<div class="a" style="left:4.00px;top:812.68px;width:1.00px;height:1.3px;background:#da70d6"></div>
<div class="a" style="left:5.00px;top:812.68px;width:1.00px;height:1.3px;background:#cccccc"></div>
<div class="a" style="left:4.00px;top:816.65px;width:2.00px;height:1.3px;background:#c586c0"></div>
<div class="a" style="left:7.00px;top:816.65px;width:1.00px;height:1.3px;background:#da70d6"></div>
<div class="a" style="left:8.00px;top:816.65px;width:18.00px;height:1.3px;background:#dcdcaa"></div>
<div class="a" style="left:26.00px;top:816.65px;width:1.00px;height:1.3px;background:#179fff"></div>
<div class="a" style="left:27.00px;top:816.65px;width:8.00px;height:1.3px;background:#9cdcfe"></div>
<div class="a" style="left:35.00px;top:816.65px;width:1.00px;height:1.3px;background:#cccccc"></div>
<div class="a" style="left:37.00px;top:816.65px;width:1.00px;height:1.3px;background:#cccccc"></div>
<div class="a" style="left:38.00px;top:816.65px;width:18.00px;height:1.3px;background:#9cdcfe"></div>
<div class="a" style="left:56.00px;top:816.65px;width:1.00px;height:1.3px;background:#cccccc"></div>
<div class="a" style="left:19.00px;top:818.64px;width:26.00px;height:1.3px;background:#dcdcaa"></div>
<div class="a" style="left:45.00px;top:818.64px;width:1.00px;height:1.3px;background:#179fff"></div>
<div class="a" style="left:47.00px;top:818.64px;width:1.00px;height:1.3px;background:#cccccc"></div>
<div class="a" style="left:49.00px;top:818.64px;width:1.00px;height:1.3px;background:#b5cea8"></div>
<div class="a" style="left:50.00px;top:818.64px;width:1.00px;height:1.3px;background:#da70d6"></div>
<div class="a" style="left:52.00px;top:818.64px;width:1.00px;height:1.3px;background:#da70d6"></div>
<div class="a" style="left:8.00px;top:820.62px;width:6.00px;height:1.3px;background:#dcdcaa"></div>
<div class="a" style="left:14.00px;top:820.62px;width:1.00px;height:1.3px;background:#179fff"></div>
<div class="a" style="left:15.00px;top:820.62px;width:7.00px;height:1.3px;background:#ce9178"></div>
<div class="a" style="left:23.00px;top:820.62px;width:9.00px;height:1.3px;background:#ce9178"></div>
<div class="a" style="left:33.00px;top:820.62px;width:6.00px;height:1.3px;background:#ce9178"></div>
<div class="a" style="left:40.00px;top:820.62px;width:3.00px;height:1.3px;background:#ce9178"></div>
<div class="a" style="left:44.00px;top:820.62px;width:13.00px;height:1.3px;background:#ce9178"></div>
<div class="a" style="left:57.00px;top:820.62px;width:1.00px;height:1.3px;background:#179fff"></div>
<div class="a" style="left:58.00px;top:820.62px;width:1.00px;height:1.3px;background:#cccccc"></div>
<div class="a" style="left:8.00px;top:822.61px;width:6.00px;height:1.3px;background:#c586c0"></div>
<div class="a" style="left:15.00px;top:822.61px;width:1.00px;height:1.3px;background:#b5cea8"></div>
<div class="a" style="left:16.00px;top:822.61px;width:1.00px;height:1.3px;background:#cccccc"></div>
<div class="a" style="left:4.00px;top:824.60px;width:1.00px;height:1.3px;background:#da70d6"></div>
<div class="a" style="left:4.00px;top:828.57px;width:11.00px;height:1.3px;background:#9cdcfe"></div>
<div class="a" style="left:16.00px;top:828.57px;width:1.00px;height:1.3px;background:#cccccc"></div>
<div class="a" style="left:18.00px;top:828.57px;width:1.00px;height:1.3px;background:#da70d6"></div>
<div class="a" style="left:19.00px;top:828.57px;width:6.00px;height:1.3px;background:#569cd6"></div>
<div class="a" style="left:26.00px;top:828.57px;width:14.00px;height:1.3px;background:#4ec9b0"></div>
<div class="a" style="left:40.00px;top:828.57px;width:1.00px;height:1.3px;background:#da70d6"></div>
<div class="a" style="left:42.00px;top:828.57px;width:1.00px;height:1.3px;background:#da70d6"></div>
<div class="a" style="left:8.00px;top:830.55px;width:5.00px;height:1.3px;background:#cccccc"></div>
<div class="a" style="left:14.00px;top:830.55px;width:1.00px;height:1.3px;background:#cccccc"></div>
<div class="a" style="left:16.00px;top:830.55px;width:15.00px;height:1.3px;background:#4fc1ff"></div>
<div class="a" style="left:31.00px;top:830.55px;width:1.00px;height:1.3px;background:#cccccc"></div>
<div class="a" style="left:8.00px;top:832.53px;width:5.00px;height:1.3px;background:#cccccc"></div>
<div class="a" style="left:14.00px;top:832.53px;width:1.00px;height:1.3px;background:#cccccc"></div>
<div class="a" style="left:16.00px;top:832.53px;width:15.00px;height:1.3px;background:#4fc1ff"></div>
<div class="a" style="left:31.00px;top:832.53px;width:1.00px;height:1.3px;background:#cccccc"></div>
<div class="a" style="left:4.00px;top:834.52px;width:2.00px;height:1.3px;background:#cccccc"></div>
<div class="a" style="left:4.00px;top:838.49px;width:2.00px;height:1.3px;background:#cccccc"></div>
<div class="a" style="left:7.00px;top:838.49px;width:1.00px;height:1.3px;background:#cccccc"></div>
<div class="a" style="left:8.00px;top:838.49px;width:18.00px;height:1.3px;background:#dcdcaa"></div>
<div class="a" style="left:26.00px;top:838.49px;width:10.00px;height:1.3px;background:#9cdcfe"></div>
<div class="a" style="left:37.00px;top:838.49px;width:13.00px;height:1.3px;background:#9cdcfe"></div>
<div class="a" style="left:19.00px;top:840.48px;width:19.00px;height:1.3px;background:#dcdcaa"></div>
<div class="a" style="left:38.00px;top:840.48px;width:1.00px;height:1.3px;background:#cccccc"></div>
<div class="a" style="left:40.00px;top:840.48px;width:1.00px;height:1.3px;background:#cccccc"></div>
<div class="a" style="left:42.00px;top:840.48px;width:2.00px;height:1.3px;background:#cccccc"></div>
<div class="a" style="left:45.00px;top:840.48px;width:1.00px;height:1.3px;background:#cccccc"></div>
<div class="a" style="left:8.00px;top:842.46px;width:6.00px;height:1.3px;background:#dcdcaa"></div>
<div class="a" style="left:14.00px;top:842.46px;width:8.00px;height:1.3px;background:#ce9178"></div>
<div class="a" style="left:23.00px;top:842.46px;width:9.00px;height:1.3px;background:#ce9178"></div>
<div class="a" style="left:33.00px;top:842.46px;width:3.00px;height:1.3px;background:#ce9178"></div>
<div class="a" style="left:37.00px;top:842.46px;width:15.00px;height:1.3px;background:#ce9178"></div>
<div class="a" style="left:8.00px;top:844.45px;width:6.00px;height:1.3px;background:#c586c0"></div>
<div class="a" style="left:15.00px;top:844.45px;width:2.00px;height:1.3px;background:#cccccc"></div>
<div class="a" style="left:4.00px;top:846.43px;width:1.00px;height:1.3px;background:#da70d6"></div>
<div class="a" style="left:4.00px;top:850.40px;width:6.00px;height:1.3px;background:#dcdcaa"></div>
<div class="a" style="left:10.00px;top:850.40px;width:12.00px;height:1.3px;background:#ce9178"></div>
<div class="a" style="left:23.00px;top:850.40px;width:3.00px;height:1.3px;background:#ce9178"></div>
<div class="a" style="left:27.00px;top:850.40px;width:14.00px;height:1.3px;background:#ce9178"></div>
<div class="a" style="left:4.00px;top:852.38px;width:6.00px;height:1.3px;background:#c586c0"></div>
<div class="a" style="left:11.00px;top:852.38px;width:2.00px;height:1.3px;background:#cccccc"></div>
<div class="a" style="left:0.00px;top:854.37px;width:1.00px;height:1.3px;background:#ffd700"></div>
</div>
<div class="a" style="left:1790px;top:884.80px;width:113px;height:2.2px;background:#7e2f2b"></div>
<div class="a" style="left:1903px;top:115px;width:1px;height:878px;background:#0b0b0b;"></div>
<div class="a" style="left:1903px;top:898px;width:17px;height:39px;background:#444444;"></div>
<div class="a" style="left:1915.5px;top:904px;width:4.5px;height:6px;background:#a84a47;"></div>
<div class="a" style="left:1904px;top:915.8px;width:16px;height:2px;background:#9a9a9a;"></div>
<div class="a" style="left:1909px;top:153px;width:7px;height:6px;background:#8a6a2a;"></div>
<div class="a" style="left:1220px;top:115px;width:570px;height:70px;overflow:hidden"><div class="a" style="left:22px;top:-10px;width:522px;height:50.5px;background:#202020;border-left:3px solid #3a3a3a;border-bottom:1px solid #2a2a2a;border-radius:0 0 6px 6px;box-shadow:0 0 8px 2px #00000099"></div></div>
<svg class="a" style="left:1252px;top:127px;" width="10" height="15" viewBox="0 0 10 15" fill="none"><path d="M1.5 1 L8 7.5 L1.5 14" stroke="#cccccc" stroke-width="1.4"/></svg>
<div class="a" style="left:1269px;top:119px;width:276px;height:31px;background:#313131;border:1px solid #3c3c3c;border-radius:3px"></div>
<svg class="a" style="left:1491.5px;top:138.5px;" width="23" height="6" viewBox="0 0 23 6" fill="none"><path d="M1 0.5 V3.5 H22 V0.5" stroke="#cccccc" stroke-width="1.3"/></svg>
<svg class="a" style="left:1521px;top:124px;" width="18" height="20" viewBox="0 0 18 20" fill="none"><rect x="1" y="13" width="5" height="5" fill="#cccccc"/><path d="M12 3.2 V12.5 M7.5 5.5 L16.5 10.3 M16.5 5.5 L7.5 10.3" stroke="#cccccc" stroke-width="1.6"/></svg>
<svg class="a" style="left:1645px;top:125px;" width="16" height="18" viewBox="0 0 16 18" fill="none"><path d="M8 17 V2 M1.5 8.5 L8 2 L14.5 8.5" stroke="#cccccc" stroke-width="1.5"/></svg>
<svg class="a" style="left:1676px;top:125px;" width="16" height="18" viewBox="0 0 16 18" fill="none"><path d="M8 1 V16 M1.5 9.5 L8 16 L14.5 9.5" stroke="#cccccc" stroke-width="1.5"/></svg>
<svg class="a" style="left:1705px;top:127px;" width="20" height="14" viewBox="0 0 20 14" fill="none"><path d="M1 1.5H19M1 7H19M1 12.5H12" stroke="#cccccc" stroke-width="1.5"/></svg>
<svg class="a" style="left:1739px;top:128px;" width="14" height="14" viewBox="0 0 14 14" fill="none"><path d="M1 1L13 13M13 1L1 13" stroke="#cccccc" stroke-width="1.5"/></svg>
<div class="a" style="left:973.5px;top:360.5px;width:927px;height:313.5px;background:#202020;border:1px solid #454545;border-radius:3px;box-shadow:0 0 8px 2px #00000055"></div>
<div class="a" style="left:975.5px;top:396px;width:925px;height:1px;background:#454545;"></div>
<div class="a" style="left:985.2px;top:591.3px;width:70px;height:19px;background:#2b2b2b;border-radius:3px"></div>
<div class="a" style="left:0px;top:994px;width:43px;height:26px;background:#4a7bd4;"></div>
<svg class="a" style="left:15px;top:997.5px;" width="14" height="16" viewBox="0 0 14 16" fill="none"><path d="M1.5 14.5 L6.5 9.5 L1.5 4.5 M13 1.5 L8 6.5 L13 11" stroke="#ffffff" stroke-width="1.4" fill="none"/></svg>
<svg class="a" style="left:54px;top:997px;" width="15" height="17" viewBox="0 0 15 17" fill="none"><path d="M2 2.5 Q2 1 3.5 1 H13.5 V13 H3.5 Q2 13 2 14.5 Z M2 14.5 Q2 16 3.5 16 H5 M9 16 H13.5 V13" stroke="#cccccc" stroke-width="1.4"/><path d="M5 13 V17.5 L6.5 16.3 L8 17.5 V13" fill="#cccccc"/><path d="M5 3.5V6M5 7.5V10" stroke="#cccccc" stroke-width="1.2"/></svg>
<svg class="a" style="left:155px;top:998px;" width="18" height="17" viewBox="0 0 18 17" fill="none"><path d="M1.5 8.5 L8.5 1.5 H16 V9 L9 16 Z" stroke="#cccccc" stroke-width="1.4" stroke-linejoin="round"/><circle cx="12.5" cy="5" r="1.3" fill="#cccccc"/></svg>
<svg class="a" style="left:231px;top:997px;" width="18" height="18" viewBox="0 0 18 18" fill="none"><circle cx="9" cy="9" r="7.5" stroke="#cccccc" stroke-width="1.4"/><path d="M5.8 5.8 L12.2 12.2 M12.2 5.8 L5.8 12.2" stroke="#cccccc" stroke-width="1.4"/></svg>
<svg class="a" style="left:265px;top:997px;" width="17" height="17" viewBox="0 0 17 17" fill="none"><path d="M8.5 1.5 L16 15.5 H1 Z" stroke="#cccccc" stroke-width="1.4" stroke-linejoin="round"/><path d="M8.5 6 V11 M8.5 12.5 V14" stroke="#cccccc" stroke-width="1.5"/></svg>
<svg class="a" style="left:315px;top:997px;" width="18" height="18" viewBox="0 0 18 18" fill="none"><circle cx="9" cy="7" r="2" stroke="#cccccc" stroke-width="1.3"/><path d="M9 9 L5.5 17 M9 9 L12.5 17 M6.5 14 H11.5" stroke="#cccccc" stroke-width="1.3"/><path d="M4.5 2.5 Q2 7 4.5 11.5 M13.5 2.5 Q16 7 13.5 11.5 M2 1 Q-1.5 7 2 13 M16 1 Q19.5 7 16 13" stroke="#cccccc" stroke-width="1.3"/></svg>
<svg class="a" style="left:364px;top:997px;" width="18" height="18" viewBox="0 0 18 18" fill="none"><circle cx="9" cy="9" r="7.5" stroke="#cccccc" stroke-width="1.4"/><path d="M9 7.5 V13.5" stroke="#cccccc" stroke-width="1.6"/><circle cx="9" cy="5" r="1" fill="#cccccc"/></svg>
<svg class="a" style="left:555px;top:993px" width="30" height="27" viewBox="555 993 30 27" fill="none"><path d="M561.6 999.9 L564.6 1000.9 L566.9 1004.7 L564 1004.3 L561.9 1002.6 Z" stroke="#cccccc" stroke-width="1.2" stroke-linejoin="round"/><path d="M570.3 1008.4 L574.2 1012.7" stroke="#cccccc" stroke-width="3.3" stroke-linecap="round"/><path d="M570.8 1009 L573.7 1012.1" stroke="#181818" stroke-width="0.9"/><path d="M562.6 1012.4 L570 1005.4" stroke="#cccccc" stroke-width="3.3" stroke-linecap="round"/><path d="M563.2 1011.8 L569.4 1006" stroke="#181818" stroke-width="0.9"/><circle cx="573.6" cy="1002.3" r="3.7" stroke="#cccccc" stroke-width="1.4"/><path d="M573.6 1002.3 L577.8 998.3" stroke="#181818" stroke-width="2.4"/></svg>
<svg class="a" style="left:703px;top:997px;" width="17" height="17" viewBox="0 0 17 17" fill="none"><polygon points="13.90,7.01 16.18,7.16 16.18,9.84 13.90,9.99 13.37,11.26 14.88,12.99 12.99,14.88 11.26,13.37 9.99,13.90 9.84,16.18 7.16,16.18 7.01,13.90 5.74,13.37 4.01,14.88 2.12,12.99 3.63,11.26 3.10,9.99 0.82,9.84 0.82,7.16 3.10,7.01 3.63,5.74 2.12,4.01 4.01,2.12 5.74,3.63 7.01,3.10 7.16,0.82 9.84,0.82 9.99,3.10 11.26,3.63 12.99,2.12 14.88,4.01 13.37,5.74" stroke="#cccccc" stroke-width="1.3" stroke-linejoin="round" fill="none"/><circle cx="8.5" cy="8.5" r="2.2" stroke="#cccccc" stroke-width="1.3"/></svg>
<svg class="a" style="left:822px;top:997px;" width="17" height="17" viewBox="0 0 17 17" fill="none"><ellipse cx="8.5" cy="10" rx="4.5" ry="5.5" stroke="#cccccc" stroke-width="1.4"/><path d="M5.5 5 Q8.5 2 11.5 5 M1 5 L4.3 7 M16 5 L12.7 7 M1 10 H4 M13 10 H16 M1.5 15.5 L4.5 13.5 M15.5 15.5 L12.5 13.5 M8.5 6 V15" stroke="#cccccc" stroke-width="1.3"/></svg>
<svg class="a" style="left:861px;top:998px;" width="14" height="16" viewBox="0 0 14 16" fill="none"><path d="M1.5 1.5 L12.5 8 L1.5 14.5 Z" stroke="#cccccc" stroke-width="1.4" stroke-linejoin="round"/></svg>
<svg class="a" style="left:898px;top:997px;" width="15" height="17" viewBox="0 0 15 17" fill="none"><path d="M5 1 H10 M5.5 1 V6.5 L1 15.5 H14 L9.5 6.5 V1" stroke="#cccccc" stroke-width="1.4" stroke-linejoin="round"/><path d="M3 11.5 H12" stroke="#cccccc" stroke-width="1.2"/></svg>
<div class="a" style="left:1687px;top:994px;width:187px;height:26px;background:#726020;"></div>
<svg class="a" style="left:1694px;top:994px" width="28" height="26" viewBox="1694 994 28 26" fill="none"><g transform="rotate(-20 1708 1006.5)"><path fill-rule="evenodd" d="M1700.6 998.3 H1715.4 Q1716.5 998.3 1716.5 999.4 V1013.6 Q1716.5 1014.7 1715.4 1014.7 H1700.6 Q1699.5 1014.7 1699.5 1013.6 V999.4 Q1699.5 998.3 1700.6 998.3 Z M1708 1000.2 A6.3 6.3 0 1 0 1708 1012.8 A6.3 6.3 0 1 0 1708 1000.2 Z" fill="#ffffff"/><path d="M1712.5 1002 L1717 997.5 M1703.5 1011 L1699 1015.5" stroke="#726020" stroke-width="1.8"/></g><g transform="rotate(-45 1708 1006.5)"><rect x="1703.5" y="1004.8" width="5.6" height="3.4" rx="1.7" stroke="#ffffff" stroke-width="1.2"/><rect x="1706.9" y="1004.8" width="5.6" height="3.4" rx="1.7" stroke="#ffffff" stroke-width="1.2"/></g></svg>
<svg class="a" style="left:1884px;top:997px;" width="17" height="18" viewBox="0 0 17 18" fill="none"><path d="M3 12.5 V7.5 Q3 2 8.5 2 Q14 2 14 7.5 V12.5 L16 14.5 H1 Z" stroke="#cccccc" stroke-width="1.4" stroke-linejoin="round"/><path d="M6.5 16.5 Q8.5 18 10.5 16.5" stroke="#cccccc" stroke-width="1.4"/></svg>
<div class="a" style="left:848px;top:1025px;width:48px;height:8px;border-radius:5px;background:#2a3140"></div>
<div class="t" style="left:54.60px;top:12.11px;font-size:16.25px;line-height:20.31px;color:#cccccc;">File</div>
<div class="t" style="left:98.75px;top:12.11px;font-size:16.25px;line-height:20.31px;color:#cccccc;">Edit</div>
<div class="t" style="left:145.00px;top:12.11px;font-size:16.25px;line-height:20.31px;color:#cccccc;">Selection</div>
<div class="t" style="left:230.20px;top:12.11px;font-size:16.25px;line-height:20.31px;color:#cccccc;">View</div>
<div class="t" style="left:284.60px;top:12.11px;font-size:16.25px;line-height:20.31px;color:#cccccc;">Go</div>
<div class="t" style="left:325.40px;top:12.11px;font-size:16.25px;line-height:20.31px;color:#cccccc;">Run</div>
<div class="t" style="left:374.10px;top:12.11px;font-size:16.25px;line-height:20.31px;color:#cccccc;">Terminal</div>
<div class="t" style="left:453.90px;top:12.11px;font-size:16.25px;line-height:20.31px;color:#cccccc;">Help</div>
<div class="t" style="left:960.40px;top:12.44px;font-size:15.5px;line-height:19.38px;color:#cccccc;letter-spacing:-0.319px;">peripheral_uart</div>
<div class="t" style="left:85.50px;top:58.14px;font-size:13.75px;line-height:17.19px;color:#cccccc;transform:scaleX(0.8319);transform-origin:0 0;">EXPLORER</div>
<div class="t" style="left:85.50px;top:94.14px;font-size:13.75px;line-height:17.19px;color:#cccccc;font-weight:bold;transform:scaleX(0.9065);transform-origin:0 0;">PERIPHERAL_UART</div>
<div class="t" style="left:102.90px;top:119.56px;font-size:16px;line-height:20.0px;color:#cccccc;">boards</div>
<div class="t" style="left:102.90px;top:147.06px;font-size:16px;line-height:20.0px;color:#cccccc;">build</div>
<div class="t" style="left:102.90px;top:174.56px;font-size:16px;line-height:20.0px;color:#f48771;">src</div>
<div class="t" style="left:92.30px;top:201.26px;font-size:16.3px;line-height:20.38px;color:#519aba;font-weight:bold;transform:scaleX(0.8754);transform-origin:0 0;">C</div>
<div class="t" style="left:112.90px;top:202.06px;font-size:16px;line-height:20.0px;color:#f48771;">main.c</div>
<div class="t" style="left:92.30px;top:228.76px;font-size:16.3px;line-height:20.38px;color:#519aba;font-weight:bold;transform:scaleX(0.8754);transform-origin:0 0;">C</div>
<div class="t" style="left:112.90px;top:229.56px;font-size:16px;line-height:20.0px;color:#cccccc;">uart_async_adapter.c</div>
<div class="t" style="left:92.30px;top:256.26px;font-size:16.3px;line-height:20.38px;color:#a074c4;font-weight:bold;transform:scaleX(0.8754);transform-origin:0 0;">C</div>
<div class="t" style="left:112.90px;top:257.06px;font-size:16px;line-height:20.0px;color:#cccccc;">uart_async_adapter.h</div>
<div class="t" style="left:102.40px;top:284.56px;font-size:16px;line-height:20.0px;color:#cccccc;">app.overlay</div>
<div class="t" style="left:81.50px;top:311.08px;font-size:17px;line-height:21.25px;color:#519aba;font-weight:bold;transform:scaleX(0.9173);transform-origin:0 0;">M</div>
<div class="t" style="left:102.40px;top:312.06px;font-size:16px;line-height:20.0px;color:#cccccc;">CMakeLists.txt</div>
<div class="t" style="left:102.40px;top:339.56px;font-size:16px;line-height:20.0px;color:#cccccc;">Kconfig</div>
<div class="t" style="left:102.40px;top:367.06px;font-size:16px;line-height:20.0px;color:#cccccc;">nrf5340dk_app_sr_net.conf</div>
<div class="t" style="left:102.40px;top:394.56px;font-size:16px;line-height:20.0px;color:#cccccc;">nrf5340dk_mcuboot_sr_net.conf</div>
<div class="t" style="left:102.40px;top:422.06px;font-size:16px;line-height:20.0px;color:#cccccc;">prj_cdc.conf</div>
<div class="t" style="left:102.40px;top:449.56px;font-size:16px;line-height:20.0px;color:#cccccc;">prj_minimal.conf</div>
<div class="t" style="left:102.40px;top:477.06px;font-size:16px;line-height:20.0px;color:#cccccc;">prj.conf</div>
<div class="t" style="left:102.40px;top:504.56px;font-size:16px;line-height:20.0px;color:#cccccc;">README.rst</div>
<div class="t" style="left:84.50px;top:531.08px;font-size:17px;line-height:21.25px;color:#a074c4;font-weight:bold;font-style:italic;">!</div>
<div class="t" style="left:102.40px;top:532.06px;font-size:16px;line-height:20.0px;color:#cccccc;">sample.yaml</div>
<div class="t" style="left:102.40px;top:559.56px;font-size:16px;line-height:20.0px;color:#cccccc;">usb.overlay</div>
<div class="t" style="left:487.00px;top:203.83px;font-size:15px;line-height:18.75px;color:#f48771;">1</div>
<div class="t" style="left:85.50px;top:944.34px;font-size:13.75px;line-height:17.19px;color:#cccccc;font-weight:bold;letter-spacing:-0.560px;">OUTLINE</div>
<div class="t" style="left:85.50px;top:972.54px;font-size:13.75px;line-height:17.19px;color:#cccccc;font-weight:bold;letter-spacing:-0.453px;">TIMELINE</div>
<div class="t" style="left:534.30px;top:54.71px;font-size:18px;line-height:22.5px;color:#519aba;font-weight:bold;transform:scaleX(0.8000);transform-origin:0 0;">C</div>
<div class="t" style="left:555.60px;top:56.96px;font-size:16px;line-height:20.0px;color:#f48771;letter-spacing:-0.245px;">main.c</div>
<div class="t" style="left:623.00px;top:57.93px;font-size:15px;line-height:18.75px;color:#c47a66;">1</div>
<div class="t" style="left:535.30px;top:92.86px;font-size:16px;line-height:20.0px;color:#a9a9a9;">src</div>
<div class="t" style="left:581.70px;top:90.21px;font-size:18px;line-height:22.5px;color:#519aba;font-weight:bold;transform:scaleX(0.8000);transform-origin:0 0;">C</div>
<div class="t" style="left:603.00px;top:92.86px;font-size:16px;line-height:20.0px;color:#a9a9a9;letter-spacing:-0.245px;">main.c</div>
<div class="t" style="left:693.60px;top:92.86px;font-size:16px;line-height:20.0px;color:#a9a9a9;letter-spacing:-0.109px;">main_icm42605(void)</div>
<div class="t" style="left:1276.70px;top:125.66px;font-size:16px;line-height:20.0px;color:#cccccc;letter-spacing:-0.126px;">sensor.h</div>
<div class="t" style="left:1467.20px;top:126.42px;font-size:14.5px;line-height:18.12px;color:#cccccc;">Aa</div>
<div class="t" style="left:1495.00px;top:125.62px;font-size:14.5px;line-height:18.12px;color:#cccccc;">ab</div>
<div class="t" style="left:1552.30px;top:125.86px;font-size:16px;line-height:20.0px;color:#cccccc;transform:scaleX(0.8993);transform-origin:0 0;">1 of 1</div>
<div class="t" style="left:985.20px;top:369.31px;font-size:16.03px;line-height:20.04px;color:#cccccc;font-family:'Liberation Mono',monospace;"><span style="color:#cccccc">the size of an array must be greater than zero</span> <span style="color:#9d9d9d">C/C++(94)</span></div>
<div class="t" style="left:985.20px;top:404.71px;font-size:16.03px;line-height:20.04px;color:#cccccc;font-family:'Liberation Mono',monospace;"><span style="color:#c586c0">#define</span><span style="color:#cccccc"> </span><span style="color:#569cd6">DEVICE_DT_GET_ONE</span><span style="color:#569cd6">(</span><span style="color:#9cdcfe">compat</span><span style="color:#569cd6">)</span><span style="color:#cccccc"> </span><span style="color:#dcdcaa">COND_CODE_1</span><span style="color:#569cd6">(</span><span style="color:#dcdcaa">DT_HAS_COMPAT_STATUS_OKAY</span><span style="color:#569cd6">(</span><span style="color:#569cd6">compat</span><span style="color:#569cd6">)</span><span style="color:#cccccc">,</span></div>
<div class="t" style="left:985.20px;top:428.41px;font-size:16.03px;line-height:20.04px;color:#cccccc;font-family:'Liberation Mono',monospace;"><span style="color:#569cd6">(</span><span style="color:#dcdcaa">DEVICE_DT_GET</span><span style="color:#569cd6">(</span><span style="color:#dcdcaa">DT_COMPAT_GET_ANY_STATUS_OKAY</span><span style="color:#569cd6">(</span><span style="color:#569cd6">compat</span><span style="color:#569cd6">)))</span><span style="color:#cccccc">, </span><span style="color:#569cd6">(</span><span style="color:#dcdcaa">ZERO_OR_COMPILE_ERROR</span><span style="color:#569cd6">(</span><span style="color:#b5cea8">0</span><span style="color:#569cd6">)))</span></div>
<div class="t" style="left:985.20px;top:462.19px;font-size:17.2px;line-height:21.5px;color:#cccccc;letter-spacing:0.078px;">Get a device reference from a devicetree compatible. If an enabled devicetree node has the given compatible and a</div>
<div class="t" style="left:985.20px;top:485.89px;font-size:17.2px;line-height:21.5px;color:#cccccc;letter-spacing:0.121px;">device object was created from it, this returns a pointer to that device. If there no such devices, this will fail at compile</div>
<div class="t" style="left:985.20px;top:509.59px;font-size:17.2px;line-height:21.5px;color:#cccccc;letter-spacing:0.109px;">time. If there are multiple, this returns an arbitrary one. If this returns non-NULL, the device must be checked for</div>
<div class="t" style="left:985.20px;top:533.29px;font-size:17.2px;line-height:21.5px;color:#cccccc;letter-spacing:-0.200px;">readiness before use, e.g. with device_is_ready().</div>
<div class="t" style="left:985.20px;top:568.18px;font-size:17px;line-height:21.25px;color:#cccccc;font-weight:bold;letter-spacing:-0.228px;">Parameters:</div>
<div class="t" style="left:992.30px;top:591.49px;font-size:16.5px;line-height:20.62px;color:#cccccc;font-family:'Liberation Mono',monospace;transform:scaleX(0.9340);transform-origin:0 0;">compat</div>
<div class="t" style="left:1061.00px;top:590.69px;font-size:17.2px;line-height:21.5px;color:#cccccc;letter-spacing:0.069px;">– lowercase-and-underscores devicetree compatible</div>
<div class="t" style="left:985.20px;top:626.58px;font-size:17px;line-height:21.25px;color:#cccccc;font-weight:bold;letter-spacing:-0.329px;">Returns:</div>
<div class="t" style="left:985.20px;top:651.09px;font-size:17.2px;line-height:21.5px;color:#cccccc;letter-spacing:0.155px;">a pointer to a device</div>
<div class="t" style="left:74.40px;top:998.23px;font-size:15px;line-height:18.75px;color:#cccccc;letter-spacing:0.026px;">nrf/west.yml</div>
<div class="t" style="left:172.50px;top:998.23px;font-size:15px;line-height:18.75px;color:#cccccc;transform:scaleX(0.9174);transform-origin:0 0;">v2.4.2</div>
<div class="t" style="left:253.50px;top:998.23px;font-size:15px;line-height:18.75px;color:#cccccc;">1</div>
<div class="t" style="left:286.90px;top:998.23px;font-size:15px;line-height:18.75px;color:#cccccc;">2</div>
<div class="t" style="left:336.00px;top:998.23px;font-size:15px;line-height:18.75px;color:#cccccc;">0</div>
<div class="t" style="left:385.60px;top:998.23px;font-size:15px;line-height:18.75px;color:#cccccc;letter-spacing:-0.294px;">CMake: [Debug]: Ready</div>
<div class="t" style="left:581.60px;top:998.23px;font-size:15px;line-height:18.75px;color:#cccccc;letter-spacing:-0.192px;">No Kit Selected</div>
<div class="t" style="left:725.30px;top:998.23px;font-size:15px;line-height:18.75px;color:#cccccc;letter-spacing:-0.365px;">Build</div>
<div class="t" style="left:778.80px;top:998.23px;font-size:15px;line-height:18.75px;color:#cccccc;letter-spacing:-0.211px;">[all]</div>
<div class="t" style="left:918.40px;top:998.23px;font-size:15px;line-height:18.75px;color:#cccccc;transform:scaleX(0.9296);transform-origin:0 0;">Run CTest</div>
<div class="t" style="left:1271.00px;top:998.23px;font-size:15px;line-height:18.75px;color:#cccccc;letter-spacing:-0.398px;">Ln 759, Col 33</div>
<div class="t" style="left:1385.40px;top:998.23px;font-size:15px;line-height:18.75px;color:#cccccc;transform:scaleX(0.9041);transform-origin:0 0;">Tab Size: 4</div>
<div class="t" style="left:1473.10px;top:998.23px;font-size:15px;line-height:18.75px;color:#cccccc;transform:scaleX(0.9176);transform-origin:0 0;">UTF-8</div>
<div class="t" style="left:1532.20px;top:998.23px;font-size:15px;line-height:18.75px;color:#cccccc;transform:scaleX(0.8373);transform-origin:0 0;">CRLF</div>
<div class="t" style="left:1584.40px;top:998.23px;font-size:15px;line-height:18.75px;color:#cccccc;letter-spacing:-0.094px;">{ }</div>
<div class="t" style="left:1607.25px;top:998.23px;font-size:15px;line-height:18.75px;color:#cccccc;">C</div>
<div class="t" style="left:1634.60px;top:998.23px;font-size:15px;line-height:18.75px;color:#cccccc;letter-spacing:-0.308px;">Win32</div>
<div class="t" style="left:1721.25px;top:998.23px;font-size:15px;line-height:18.75px;color:#ffffff;letter-spacing:-0.057px;">peripheral_uart: build</div>
</body></html>
